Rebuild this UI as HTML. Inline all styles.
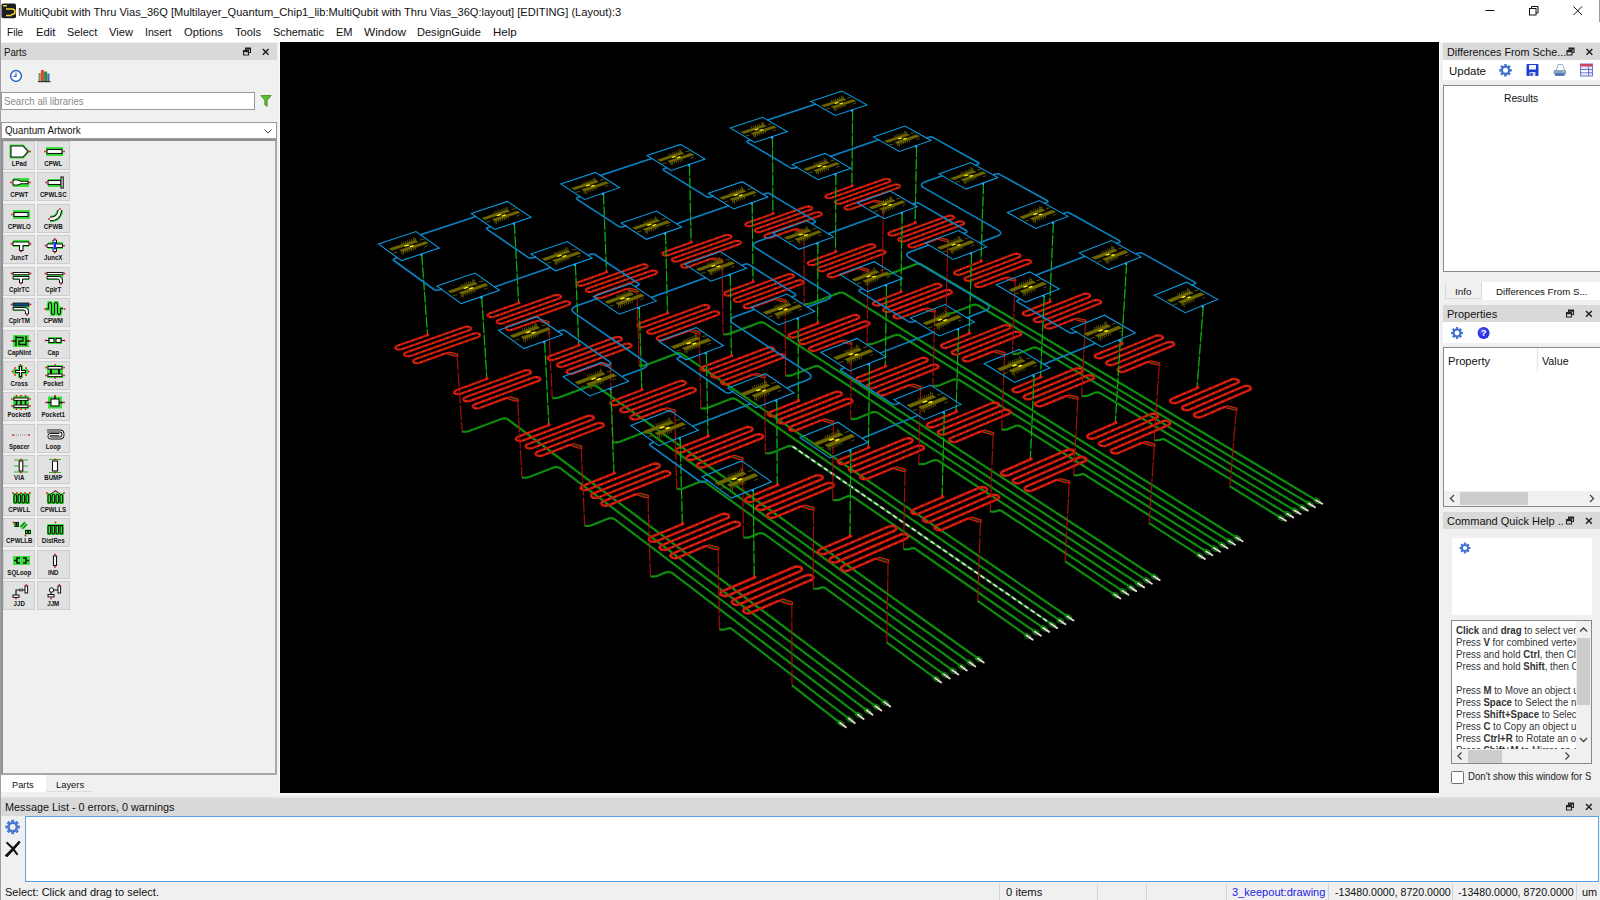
<!DOCTYPE html>
<html lang="en"><head><meta charset="utf-8"><title>MultiQubit with Thru Vias_36Q</title>
<style>
*{box-sizing:border-box;margin:0;padding:0}
html,body{width:1600px;height:900px;overflow:hidden;background:#f0f0f0}
body{font-family:"Liberation Sans",sans-serif;font-size:12px;color:#000;position:relative}
.abs{position:absolute}
.tx{position:absolute;white-space:nowrap;line-height:1;transform-origin:0 0;color:#111}
.hdr{position:absolute;height:17px;background:#d9d9d9}
.box{position:absolute;background:#fff;border:1px solid #828790}
#canvas{left:280px;top:42px;width:1159px;height:751px;background:#000;overflow:hidden}
.pbtn{position:absolute;width:32.5px;height:29px;background:#e1e1e1;border:1px solid #cdcdcd}
.pbtn b{position:absolute;left:-8px;right:-8px;bottom:1px;text-align:center;font-size:7.5px;line-height:8px;font-weight:bold;color:#111;transform:scaleX(.82)}
.pbtn svg{position:absolute;left:4px;top:2px}
.sb{position:absolute;background:#f0f0f0}
.thumb{position:absolute;background:#cdcdcd}
.sep{position:absolute;top:884px;width:1px;height:16px;background:#d4d4d4}
</style></head><body>
<div class="abs" style="left:0;top:0;width:1600px;height:42px;background:#fff"></div>
<!-- title bar -->
<svg class="abs" style="left:1px;top:3px" width="16" height="16" viewBox="0 0 16 16"><rect x="0.500" y="0.500" width="14.500" height="14.800" rx="1.800" fill="#1c1c26"/><path d="M2 2.800h4M5 5.900h6q3 0 3 2.800t-3 2.800h-1M5 12.600h5.500" fill="none" stroke="#f2d21c" stroke-width="1.500"/></svg>
<div class="tx" id="t0" style="left:18.0px;top:6.2px;font-size:11.6px;transform:scaleX(0.9556);">MultiQubit with Thru Vias_36Q [Multilayer_Quantum_Chip1_lib:MultiQubit with Thru Vias_36Q:layout] [EDITING] (Layout):3</div>
<svg class="abs" style="left:1480px;top:0" width="120" height="22" viewBox="0 0 120 22"><g fill="none" stroke="#111" stroke-width="1"><path d="M5.500 10.500h9"/><rect x="49.500" y="8.500" width="6.500" height="6.500"/><path d="M51.500 8.500v-2h6.500v6.500h-2"/><path d="M93.500 6.500l8.500 8.500M102 6.500l-8.500 8.500"/></g></svg>
<!-- menubar -->
<div class="tx" id="t1" style="left:6.5px;top:26.2px;font-size:11.6px;transform:scaleX(0.8684);">File</div><div class="tx" id="t2" style="left:35.5px;top:26.2px;font-size:11.6px;transform:scaleX(0.9750);">Edit</div><div class="tx" id="t3" style="left:67.0px;top:26.2px;font-size:11.6px;transform:scaleX(0.9375);">Select</div><div class="tx" id="t4" style="left:109.0px;top:26.2px;font-size:11.6px;transform:scaleX(0.9600);">View</div><div class="tx" id="t5" style="left:145.0px;top:26.2px;font-size:11.6px;transform:scaleX(0.9138);">Insert</div><div class="tx" id="t6" style="left:184.0px;top:26.2px;font-size:11.6px;transform:scaleX(0.9700);">Options</div><div class="tx" id="t7" style="left:235.0px;top:26.2px;font-size:11.6px;transform:scaleX(0.9630);">Tools</div><div class="tx" id="t8" style="left:273.3px;top:26.2px;font-size:11.6px;transform:scaleX(0.9407);">Schematic</div><div class="tx" id="t9" style="left:336.0px;top:26.2px;font-size:11.6px;transform:scaleX(0.9529);">EM</div><div class="tx" id="t10" style="left:363.6px;top:26.2px;font-size:11.6px;transform:scaleX(1.0195);">Window</div><div class="tx" id="t11" style="left:417.2px;top:26.2px;font-size:11.6px;transform:scaleX(0.9522);">DesignGuide</div><div class="tx" id="t12" style="left:493.2px;top:26.2px;font-size:11.6px;transform:scaleX(0.9917);">Help</div>

<!-- LEFT PANEL -->
<div class="hdr" style="left:1px;top:43px;width:276px"></div>
<div class="tx" id="t13" style="left:4.4px;top:47.2px;font-size:11px;transform:scaleX(0.8769);">Parts</div>
<svg class="abs" style="left:240px;top:45px" width="34" height="14" viewBox="0 0 34 14"><g fill="none" stroke="#222" stroke-width="1.100"><path d="M3.500 5.500h5v4.500h-5zM3.500 6.600h5" /><path d="M5.500 5.500v-2.500h5v4.500h-2M5.500 4.100h5"/><path d="M22.800 4l5.800 5.800M28.600 4l-5.800 5.800" stroke-width="1.500"/></g></svg>
<svg class="abs" style="left:8px;top:68px" width="48" height="16" viewBox="0 0 48 16"><circle cx="8" cy="8" r="5.400" fill="#fff" stroke="#2a62c8" stroke-width="1.500"/><path d="M8 4.500v3.800h-2.600" fill="none" stroke="#2a62c8" stroke-width="1.200"/><rect x="30.500" y="5" width="2.200" height="8" fill="#8c8c60"/><rect x="32.900" y="2" width="3" height="11" fill="#d8492e"/><rect x="36.100" y="3.500" width="3" height="9.500" fill="#2a8c3e"/><rect x="39.300" y="5.500" width="2.200" height="7.500" fill="#3a6fc8"/><rect x="30" y="13" width="12.500" height="1.200" fill="#333"/></svg>
<div class="box" style="left:1px;top:92px;width:254px;height:18px;border-color:#9a9a9a"></div>
<div class="tx" id="t14" style="left:4.0px;top:96.5px;font-size:10.3px;transform:scaleX(0.9412);color:#8a8a8a">Search all libraries</div>
<svg class="abs" style="left:260px;top:94px" width="12" height="14" viewBox="0 0 12 14"><path d="M0.800 1.500h10.400l-4 4.800v6l-2.400-1.500v-4.500z" fill="#5cb82e" stroke="#3f8f1e" stroke-width=".8"/></svg>
<div class="box" style="left:1px;top:122px;width:276px;height:17px;border-color:#9a9a9a"></div>
<div class="tx" id="t15" style="left:5.0px;top:126.1px;font-size:10.3px;transform:scaleX(0.9500);">Quantum Artwork</div>
<svg class="abs" style="left:263px;top:128px" width="10" height="8" viewBox="0 0 10 8"><path d="M1.500 1.500l3.500 3.500L8.500 1.500" fill="none" stroke="#444" stroke-width="1"/></svg>
<div class="abs" style="left:1px;top:139px;width:276px;height:636px;border:2px solid #a0a0a0;border-color:#8e9096 #a6a8ae #a6a8ae #8e9096;background:#f0f0f0"></div>
<div class="pbtn" style="left:2.6px;top:141.0px"><svg width="26" height="16" viewBox="0 0 26 16"><path d="M3 2h12l5 5.500l-5 5.500h-12z" fill="#fff" stroke="#3be03b" stroke-width="3"/><path d="M3 2h12l5 5.500l-5 5.500h-12z" fill="#fff" stroke="#111" stroke-width="1.1"/><rect x="21.2" y="6.7" width="1.6" height="1.6" fill="#e01010"/></svg><b>LPad</b></div>
<div class="pbtn" style="left:37.3px;top:141.0px"><svg width="26" height="16" viewBox="0 0 26 16"><rect x="4" y="3" width="17" height="9" fill="#3be03b"/><rect x="5" y="5.500" width="15" height="4" fill="#fff" stroke="#111" stroke-width="1.1"/><rect x="2.2" y="6.7" width="1.6" height="1.6" fill="#e01010"/><rect x="21.2" y="6.7" width="1.6" height="1.6" fill="#e01010"/></svg><b>CPWL</b></div>
<div class="pbtn" style="left:2.6px;top:172.4px"><svg width="26" height="16" viewBox="0 0 26 16"><rect x="5" y="3" width="16" height="9" fill="#3be03b"/><path d="M5 5h5l3 1.300h7v2.400h-7l-3 1.300h-5z" fill="#fff" stroke="#111" stroke-width="1.1"/><rect x="2.2" y="6.7" width="1.6" height="1.6" fill="#e01010"/><rect x="21.2" y="6.7" width="1.6" height="1.6" fill="#e01010"/></svg><b>CPWT</b></div>
<div class="pbtn" style="left:37.3px;top:172.4px"><svg width="26" height="16" viewBox="0 0 26 16"><rect x="6" y="4" width="14" height="8" fill="#3be03b"/><rect x="6" y="5.500" width="13" height="4" fill="#fff" stroke="#111" stroke-width="1.1"/><rect x="19" y="2" width="2.200" height="11" fill="#fff" stroke="#111" stroke-width="1.100"/><rect x="3.2" y="6.7" width="1.6" height="1.6" fill="#e01010"/></svg><b>CPWLSC</b></div>
<div class="pbtn" style="left:2.6px;top:203.9px"><svg width="26" height="16" viewBox="0 0 26 16"><rect x="5" y="3" width="17" height="9" fill="#3be03b"/><rect x="6" y="5.500" width="14" height="4" fill="#fff" stroke="#111" stroke-width="1.1"/><rect x="3.2" y="6.7" width="1.6" height="1.6" fill="#e01010"/></svg><b>CPWLO</b></div>
<div class="pbtn" style="left:37.3px;top:203.9px"><svg width="26" height="16" viewBox="0 0 26 16"><path d="M8 12q9 0 10-9" fill="none" stroke="#3be03b" stroke-width="6.500"/><path d="M8 12q9 0 10-9" fill="none" stroke="#111" stroke-width="4.400"/><path d="M8 12q9 0 10-9" fill="none" stroke="#fff" stroke-width="2.400"/><rect x="6.2" y="11.2" width="1.6" height="1.6" fill="#e01010"/><rect x="17.2" y="1.2" width="1.6" height="1.6" fill="#e01010"/></svg><b>CPWB</b></div>
<div class="pbtn" style="left:2.6px;top:235.3px"><svg width="26" height="16" viewBox="0 0 26 16"><rect x="5" y="2" width="16" height="7" fill="#3be03b"/><path d="M5 4h16v3.500h-6v5h-3.500v-5h-6.500z" fill="#fff" stroke="#111" stroke-width="1.1"/><rect x="2.7" y="4.9" width="1.6" height="1.6" fill="#e01010"/><rect x="21.7" y="4.9" width="1.6" height="1.6" fill="#e01010"/><rect x="12.4" y="12.7" width="1.6" height="1.6" fill="#e01010"/></svg><b>JuncT</b></div>
<div class="pbtn" style="left:37.3px;top:235.3px"><svg width="26" height="16" viewBox="0 0 26 16"><rect x="6" y="4" width="15" height="7" fill="#3be03b"/><path d="M5 6h6v-4h3.500v4h6v3.500h-6v4h-3.500v-4h-6z" fill="#fff" stroke="#111" stroke-width="1"/><rect x="11.500" y="4" width="2.600" height="7.500" fill="#1030ff"/><rect x="2.7" y="6.9" width="1.6" height="1.6" fill="#e01010"/><rect x="21.2" y="6.9" width="1.6" height="1.6" fill="#e01010"/><rect x="12.0" y="0.2" width="1.6" height="1.6" fill="#e01010"/><rect x="12.0" y="13.7" width="1.6" height="1.6" fill="#e01010"/></svg><b>JuncX</b></div>
<div class="pbtn" style="left:2.6px;top:266.7px"><svg width="26" height="16" viewBox="0 0 26 16"><rect x="5" y="2" width="16" height="8" fill="#3be03b"/><rect x="5" y="2.500" width="16" height="2.200" fill="#fff" stroke="#111" stroke-width="1"/><path d="M5 6.500h16v2.500h-6.500v4h-3v-4h-6.500z" fill="#fff" stroke="#111" stroke-width="1"/><rect x="2.7" y="2.7" width="1.6" height="1.6" fill="#e01010"/><rect x="21.7" y="2.7" width="1.6" height="1.6" fill="#e01010"/><rect x="12.2" y="12.7" width="1.6" height="1.6" fill="#e01010"/></svg><b>CplrTC</b></div>
<div class="pbtn" style="left:37.3px;top:266.7px"><svg width="26" height="16" viewBox="0 0 26 16"><rect x="5" y="2" width="16" height="8" fill="#3be03b"/><rect x="5" y="2.500" width="16" height="2.200" fill="#fff" stroke="#111" stroke-width="1"/><path d="M5 6.500h11q4.500 0 4.500 4.500v2h-3v-2q0-2-2-2h-10.500z" fill="#fff" stroke="#111" stroke-width="1"/><rect x="2.7" y="2.7" width="1.6" height="1.6" fill="#e01010"/><rect x="21.7" y="2.7" width="1.6" height="1.6" fill="#e01010"/><rect x="18.2" y="13.2" width="1.6" height="1.6" fill="#e01010"/></svg><b>CplrT</b></div>
<div class="pbtn" style="left:2.6px;top:298.1px"><svg width="26" height="16" viewBox="0 0 26 16"><rect x="5" y="2" width="16" height="8" fill="#3be03b"/><rect x="5" y="2" width="16" height="3" fill="#0a4a8a" stroke="#111" stroke-width=".8"/><path d="M5 6.500h11q4.500 0 4.500 4.500v2h-3v-2q0-2-2-2h-10.500z" fill="#fff" stroke="#111" stroke-width="1"/><rect x="2.7" y="2.7" width="1.6" height="1.6" fill="#e01010"/><rect x="21.7" y="2.7" width="1.6" height="1.6" fill="#e01010"/><rect x="18.2" y="13.2" width="1.6" height="1.6" fill="#e01010"/></svg><b>CplrTM</b></div>
<div class="pbtn" style="left:37.3px;top:298.1px"><svg width="26" height="16" viewBox="0 0 26 16"><path d="M4 8h2.500v-5q0-1.500 1.500-1.500t1.500 1.500v9q0 1.500 1.500 1.500t1.500-1.500v-9q0-1.500 1.500-1.500t1.500 1.500v9q0 1.500 1.500 1.500t1.500-1.500v-4.500h2.500" fill="none" stroke="#3be03b" stroke-width="3.400"/><path d="M4 8h2.500v-5q0-1.500 1.500-1.500t1.500 1.500v9q0 1.500 1.500 1.500t1.500-1.500v-9q0-1.500 1.500-1.500t1.500 1.500v9q0 1.500 1.500 1.500t1.500-1.500v-4.500h2.500" fill="none" stroke="#111" stroke-width="1"/><rect x="2.2" y="7.2" width="1.6" height="1.6" fill="#e01010"/><rect x="21.7" y="7.2" width="1.6" height="1.6" fill="#e01010"/></svg><b>CPWM</b></div>
<div class="pbtn" style="left:2.6px;top:329.6px"><svg width="26" height="16" viewBox="0 0 26 16"><rect x="5" y="2" width="16" height="12" fill="#3be03b"/><path d="M8 3v10M18 3v10M8 4.500h7v3.500h-4v3.500h7M5 8h3M18 8h3" fill="none" stroke="#111" stroke-width="1.300"/><rect x="3.2" y="7.2" width="1.6" height="1.6" fill="#e01010"/><rect x="21.2" y="7.2" width="1.6" height="1.6" fill="#e01010"/></svg><b>CapNInt</b></div>
<div class="pbtn" style="left:37.3px;top:329.6px"><svg width="26" height="16" viewBox="0 0 26 16"><rect x="6" y="4" width="14" height="7" fill="#3be03b"/><rect x="7" y="5.500" width="5" height="4" fill="#fff" stroke="#111" stroke-width="1.100"/><rect x="14" y="5.500" width="5" height="4" fill="#fff" stroke="#111" stroke-width="1.100"/><path d="M4 7.500h3M19 7.500h3" stroke="#111" stroke-width="1"/><rect x="2.7" y="6.7" width="1.6" height="1.6" fill="#e01010"/><rect x="21.7" y="6.7" width="1.6" height="1.6" fill="#e01010"/></svg><b>Cap</b></div>
<div class="pbtn" style="left:2.6px;top:361.0px"><svg width="26" height="16" viewBox="0 0 26 16"><path d="M10 1h5v4h5v5h-5v4h-5v-4h-5v-5h5z" fill="#3be03b"/><path d="M11.500 2.500h2v4h4v2h-4v4h-2v-4h-4v-2h4z" fill="#fff" stroke="#111" stroke-width="1.100"/><rect x="11.7" y="0.0" width="1.6" height="1.6" fill="#e01010"/><rect x="11.7" y="13.4" width="1.6" height="1.6" fill="#e01010"/><rect x="3.7" y="6.7" width="1.6" height="1.6" fill="#e01010"/><rect x="19.7" y="6.7" width="1.6" height="1.6" fill="#e01010"/><rect x="6.2" y="3.2" width="1.6" height="1.6" fill="#e01010"/><rect x="17.2" y="3.2" width="1.6" height="1.6" fill="#e01010"/><rect x="6.2" y="10.2" width="1.6" height="1.6" fill="#e01010"/><rect x="17.2" y="10.2" width="1.6" height="1.6" fill="#e01010"/></svg><b>Cross</b></div>
<div class="pbtn" style="left:37.3px;top:361.0px"><svg width="26" height="16" viewBox="0 0 26 16"><rect x="5" y="1" width="16" height="13" fill="#3be03b"/><rect x="6" y="2.500" width="14" height="2.600" fill="#fff" stroke="#111" stroke-width="1"/><rect x="6" y="10" width="14" height="2.600" fill="#fff" stroke="#111" stroke-width="1"/><path d="M9 5v5M17 5v5" stroke="#111" stroke-width="2"/><rect x="3.2" y="2.7" width="1.6" height="1.6" fill="#e01010"/><rect x="21.2" y="2.7" width="1.6" height="1.6" fill="#e01010"/><rect x="3.2" y="10.7" width="1.6" height="1.6" fill="#e01010"/><rect x="21.2" y="10.7" width="1.6" height="1.6" fill="#e01010"/><rect x="12.2" y="0.2" width="1.6" height="1.6" fill="#e01010"/><rect x="12.2" y="13.2" width="1.6" height="1.6" fill="#e01010"/></svg><b>Pocket</b></div>
<div class="pbtn" style="left:2.6px;top:392.4px"><svg width="26" height="16" viewBox="0 0 26 16"><rect x="5" y="1" width="16" height="13" fill="#3be03b"/><rect x="6" y="3" width="14" height="2.400" fill="#fff" stroke="#111" stroke-width="1"/><rect x="6" y="10" width="14" height="2.400" fill="#fff" stroke="#111" stroke-width="1"/><path d="M8.500 5v5M13 5v5M17.500 5v5" stroke="#111" stroke-width="1.600"/><rect x="3.2" y="3.2" width="1.6" height="1.6" fill="#e01010"/><rect x="21.2" y="3.2" width="1.6" height="1.6" fill="#e01010"/><rect x="3.2" y="10.2" width="1.6" height="1.6" fill="#e01010"/><rect x="21.2" y="10.2" width="1.6" height="1.6" fill="#e01010"/><rect x="7.7" y="0.0" width="1.6" height="1.6" fill="#e01010"/><rect x="12.2" y="0.0" width="1.6" height="1.6" fill="#e01010"/><rect x="16.7" y="0.0" width="1.6" height="1.6" fill="#e01010"/><rect x="7.7" y="13.4" width="1.6" height="1.6" fill="#e01010"/><rect x="12.2" y="13.4" width="1.6" height="1.6" fill="#e01010"/><rect x="16.7" y="13.4" width="1.6" height="1.6" fill="#e01010"/></svg><b>Pocket6</b></div>
<div class="pbtn" style="left:37.3px;top:392.4px"><svg width="26" height="16" viewBox="0 0 26 16"><rect x="6" y="1.500" width="14" height="12" fill="#3be03b"/><rect x="9" y="4" width="8" height="7" fill="#fff" stroke="#111" stroke-width="1.100"/><path d="M13 1v3M5 7.500h4M17 7.500h4" stroke="#111" stroke-width="1.400"/><rect x="12.2" y="0.0" width="1.6" height="1.6" fill="#e01010"/><rect x="3.2" y="6.7" width="1.6" height="1.6" fill="#e01010"/><rect x="21.2" y="6.7" width="1.6" height="1.6" fill="#e01010"/></svg><b>Pocket1</b></div>
<div class="pbtn" style="left:2.6px;top:423.9px"><svg width="26" height="16" viewBox="0 0 26 16"><path d="M6 8h14" stroke="#888" stroke-width="1" stroke-dasharray="1 1"/><rect x="4.2" y="7.2" width="1.6" height="1.6" fill="#e01010"/><rect x="20.2" y="7.2" width="1.6" height="1.6" fill="#e01010"/></svg><b>Spacer</b></div>
<div class="pbtn" style="left:37.3px;top:423.9px"><svg width="26" height="16" viewBox="0 0 26 16"><path d="M5 4h13q3 0 3 3.500t-3 3.500h-9q-2 0-2-1.700t2-1.700h8" fill="none" stroke="#111" stroke-width="3"/><path d="M5 4h13q3 0 3 3.500t-3 3.500h-9q-2 0-2-1.700t2-1.700h8" fill="none" stroke="#fff" stroke-width="1.200"/></svg><b>Loop</b></div>
<div class="pbtn" style="left:2.6px;top:455.3px"><svg width="26" height="16" viewBox="0 0 26 16"><path d="M6 2h14M6 8h14M6 14h14" stroke="#28b428" stroke-width="1"/><rect x="11.200" y="3" width="3.600" height="10" fill="#fff" stroke="#111" stroke-width="1.100"/><rect x="12.2" y="0.7" width="1.6" height="1.6" fill="#e01010"/><rect x="12.2" y="13.7" width="1.6" height="1.6" fill="#e01010"/></svg><b>VIA</b></div>
<div class="pbtn" style="left:37.3px;top:455.3px"><svg width="26" height="16" viewBox="0 0 26 16"><path d="M7 1.500h12M7 14.500h12" stroke="#28b428" stroke-width="1"/><rect x="10.500" y="3" width="5" height="10" fill="#fff" stroke="#111" stroke-width="1.100"/><rect x="12.2" y="0.7" width="1.6" height="1.6" fill="#e01010"/><rect x="12.2" y="13.7" width="1.6" height="1.6" fill="#e01010"/></svg><b>BUMP</b></div>
<div class="pbtn" style="left:2.6px;top:486.7px"><svg width="26" height="16" viewBox="0 0 26 16"><rect x="5" y="3" width="17" height="11" fill="#3be03b"/><rect x="6" y="4.500" width="2.600" height="8.500" rx="1.2" fill="none" stroke="#111" stroke-width="1.100"/><rect x="10" y="4.500" width="2.600" height="8.500" rx="1.2" fill="none" stroke="#111" stroke-width="1.100"/><rect x="14" y="4.500" width="2.600" height="8.500" rx="1.2" fill="none" stroke="#111" stroke-width="1.100"/><rect x="18" y="4.500" width="2.600" height="8.500" rx="1.2" fill="none" stroke="#111" stroke-width="1.100"/><rect x="4.2" y="2.2" width="1.6" height="1.6" fill="#e01010"/><rect x="21.2" y="2.2" width="1.6" height="1.6" fill="#e01010"/><rect x="8.2" y="2.2" width="1.6" height="1.6" fill="#e01010"/><rect x="12.2" y="2.2" width="1.6" height="1.6" fill="#e01010"/><rect x="16.2" y="2.2" width="1.6" height="1.6" fill="#e01010"/></svg><b>CPWLL</b></div>
<div class="pbtn" style="left:37.3px;top:486.7px"><svg width="26" height="16" viewBox="0 0 26 16"><rect x="5" y="3" width="17" height="11" fill="#3be03b"/><rect x="6" y="4.500" width="2.600" height="8.500" rx="1.2" fill="none" stroke="#111" stroke-width="1.100"/><rect x="10" y="4.500" width="2.600" height="8.500" rx="1.2" fill="none" stroke="#111" stroke-width="1.100"/><rect x="14" y="4.500" width="2.600" height="8.500" rx="1.2" fill="none" stroke="#111" stroke-width="1.100"/><rect x="18" y="4.500" width="2.600" height="8.500" rx="1.2" fill="none" stroke="#111" stroke-width="1.100"/><path d="M9 4q4.500-5 9 0" fill="none" stroke="#111" stroke-width="1"/><rect x="4.2" y="2.2" width="1.6" height="1.6" fill="#e01010"/><rect x="21.2" y="2.2" width="1.6" height="1.6" fill="#e01010"/><rect x="12.7" y="0.2" width="1.6" height="1.6" fill="#e01010"/></svg><b>CPWLLS</b></div>
<div class="pbtn" style="left:2.6px;top:518.2px"><svg width="26" height="16" viewBox="0 0 26 16"><rect x="6" y="1" width="5" height="5" fill="#3be03b"/><rect x="7" y="1.500" width="1.500" height="4" fill="none" stroke="#111" stroke-width=".9"/><rect x="9" y="1.500" width="1.500" height="4" fill="none" stroke="#111" stroke-width=".9"/><path d="M13 7l5-5" stroke="#3be03b" stroke-width="5"/><path d="M13 5.500l4-4M15 7.500l4-4" stroke="#111" stroke-width=".9"/><rect x="17" y="8.500" width="6" height="5" fill="#3be03b"/><rect x="17.500" y="9.500" width="2" height="3" fill="none" stroke="#111" stroke-width=".9"/><rect x="20.500" y="9.500" width="2" height="3" fill="none" stroke="#111" stroke-width=".9"/><rect x="4.7" y="0.7" width="1.6" height="1.6" fill="#e01010"/><rect x="16.7" y="13.7" width="1.6" height="1.6" fill="#e01010"/></svg><b>CPWLLB</b></div>
<div class="pbtn" style="left:37.3px;top:518.2px"><svg width="26" height="16" viewBox="0 0 26 16"><rect x="5" y="3" width="17" height="11" fill="#3be03b"/><rect x="6" y="4.500" width="2.600" height="8.500" rx="1.2" fill="none" stroke="#111" stroke-width="1.100"/><rect x="10" y="4.500" width="2.600" height="8.500" rx="1.2" fill="none" stroke="#111" stroke-width="1.100"/><rect x="14" y="4.500" width="2.600" height="8.500" rx="1.2" fill="none" stroke="#111" stroke-width="1.100"/><rect x="18" y="4.500" width="2.600" height="8.500" rx="1.2" fill="none" stroke="#111" stroke-width="1.100"/><path d="M6 4.500h15" stroke="#111" stroke-width="1"/><rect x="12.7" y="0.7" width="1.6" height="1.6" fill="#e01010"/></svg><b>DistRes</b></div>
<div class="pbtn" style="left:2.6px;top:549.6px"><svg width="26" height="16" viewBox="0 0 26 16"><rect x="5" y="3" width="17" height="9" fill="#3be03b"/><path d="M6 7.500h3M18 7.500h3M12 5h-3v5h3M15 5h3v5h-3" fill="none" stroke="#111" stroke-width="1.500"/></svg><b>SQLoop</b></div>
<div class="pbtn" style="left:37.3px;top:549.6px"><svg width="26" height="16" viewBox="0 0 26 16"><rect x="11.500" y="3" width="3" height="9.500" fill="#fff" stroke="#111" stroke-width="1.100"/><rect x="12.2" y="0.7" width="1.6" height="1.6" fill="#e01010"/><rect x="12.2" y="13.2" width="1.6" height="1.6" fill="#e01010"/></svg><b>IND</b></div>
<div class="pbtn" style="left:2.6px;top:581.0px"><svg width="26" height="16" viewBox="0 0 26 16"><path d="M8 11v-5h4M12 4.500v3M14 4.500v3M14 6h3" fill="none" stroke="#111" stroke-width="1.100"/><rect x="17" y="2" width="2.600" height="7" fill="#fff" stroke="#111" stroke-width="1"/><rect x="5" y="11" width="6" height="2.400" fill="#fff" stroke="#111" stroke-width="1"/><rect x="17.5" y="0.2" width="1.6" height="1.6" fill="#e01010"/><rect x="7.2" y="13.7" width="1.6" height="1.6" fill="#e01010"/></svg><b>JJD</b></div>
<div class="pbtn" style="left:37.3px;top:581.0px"><svg width="26" height="16" viewBox="0 0 26 16"><path d="M9 11v-3M11 8v-2h5" fill="none" stroke="#111" stroke-width="1.100"/><circle cx="9.500" cy="6" r="2.200" fill="#fff" stroke="#111" stroke-width="1"/><rect x="16" y="2" width="2.600" height="7" fill="#fff" stroke="#111" stroke-width="1"/><rect x="6" y="10.500" width="6" height="2.400" fill="#fff" stroke="#111" stroke-width="1"/><rect x="16.5" y="0.2" width="1.6" height="1.6" fill="#e01010"/><rect x="8.2" y="13.7" width="1.6" height="1.6" fill="#e01010"/></svg><b>JJM</b></div>
<div class="abs" style="left:1px;top:775px;width:45px;height:17px;background:#fff"></div>
<div class="tx" id="t16" style="left:12.0px;top:780.0px;font-size:9.4px;transform:scaleX(0.9864);">Parts</div>
<div class="abs" style="left:46px;top:791px;width:47px;height:1px;background:#dcdcdc"></div>
<div class="tx" id="t17" style="left:56.0px;top:779.6px;font-size:9.4px;">Layers</div>

<!-- CANVAS -->
<div class="abs" style="left:279px;top:42px;width:1161px;height:753px;background:#fafafa"></div>
<div id="canvas" class="abs"><svg width="1159" height="751" viewBox="0 0 1159 751" style="display:block">
<rect width="1159" height="751" fill="#000"/>
<path d="M182.1 389.6 L184.6 389.7 L185.6 389.7 L186.6 389.6 L187.5 389.5 L188.4 389.3 L189.2 389 L221.3 377 L222.8 376.5 L224.3 376.4 L225.6 376.4 L226.9 376.8 L228 377.5 L605.9 661.3 M242 435.6 L244.5 435.7 L245.5 435.7 L246.5 435.6 L247.4 435.5 L248.3 435.2 L249.2 435 L273.2 425.7 L274.8 425.2 L276.2 425 L277.6 425.1 L278.9 425.5 L280.1 426.2 L597.1 665.4 M304.7 483.8 L307.3 483.9 L308.3 483.9 L309.3 483.8 L310.2 483.7 L311.1 483.4 L312 483.1 L327.7 476.8 L329.3 476.3 L330.8 476.1 L332.3 476.2 L333.6 476.6 L334.8 477.3 L588.3 669.5 M370.4 534.4 L373.1 534.5 L374.1 534.5 L375.1 534.4 L376.1 534.2 L377 534 L377.9 533.7 L385.1 530.6 L386.7 530.1 L388.3 529.9 L389.8 530 L391.1 530.4 L392.4 531.2 L579.4 673.7 M439.4 587.5 L442.2 587.6 L443.3 587.6 L444.3 587.5 L445.3 587.3 L446.2 587.1 L447.1 586.7 L447.4 586.6 L448.4 586.3 L449.3 586.1 L450.2 586.2 L451 586.5 L451.7 586.9 L570.5 677.8 M512 643.3 L561.5 682 M272.3 356 L274.7 356.1 L275.7 356.1 L276.6 356 L277.5 355.8 L278.4 355.6 L279.2 355.4 L310.1 343.8 L311.6 343.4 L313.1 343.2 L314.4 343.3 L315.6 343.7 L316.7 344.3 L699.4 617.5 M333.1 400.4 L335.6 400.4 L336.5 400.4 L337.5 400.4 L338.4 400.2 L339.3 400 L340.1 399.7 L363.2 390.8 L364.8 390.3 L366.2 390.1 L367.6 390.2 L368.8 390.6 L370 391.3 L691 621.5 M396.7 446.8 L399.2 446.9 L400.3 446.9 L401.2 446.8 L402.1 446.7 L403 446.5 L403.9 446.2 L419 440.1 L420.5 439.6 L422 439.4 L423.4 439.5 L424.7 439.9 L425.9 440.6 L682.5 625.4 M463.4 495.5 L466 495.6 L467 495.6 L468 495.5 L468.9 495.4 L469.8 495.1 L470.7 494.8 L477.6 491.9 L479.2 491.4 L480.7 491.2 L482.1 491.3 L483.5 491.7 L484.8 492.4 L674 629.4 M533.3 546.6 L536 546.7 L537 546.7 L538.1 546.6 L539 546.4 L539.9 546.2 L540.8 545.9 L541.1 545.7 L542 545.4 L542.9 545.3 L543.7 545.4 L544.6 545.6 L545.3 546.1 L665.4 633.4 M606.8 600.3 L656.9 637.4 M359.2 323.6 L361.6 323.6 L362.6 323.6 L363.5 323.6 L364.3 323.4 L365.2 323.2 L366 323 L395.8 311.8 L397.3 311.4 L398.7 311.2 L400 311.3 L401.2 311.7 L402.3 312.3 L789.1 575.5 M420.8 366.4 L423.3 366.5 L424.3 366.5 L425.2 366.4 L426.1 366.3 L426.9 366.1 L427.7 365.8 L450 357.2 L451.5 356.7 L452.9 356.5 L454.2 356.6 L455.5 357 L456.7 357.6 L781 579.3 M485.3 411.2 L487.8 411.3 L488.8 411.3 L489.7 411.2 L490.6 411.1 L491.5 410.8 L492.3 410.6 L506.8 404.7 L508.4 404.2 L509.8 404 L511.2 404.1 L512.5 404.5 L513.7 405.2 L772.9 583.1 M552.8 458.1 L555.3 458.2 L556.4 458.2 L557.3 458.1 L558.2 458 L559.1 457.8 L559.9 457.5 L566.6 454.7 L568.1 454.2 L569.6 454 L571 454.1 L572.3 454.5 L573.6 455.2 L764.7 586.9 M623.5 507.3 L626.1 507.4 L627.2 507.4 L628.1 507.3 L629.1 507.2 L630 506.9 L630.8 506.6 L631.1 506.5 L632 506.2 L632.8 506.1 L633.7 506.1 L634.5 506.4 L635.2 506.8 L756.5 590.8 M697.7 558.9 L748.3 594.6 M443.1 292.3 L445.5 292.3 L446.4 292.3 L447.3 292.3 L448.1 292.1 L448.9 291.9 L449.7 291.7 L478.5 280.9 L479.9 280.5 L481.3 280.4 L482.6 280.4 L483.8 280.8 L484.9 281.4 L875.3 535.2 M505.5 333.6 L507.9 333.7 L508.8 333.7 L509.7 333.6 L510.6 333.5 L511.4 333.3 L512.2 333 L533.7 324.7 L535.1 324.3 L536.5 324.1 L537.8 324.2 L539.1 324.6 L540.2 325.2 L867.5 538.9 M570.6 376.9 L573.1 377 L574.1 377 L575 376.9 L575.9 376.8 L576.7 376.6 L577.5 376.3 L591.5 370.6 L593 370.2 L594.4 370 L595.7 370.1 L597 370.5 L598.3 371.1 L859.7 542.5 M638.8 422.2 L641.4 422.2 L642.3 422.2 L643.3 422.1 L644.2 422 L645 421.8 L645.8 421.5 L652.2 418.8 L653.7 418.3 L655.1 418.1 L656.5 418.2 L657.9 418.6 L659.1 419.3 L851.9 546.2 M710.2 469.5 L712.8 469.6 L713.8 469.6 L714.8 469.5 L715.7 469.4 L716.6 469.2 L717.4 468.8 L717.6 468.7 L718.5 468.4 L719.3 468.3 L720.2 468.4 L720.9 468.6 L721.7 469 L844 549.9 M785.1 519.2 L836.1 553.6 M524.1 262 L526.4 262.1 L527.3 262.1 L528.2 262 L529 261.9 L529.8 261.7 L530.6 261.5 L558.4 251.1 L559.7 250.7 L561.1 250.6 L562.3 250.6 L563.5 251 L564.7 251.5 L958.1 496.5 M587.1 302.1 L589.5 302.1 L590.4 302.1 L591.3 302.1 L592.1 301.9 L592.9 301.7 L593.7 301.5 L614.4 293.4 L615.8 293 L617.2 292.9 L618.5 292.9 L619.7 293.3 L620.9 293.9 L950.6 500 M652.9 343.8 L655.3 343.9 L656.3 343.9 L657.2 343.8 L658 343.7 L658.9 343.5 L659.6 343.2 L673.1 337.8 L674.6 337.3 L675.9 337.2 L677.3 337.3 L678.5 337.6 L679.8 338.2 L943.1 503.5 M721.7 387.5 L724.2 387.6 L725.2 387.6 L726.1 387.5 L726.9 387.4 L727.8 387.1 L728.5 386.9 L734.7 384.3 L736.1 383.8 L737.5 383.6 L738.9 383.7 L740.2 384.1 L741.5 384.8 L935.6 507 M793.7 433.2 L796.2 433.3 L797.2 433.3 L798.2 433.2 L799 433 L799.9 432.8 L800.7 432.5 L800.9 432.4 L801.7 432.1 L802.6 432 L803.4 432.1 L804.2 432.3 L804.9 432.7 L928 510.5 M869.1 481.1 L920.4 514.1 M602.3 232.9 L604.6 232.9 L605.5 232.9 L606.4 232.9 L607.2 232.7 L607.9 232.6 L608.7 232.3 L635.5 222.3 L636.9 221.9 L638.2 221.8 L639.4 221.8 L640.6 222.2 L641.8 222.7 L1037.8 459.2 M665.9 271.5 L668.3 271.6 L669.2 271.6 L670 271.5 L670.9 271.4 L671.6 271.2 L672.4 271 L692.4 263.2 L693.7 262.8 L695.1 262.7 L696.3 262.8 L697.6 263.1 L698.8 263.7 L1030.6 462.6 M732.3 311.9 L734.7 312 L735.6 312 L736.5 311.9 L737.3 311.8 L738.1 311.6 L738.8 311.3 L751.9 306.1 L753.3 305.7 L754.6 305.5 L755.9 305.6 L757.2 305.9 L758.4 306.5 L1023.4 465.9 M801.6 354.1 L804 354.2 L805 354.2 L805.9 354.1 L806.7 354 L807.5 353.7 L808.3 353.5 L814.2 351 L815.6 350.5 L817 350.4 L818.3 350.5 L819.6 350.8 L820.9 351.5 L1016.1 469.3 M874.1 398.2 L876.6 398.3 L877.5 398.2 L878.4 398.2 L879.3 398 L880.1 397.8 L880.9 397.5 L881.1 397.4 L881.9 397.2 L882.7 397.1 L883.5 397.1 L884.3 397.3 L885.1 397.7 L1008.8 472.7 M949.9 444.3 L1001.5 476.2" fill="none" stroke="#0a7d0a" stroke-width="2.3" stroke-linejoin="round"/>
<path d="M182.1 389.6 L184.6 389.7 L185.6 389.7 L186.6 389.6 L187.5 389.5 L188.4 389.3 L189.2 389 L221.3 377 L222.8 376.5 L224.3 376.4 L225.6 376.4 L226.9 376.8 L228 377.5 L605.9 661.3 M242 435.6 L244.5 435.7 L245.5 435.7 L246.5 435.6 L247.4 435.5 L248.3 435.2 L249.2 435 L273.2 425.7 L274.8 425.2 L276.2 425 L277.6 425.1 L278.9 425.5 L280.1 426.2 L597.1 665.4 M304.7 483.8 L307.3 483.9 L308.3 483.9 L309.3 483.8 L310.2 483.7 L311.1 483.4 L312 483.1 L327.7 476.8 L329.3 476.3 L330.8 476.1 L332.3 476.2 L333.6 476.6 L334.8 477.3 L588.3 669.5 M370.4 534.4 L373.1 534.5 L374.1 534.5 L375.1 534.4 L376.1 534.2 L377 534 L377.9 533.7 L385.1 530.6 L386.7 530.1 L388.3 529.9 L389.8 530 L391.1 530.4 L392.4 531.2 L579.4 673.7 M439.4 587.5 L442.2 587.6 L443.3 587.6 L444.3 587.5 L445.3 587.3 L446.2 587.1 L447.1 586.7 L447.4 586.6 L448.4 586.3 L449.3 586.1 L450.2 586.2 L451 586.5 L451.7 586.9 L570.5 677.8 M512 643.3 L561.5 682 M272.3 356 L274.7 356.1 L275.7 356.1 L276.6 356 L277.5 355.8 L278.4 355.6 L279.2 355.4 L310.1 343.8 L311.6 343.4 L313.1 343.2 L314.4 343.3 L315.6 343.7 L316.7 344.3 L699.4 617.5 M333.1 400.4 L335.6 400.4 L336.5 400.4 L337.5 400.4 L338.4 400.2 L339.3 400 L340.1 399.7 L363.2 390.8 L364.8 390.3 L366.2 390.1 L367.6 390.2 L368.8 390.6 L370 391.3 L691 621.5 M396.7 446.8 L399.2 446.9 L400.3 446.9 L401.2 446.8 L402.1 446.7 L403 446.5 L403.9 446.2 L419 440.1 L420.5 439.6 L422 439.4 L423.4 439.5 L424.7 439.9 L425.9 440.6 L682.5 625.4 M463.4 495.5 L466 495.6 L467 495.6 L468 495.5 L468.9 495.4 L469.8 495.1 L470.7 494.8 L477.6 491.9 L479.2 491.4 L480.7 491.2 L482.1 491.3 L483.5 491.7 L484.8 492.4 L674 629.4 M533.3 546.6 L536 546.7 L537 546.7 L538.1 546.6 L539 546.4 L539.9 546.2 L540.8 545.9 L541.1 545.7 L542 545.4 L542.9 545.3 L543.7 545.4 L544.6 545.6 L545.3 546.1 L665.4 633.4 M606.8 600.3 L656.9 637.4 M359.2 323.6 L361.6 323.6 L362.6 323.6 L363.5 323.6 L364.3 323.4 L365.2 323.2 L366 323 L395.8 311.8 L397.3 311.4 L398.7 311.2 L400 311.3 L401.2 311.7 L402.3 312.3 L789.1 575.5 M420.8 366.4 L423.3 366.5 L424.3 366.5 L425.2 366.4 L426.1 366.3 L426.9 366.1 L427.7 365.8 L450 357.2 L451.5 356.7 L452.9 356.5 L454.2 356.6 L455.5 357 L456.7 357.6 L781 579.3 M485.3 411.2 L487.8 411.3 L488.8 411.3 L489.7 411.2 L490.6 411.1 L491.5 410.8 L492.3 410.6 L506.8 404.7 L508.4 404.2 L509.8 404 L511.2 404.1 L512.5 404.5 L513.7 405.2 L772.9 583.1 M552.8 458.1 L555.3 458.2 L556.4 458.2 L557.3 458.1 L558.2 458 L559.1 457.8 L559.9 457.5 L566.6 454.7 L568.1 454.2 L569.6 454 L571 454.1 L572.3 454.5 L573.6 455.2 L764.7 586.9 M623.5 507.3 L626.1 507.4 L627.2 507.4 L628.1 507.3 L629.1 507.2 L630 506.9 L630.8 506.6 L631.1 506.5 L632 506.2 L632.8 506.1 L633.7 506.1 L634.5 506.4 L635.2 506.8 L756.5 590.8 M697.7 558.9 L748.3 594.6 M443.1 292.3 L445.5 292.3 L446.4 292.3 L447.3 292.3 L448.1 292.1 L448.9 291.9 L449.7 291.7 L478.5 280.9 L479.9 280.5 L481.3 280.4 L482.6 280.4 L483.8 280.8 L484.9 281.4 L875.3 535.2 M505.5 333.6 L507.9 333.7 L508.8 333.7 L509.7 333.6 L510.6 333.5 L511.4 333.3 L512.2 333 L533.7 324.7 L535.1 324.3 L536.5 324.1 L537.8 324.2 L539.1 324.6 L540.2 325.2 L867.5 538.9 M570.6 376.9 L573.1 377 L574.1 377 L575 376.9 L575.9 376.8 L576.7 376.6 L577.5 376.3 L591.5 370.6 L593 370.2 L594.4 370 L595.7 370.1 L597 370.5 L598.3 371.1 L859.7 542.5 M638.8 422.2 L641.4 422.2 L642.3 422.2 L643.3 422.1 L644.2 422 L645 421.8 L645.8 421.5 L652.2 418.8 L653.7 418.3 L655.1 418.1 L656.5 418.2 L657.9 418.6 L659.1 419.3 L851.9 546.2 M710.2 469.5 L712.8 469.6 L713.8 469.6 L714.8 469.5 L715.7 469.4 L716.6 469.2 L717.4 468.8 L717.6 468.7 L718.5 468.4 L719.3 468.3 L720.2 468.4 L720.9 468.6 L721.7 469 L844 549.9 M785.1 519.2 L836.1 553.6 M524.1 262 L526.4 262.1 L527.3 262.1 L528.2 262 L529 261.9 L529.8 261.7 L530.6 261.5 L558.4 251.1 L559.7 250.7 L561.1 250.6 L562.3 250.6 L563.5 251 L564.7 251.5 L958.1 496.5 M587.1 302.1 L589.5 302.1 L590.4 302.1 L591.3 302.1 L592.1 301.9 L592.9 301.7 L593.7 301.5 L614.4 293.4 L615.8 293 L617.2 292.9 L618.5 292.9 L619.7 293.3 L620.9 293.9 L950.6 500 M652.9 343.8 L655.3 343.9 L656.3 343.9 L657.2 343.8 L658 343.7 L658.9 343.5 L659.6 343.2 L673.1 337.8 L674.6 337.3 L675.9 337.2 L677.3 337.3 L678.5 337.6 L679.8 338.2 L943.1 503.5 M721.7 387.5 L724.2 387.6 L725.2 387.6 L726.1 387.5 L726.9 387.4 L727.8 387.1 L728.5 386.9 L734.7 384.3 L736.1 383.8 L737.5 383.6 L738.9 383.7 L740.2 384.1 L741.5 384.8 L935.6 507 M793.7 433.2 L796.2 433.3 L797.2 433.3 L798.2 433.2 L799 433 L799.9 432.8 L800.7 432.5 L800.9 432.4 L801.7 432.1 L802.6 432 L803.4 432.1 L804.2 432.3 L804.9 432.7 L928 510.5 M869.1 481.1 L920.4 514.1 M602.3 232.9 L604.6 232.9 L605.5 232.9 L606.4 232.9 L607.2 232.7 L607.9 232.6 L608.7 232.3 L635.5 222.3 L636.9 221.9 L638.2 221.8 L639.4 221.8 L640.6 222.2 L641.8 222.7 L1037.8 459.2 M665.9 271.5 L668.3 271.6 L669.2 271.6 L670 271.5 L670.9 271.4 L671.6 271.2 L672.4 271 L692.4 263.2 L693.7 262.8 L695.1 262.7 L696.3 262.8 L697.6 263.1 L698.8 263.7 L1030.6 462.6 M732.3 311.9 L734.7 312 L735.6 312 L736.5 311.9 L737.3 311.8 L738.1 311.6 L738.8 311.3 L751.9 306.1 L753.3 305.7 L754.6 305.5 L755.9 305.6 L757.2 305.9 L758.4 306.5 L1023.4 465.9 M801.6 354.1 L804 354.2 L805 354.2 L805.9 354.1 L806.7 354 L807.5 353.7 L808.3 353.5 L814.2 351 L815.6 350.5 L817 350.4 L818.3 350.5 L819.6 350.8 L820.9 351.5 L1016.1 469.3 M874.1 398.2 L876.6 398.3 L877.5 398.2 L878.4 398.2 L879.3 398 L880.1 397.8 L880.9 397.5 L881.1 397.4 L881.9 397.2 L882.7 397.1 L883.5 397.1 L884.3 397.3 L885.1 397.7 L1008.8 472.7 M949.9 444.3 L1001.5 476.2" fill="none" stroke="#1ea81e" stroke-width="1.1" stroke-dasharray="1.3 1.5"/>
<path d="M512.7 404.5 L770.5 581.5" fill="none" stroke="#d8d8d8" stroke-width="1.8" stroke-dasharray="4.6 3"/>
<g fill="none" stroke="#0b8a0b" stroke-width="1"><ellipse cx="605.1" cy="660.7" rx="3.6" ry="2.1" transform="rotate(33 605.1 660.7)"/><ellipse cx="596.3" cy="664.8" rx="3.6" ry="2.1" transform="rotate(33 596.3 664.8)"/><ellipse cx="587.5" cy="668.9" rx="3.6" ry="2.1" transform="rotate(33 587.5 668.9)"/><ellipse cx="578.6" cy="673.1" rx="3.6" ry="2.1" transform="rotate(33 578.6 673.1)"/><ellipse cx="569.7" cy="677.2" rx="3.6" ry="2.1" transform="rotate(33 569.7 677.2)"/><ellipse cx="560.8" cy="681.4" rx="3.6" ry="2.1" transform="rotate(33 560.8 681.4)"/><ellipse cx="698.6" cy="617" rx="3.6" ry="2.1" transform="rotate(33 698.6 617)"/><ellipse cx="690.2" cy="620.9" rx="3.6" ry="2.1" transform="rotate(33 690.2 620.9)"/><ellipse cx="681.7" cy="624.9" rx="3.6" ry="2.1" transform="rotate(33 681.7 624.9)"/><ellipse cx="673.2" cy="628.8" rx="3.6" ry="2.1" transform="rotate(33 673.2 628.8)"/><ellipse cx="664.7" cy="632.8" rx="3.6" ry="2.1" transform="rotate(33 664.7 632.8)"/><ellipse cx="656.1" cy="636.8" rx="3.6" ry="2.1" transform="rotate(33 656.1 636.8)"/><ellipse cx="788.3" cy="575" rx="3.6" ry="2.1" transform="rotate(33 788.3 575)"/><ellipse cx="780.2" cy="578.8" rx="3.6" ry="2.1" transform="rotate(33 780.2 578.8)"/><ellipse cx="772.1" cy="582.6" rx="3.6" ry="2.1" transform="rotate(33 772.1 582.6)"/><ellipse cx="763.9" cy="586.4" rx="3.6" ry="2.1" transform="rotate(33 763.9 586.4)"/><ellipse cx="755.7" cy="590.2" rx="3.6" ry="2.1" transform="rotate(33 755.7 590.2)"/><ellipse cx="747.5" cy="594.1" rx="3.6" ry="2.1" transform="rotate(33 747.5 594.1)"/><ellipse cx="874.5" cy="534.7" rx="3.6" ry="2.1" transform="rotate(33 874.5 534.7)"/><ellipse cx="866.7" cy="538.3" rx="3.6" ry="2.1" transform="rotate(33 866.7 538.3)"/><ellipse cx="858.9" cy="542" rx="3.6" ry="2.1" transform="rotate(33 858.9 542)"/><ellipse cx="851.1" cy="545.7" rx="3.6" ry="2.1" transform="rotate(33 851.1 545.7)"/><ellipse cx="843.2" cy="549.3" rx="3.6" ry="2.1" transform="rotate(33 843.2 549.3)"/><ellipse cx="835.3" cy="553" rx="3.6" ry="2.1" transform="rotate(33 835.3 553)"/><ellipse cx="957.3" cy="496" rx="3.6" ry="2.1" transform="rotate(33 957.3 496)"/><ellipse cx="949.8" cy="499.5" rx="3.6" ry="2.1" transform="rotate(33 949.8 499.5)"/><ellipse cx="942.3" cy="503" rx="3.6" ry="2.1" transform="rotate(33 942.3 503)"/><ellipse cx="934.8" cy="506.5" rx="3.6" ry="2.1" transform="rotate(33 934.8 506.5)"/><ellipse cx="927.2" cy="510" rx="3.6" ry="2.1" transform="rotate(33 927.2 510)"/><ellipse cx="919.6" cy="513.6" rx="3.6" ry="2.1" transform="rotate(33 919.6 513.6)"/><ellipse cx="1037" cy="458.7" rx="3.6" ry="2.1" transform="rotate(33 1037 458.7)"/><ellipse cx="1029.8" cy="462.1" rx="3.6" ry="2.1" transform="rotate(33 1029.8 462.1)"/><ellipse cx="1022.6" cy="465.5" rx="3.6" ry="2.1" transform="rotate(33 1022.6 465.5)"/><ellipse cx="1015.3" cy="468.8" rx="3.6" ry="2.1" transform="rotate(33 1015.3 468.8)"/><ellipse cx="1008" cy="472.3" rx="3.6" ry="2.1" transform="rotate(33 1008 472.3)"/><ellipse cx="1000.7" cy="475.7" rx="3.6" ry="2.1" transform="rotate(33 1000.7 475.7)"/></g>
<path d="M604.3 660.1L610.2 664.5 M595.5 664.2L601.3 668.6 M586.7 668.3L592.5 672.7 M577.8 672.5L583.6 676.9 M568.9 676.6L574.7 681.1 M560 680.8L565.8 685.3 M697.8 616.4L703.7 620.6 M689.4 620.3L695.3 624.5 M680.9 624.3L686.8 628.5 M672.4 628.3L678.3 632.5 M663.9 632.3L669.7 636.5 M655.3 636.3L661.2 640.5 M787.6 574.5L793.5 578.5 M779.4 578.2L785.4 582.3 M771.3 582L777.2 586.1 M763.2 585.9L769.1 589.9 M755 589.7L760.9 593.8 M746.7 593.5L752.6 597.6 M873.7 534.2L879.7 538.1 M865.9 537.8L871.9 541.7 M858.1 541.5L864.1 545.4 M850.3 545.1L856.2 549.1 M842.4 548.8L848.4 552.7 M834.5 552.5L840.4 556.5 M956.5 495.5L962.5 499.2 M949 499L955 502.7 M941.5 502.5L947.5 506.2 M934 506L940 509.8 M926.4 509.5L932.4 513.3 M918.8 513.1L924.8 516.9 M1036.2 458.2L1042.2 461.8 M1029 461.6L1035 465.2 M1021.8 465L1027.8 468.6 M1014.5 468.4L1020.5 472 M1007.2 471.8L1013.2 475.4 M999.9 475.2L1005.9 478.8" stroke="#e6d2d2" stroke-width="1.9" fill="none" stroke-linecap="round"/>
<g fill="none" stroke="#e8120e" stroke-linejoin="round" stroke-linecap="round"><path d="M148.3 292.9 L117.2 303.8 L117.2 303.8 L115.7 304.7 L115.2 305.8 L115.8 306.8 L117.4 307.5 L119.5 307.6 L121.6 307.2 L184.6 285 L184.6 285 L186.6 284.6 L188.8 284.8 L190.4 285.4 L191 286.4 L190.6 287.5 L189.1 288.3 L126.1 310.6 L126.1 310.6 L124.6 311.4 L124.1 312.5 L124.7 313.5 L126.3 314.2 L128.4 314.3 L130.6 313.9 L193.6 291.6 L193.6 291.6 L195.7 291.2 L197.8 291.3 L199.4 292 L200.1 293 L199.6 294.1 L198.2 294.9 L135 317.3 L135 317.3 L133.5 318.2 L133 319.3 L133.7 320.3 L135.3 321 L137.4 321.1 L139.5 320.7 L165.2 311.6" stroke-width="2.15"/><path d="M207.5 336.8 L176.1 348.3 L176.1 348.3 L174.6 349.2 L174.1 350.3 L174.8 351.4 L176.4 352.1 L178.6 352.2 L180.7 351.8 L244.4 328.6 L244.4 328.6 L246.5 328.1 L248.7 328.3 L250.3 329 L251 330 L250.6 331.1 L249.1 332 L185.4 355.3 L185.4 355.3 L183.9 356.2 L183.4 357.4 L184.1 358.4 L185.7 359.2 L187.9 359.3 L190.1 358.9 L253.9 335.4 L253.9 335.4 L256 335 L258.1 335.2 L259.8 335.9 L260.5 336.9 L260.1 338 L258.6 338.9 L194.8 362.4 L194.8 362.4 L193.3 363.3 L192.8 364.5 L193.5 365.6 L195.1 366.3 L197.4 366.4 L199.5 366 L225.4 356.4" stroke-width="2.22"/><path d="M269.6 382.9 L237.8 394.9 L237.8 394.9 L236.3 395.9 L235.8 397 L236.6 398.2 L238.3 398.9 L240.5 399 L242.7 398.6 L307.1 374.2 L307.1 374.2 L309.2 373.7 L311.4 373.9 L313.2 374.6 L313.9 375.7 L313.5 376.8 L312 377.8 L247.6 402.3 L247.6 402.3 L246.1 403.2 L245.6 404.4 L246.4 405.6 L248.1 406.3 L250.3 406.5 L252.5 406 L317 381.4 L317 381.4 L319.1 380.9 L321.4 381.1 L323.1 381.8 L323.9 382.9 L323.5 384.1 L322 385 L257.5 409.7 L257.5 409.7 L255.9 410.7 L255.5 411.9 L256.2 413 L257.9 413.8 L260.2 413.9 L262.4 413.5 L288.6 403.4" stroke-width="2.30"/><path d="M334.8 431.2 L302.6 443.8 L302.6 443.8 L301.1 444.8 L300.7 446.1 L301.4 447.2 L303.2 448 L305.5 448.2 L307.8 447.7 L372.8 422 L372.8 422 L375 421.5 L377.3 421.7 L379.1 422.4 L379.9 423.6 L379.5 424.8 L378 425.8 L312.9 451.6 L312.9 451.6 L311.4 452.6 L310.9 453.8 L311.7 455 L313.5 455.8 L315.8 455.9 L318.1 455.5 L383.2 429.6 L383.2 429.6 L385.4 429.1 L387.7 429.3 L389.5 430 L390.3 431.2 L389.9 432.4 L388.5 433.4 L323.2 459.4 L323.2 459.4 L321.7 460.4 L321.3 461.6 L322.1 462.8 L323.9 463.6 L326.2 463.8 L328.4 463.3 L354.9 452.7" stroke-width="2.38"/><path d="M403.2 481.9 L370.7 495.2 L370.7 495.2 L369.2 496.3 L368.8 497.6 L369.6 498.8 L371.5 499.6 L373.8 499.8 L376.1 499.3 L441.8 472.2 L441.8 472.2 L444 471.7 L446.4 471.9 L448.3 472.7 L449.1 473.9 L448.8 475.2 L447.3 476.2 L381.5 503.3 L381.5 503.3 L380 504.4 L379.6 505.7 L380.4 507 L382.3 507.8 L384.7 508 L386.9 507.4 L452.8 480.2 L452.8 480.2 L455 479.7 L457.3 479.9 L459.2 480.7 L460.1 481.9 L459.8 483.2 L458.3 484.2 L392.4 511.6 L392.4 511.6 L390.8 512.6 L390.5 514 L391.3 515.2 L393.2 516 L395.6 516.2 L397.9 515.7 L424.6 504.5" stroke-width="2.47"/><path d="M475.2 535.2 L442.3 549.3 L442.3 549.3 L440.8 550.4 L440.4 551.7 L441.3 553 L443.3 553.9 L445.7 554.1 L448 553.5 L514.4 525 L514.4 525 L516.7 524.5 L519.1 524.7 L521 525.5 L521.9 526.8 L521.6 528.1 L520.2 529.2 L453.7 557.8 L453.7 557.8 L452.2 559 L451.8 560.3 L452.7 561.6 L454.7 562.5 L457.1 562.7 L459.4 562.2 L525.9 533.4 L525.9 533.4 L528.2 532.9 L530.6 533.1 L532.5 533.9 L533.5 535.2 L533.2 536.5 L531.7 537.6 L465.1 566.5 L465.1 566.5 L463.6 567.6 L463.3 569 L464.2 570.3 L466.1 571.2 L468.6 571.4 L470.9 570.8 L498 559.1" stroke-width="2.57"/><path d="M239.4 260.9 L209.4 271.5 L209.4 271.5 L208 272.3 L207.5 273.3 L208.2 274.3 L209.8 274.9 L211.9 275.1 L213.9 274.7 L274.6 253.3 L274.6 253.3 L276.6 252.9 L278.7 253.1 L280.3 253.7 L281 254.7 L280.6 255.7 L279.2 256.5 L218.5 277.9 L218.5 277.9 L217 278.8 L216.6 279.8 L217.2 280.8 L218.8 281.4 L221 281.6 L223 281.2 L283.8 259.7 L283.8 259.7 L285.8 259.3 L287.9 259.4 L289.5 260.1 L290.2 261 L289.8 262 L288.4 262.9 L227.6 284.5 L227.6 284.5 L226.1 285.3 L225.7 286.4 L226.4 287.3 L228 288 L230.1 288.1 L232.2 287.7 L256.9 278.9" stroke-width="2.13"/><path d="M299.6 303.3 L269.3 314.3 L269.3 314.3 L267.9 315.2 L267.5 316.3 L268.2 317.3 L269.8 318 L272 318.1 L274.1 317.7 L335.4 295.3 L335.4 295.3 L337.4 294.9 L339.5 295.1 L341.2 295.7 L341.9 296.7 L341.6 297.8 L340.2 298.6 L278.8 321.1 L278.8 321.1 L277.4 322 L276.9 323.1 L277.7 324.1 L279.3 324.8 L281.5 324.9 L283.6 324.5 L345 302 L345 302 L347 301.6 L349.2 301.7 L350.8 302.4 L351.6 303.4 L351.2 304.4 L349.8 305.3 L288.4 327.9 L288.4 327.9 L286.9 328.8 L286.5 329.9 L287.2 331 L288.9 331.6 L291.1 331.8 L293.2 331.4 L318.1 322.2" stroke-width="2.20"/><path d="M362.7 347.7 L332.1 359.2 L332.1 359.2 L330.7 360.1 L330.3 361.3 L331 362.4 L332.7 363.1 L334.9 363.2 L337.1 362.8 L399 339.3 L399 339.3 L401.1 338.9 L403.2 339 L405 339.7 L405.8 340.7 L405.4 341.9 L404 342.8 L342 366.3 L342 366.3 L340.6 367.3 L340.2 368.4 L341 369.5 L342.7 370.2 L344.9 370.4 L347 369.9 L409 346.2 L409 346.2 L411.1 345.8 L413.3 346 L415 346.7 L415.8 347.7 L415.5 348.8 L414.1 349.7 L352 373.5 L352 373.5 L350.6 374.4 L350.2 375.6 L351 376.7 L352.7 377.4 L354.9 377.5 L357.1 377.1 L382.3 367.4" stroke-width="2.27"/><path d="M428.8 394.2 L397.9 406.3 L397.9 406.3 L396.5 407.3 L396.1 408.5 L396.9 409.6 L398.7 410.3 L401 410.5 L403.1 410 L465.6 385.4 L465.6 385.4 L467.7 384.9 L470 385.1 L471.8 385.8 L472.6 386.9 L472.3 388.1 L470.9 389 L408.3 413.8 L408.3 413.8 L406.9 414.7 L406.5 415.9 L407.3 417.1 L409.1 417.8 L411.4 418 L413.6 417.5 L476.2 392.6 L476.2 392.6 L478.3 392.2 L480.6 392.4 L482.3 393.1 L483.2 394.2 L482.9 395.4 L481.5 396.3 L418.8 421.3 L418.8 421.3 L417.4 422.3 L417 423.5 L417.8 424.6 L419.6 425.4 L421.9 425.5 L424.1 425.1 L449.6 414.9" stroke-width="2.35"/><path d="M498.2 442.9 L467 455.7 L467 455.7 L465.5 456.7 L465.2 458 L466.1 459.2 L467.9 460 L470.3 460.1 L472.4 459.6 L535.6 433.7 L535.6 433.7 L537.7 433.2 L540 433.4 L541.9 434.1 L542.8 435.3 L542.5 436.5 L541.1 437.5 L477.9 463.6 L477.9 463.6 L476.5 464.6 L476.1 465.9 L477 467 L478.9 467.8 L481.2 468 L483.4 467.5 L546.6 441.3 L546.6 441.3 L548.8 440.9 L551.1 441 L553 441.8 L553.9 442.9 L553.6 444.2 L552.2 445.2 L488.9 471.5 L488.9 471.5 L487.5 472.5 L487.2 473.8 L488.1 475 L489.9 475.7 L492.3 475.9 L494.5 475.4 L520.2 464.7" stroke-width="2.44"/><path d="M571.1 494.2 L539.6 507.7 L539.6 507.7 L538.1 508.7 L537.8 510.1 L538.8 511.3 L540.7 512.1 L543.1 512.3 L545.3 511.8 L609 484.4 L609 484.4 L611.2 483.9 L613.6 484.1 L615.5 484.9 L616.5 486.1 L616.2 487.4 L614.8 488.5 L551.1 515.9 L551.1 515.9 L549.6 517 L549.3 518.3 L550.3 519.6 L552.2 520.4 L554.6 520.6 L556.9 520 L620.7 492.5 L620.7 492.5 L622.8 492 L625.2 492.2 L627.2 493 L628.1 494.2 L627.9 495.5 L626.5 496.5 L562.7 524.2 L562.7 524.2 L561.2 525.3 L560.9 526.6 L561.9 527.9 L563.9 528.7 L566.3 528.9 L568.5 528.4 L594.4 517.1" stroke-width="2.53"/><path d="M327.2 230.1 L298.3 240.2 L298.3 240.2 L296.9 241 L296.5 242 L297.2 243 L298.8 243.6 L300.9 243.7 L302.9 243.4 L361.4 222.8 L361.4 222.8 L363.4 222.4 L365.4 222.5 L367 223.1 L367.7 224 L367.4 225 L366.1 225.8 L307.5 246.5 L307.5 246.5 L306.1 247.3 L305.7 248.3 L306.4 249.3 L308 249.9 L310.1 250 L312.1 249.6 L370.7 228.9 L370.7 228.9 L372.7 228.5 L374.7 228.6 L376.3 229.3 L377.1 230.2 L376.7 231.2 L375.4 232 L316.8 252.8 L316.8 252.8 L315.4 253.6 L315 254.6 L315.7 255.6 L317.3 256.2 L319.4 256.3 L321.4 256 L345.2 247.5" stroke-width="2.11"/><path d="M388.3 271 L359.1 281.6 L359.1 281.6 L357.8 282.5 L357.4 283.5 L358.1 284.5 L359.8 285.1 L361.9 285.3 L363.9 284.9 L423 263.3 L423 263.3 L425 262.9 L427.1 263.1 L428.8 263.7 L429.5 264.6 L429.2 265.7 L427.9 266.5 L368.8 288.2 L368.8 288.2 L367.4 289 L367 290.1 L367.8 291 L369.4 291.7 L371.6 291.8 L373.6 291.4 L432.8 269.7 L432.8 269.7 L434.7 269.3 L436.8 269.5 L438.5 270.1 L439.3 271.1 L439 272.1 L437.6 272.9 L378.4 294.7 L378.4 294.7 L377.1 295.6 L376.7 296.7 L377.5 297.7 L379.1 298.3 L381.3 298.5 L383.3 298.1 L407.3 289.2" stroke-width="2.18"/><path d="M452.3 313.8 L422.8 324.9 L422.8 324.9 L421.4 325.8 L421.1 326.9 L421.9 327.9 L423.6 328.6 L425.8 328.8 L427.8 328.3 L487.5 305.7 L487.5 305.7 L489.5 305.3 L491.6 305.4 L493.3 306.1 L494.2 307.1 L493.9 308.2 L492.5 309.1 L432.9 331.8 L432.9 331.8 L431.5 332.6 L431.2 333.8 L432 334.8 L433.7 335.5 L435.9 335.6 L437.9 335.2 L497.6 312.4 L497.6 312.4 L499.7 312 L501.8 312.1 L503.5 312.8 L504.4 313.8 L504.1 314.9 L502.8 315.8 L443 338.7 L443 338.7 L441.6 339.5 L441.3 340.7 L442.1 341.7 L443.9 342.4 L446.1 342.6 L448.1 342.1 L472.4 332.8" stroke-width="2.25"/><path d="M519.2 358.6 L489.5 370.3 L489.5 370.3 L488.1 371.2 L487.8 372.3 L488.7 373.4 L490.4 374.1 L492.7 374.3 L494.8 373.9 L554.9 350.1 L554.9 350.1 L557 349.7 L559.2 349.8 L560.9 350.5 L561.8 351.6 L561.6 352.7 L560.2 353.6 L500 377.4 L500 377.4 L498.7 378.4 L498.4 379.5 L499.2 380.6 L501 381.3 L503.3 381.5 L505.4 381.1 L565.6 357.1 L565.6 357.1 L567.6 356.7 L569.9 356.8 L571.6 357.6 L572.5 358.6 L572.3 359.8 L571 360.7 L510.7 384.7 L510.7 384.7 L509.3 385.6 L509 386.8 L509.9 387.9 L511.7 388.6 L513.9 388.8 L516 388.3 L540.5 378.5" stroke-width="2.32"/><path d="M589.4 405.5 L559.4 417.8 L559.4 417.8 L558.1 418.8 L557.8 420 L558.7 421.1 L560.5 421.9 L562.8 422.1 L565 421.6 L625.6 396.6 L625.6 396.6 L627.7 396.2 L630 396.3 L631.8 397.1 L632.8 398.2 L632.5 399.4 L631.2 400.3 L570.5 425.4 L570.5 425.4 L569.1 426.3 L568.9 427.6 L569.8 428.7 L571.6 429.5 L574 429.6 L576.1 429.2 L636.8 404 L636.8 404 L638.9 403.6 L641.2 403.7 L643 404.4 L644 405.6 L643.8 406.8 L642.4 407.7 L581.7 433 L581.7 433 L580.3 433.9 L580 435.2 L581 436.3 L582.8 437.1 L585.1 437.2 L587.3 436.8 L612 426.5" stroke-width="2.41"/><path d="M663.1 454.8 L632.9 467.8 L632.9 467.8 L631.5 468.8 L631.3 470.1 L632.2 471.3 L634.2 472 L636.5 472.2 L638.7 471.7 L699.8 445.5 L699.8 445.5 L701.9 445 L704.3 445.2 L706.2 445.9 L707.2 447.1 L707 448.3 L705.7 449.3 L644.5 475.7 L644.5 475.7 L643.1 476.7 L642.9 478 L643.9 479.2 L645.8 480 L648.2 480.2 L650.3 479.7 L711.6 453.2 L711.6 453.2 L713.7 452.7 L716 452.9 L718 453.7 L719 454.8 L718.8 456.1 L717.5 457.1 L656.2 483.7 L656.2 483.7 L654.8 484.7 L654.6 486 L655.6 487.2 L657.6 488 L659.9 488.2 L662.1 487.7 L687 476.8" stroke-width="2.50"/><path d="M411.9 200.3 L384.1 210.1 L384.1 210.1 L382.7 210.9 L382.4 211.9 L383.1 212.8 L384.7 213.4 L386.8 213.5 L388.7 213.1 L445.2 193.3 L445.2 193.3 L447.1 192.9 L449.1 193 L450.7 193.6 L451.4 194.5 L451.1 195.5 L449.9 196.2 L393.4 216.2 L393.4 216.2 L392.1 216.9 L391.7 217.9 L392.5 218.8 L394.1 219.4 L396.1 219.6 L398.1 219.2 L454.6 199.2 L454.6 199.2 L456.5 198.8 L458.5 199 L460.1 199.5 L460.9 200.4 L460.6 201.4 L459.3 202.2 L402.8 222.3 L402.8 222.3 L401.4 223 L401.1 224 L401.9 224.9 L403.5 225.5 L405.5 225.7 L407.5 225.3 L430.4 217.1" stroke-width="2.09"/><path d="M473.8 239.8 L445.7 250.1 L445.7 250.1 L444.4 250.9 L444.1 251.9 L444.9 252.9 L446.5 253.5 L448.6 253.6 L450.6 253.2 L507.5 232.4 L507.5 232.4 L509.5 232.1 L511.5 232.2 L513.2 232.8 L514 233.7 L513.7 234.7 L512.4 235.5 L455.4 256.4 L455.4 256.4 L454.1 257.2 L453.8 258.2 L454.6 259.2 L456.3 259.8 L458.4 260 L460.3 259.6 L517.4 238.6 L517.4 238.6 L519.3 238.2 L521.4 238.4 L523 239 L523.9 239.9 L523.6 240.9 L522.3 241.7 L465.2 262.8 L465.2 262.8 L463.9 263.6 L463.6 264.6 L464.4 265.6 L466.1 266.2 L468.2 266.3 L470.2 266 L493.3 257.4" stroke-width="2.15"/><path d="M538.5 281.1 L510.2 291.9 L510.2 291.9 L508.8 292.7 L508.6 293.8 L509.4 294.8 L511.1 295.4 L513.2 295.6 L515.2 295.2 L572.7 273.4 L572.7 273.4 L574.6 273 L576.8 273.1 L578.5 273.8 L579.3 274.7 L579.1 275.8 L577.8 276.6 L520.3 298.5 L520.3 298.5 L519 299.3 L518.8 300.4 L519.6 301.4 L521.3 302.1 L523.5 302.2 L525.5 301.8 L583 279.8 L583 279.8 L584.9 279.4 L587.1 279.6 L588.8 280.2 L589.7 281.2 L589.4 282.2 L588.2 283.1 L530.6 305.1 L530.6 305.1 L529.3 306 L529 307.1 L529.9 308.1 L531.6 308.7 L533.8 308.9 L535.8 308.5 L559.1 299.5" stroke-width="2.22"/><path d="M606.2 324.3 L577.6 335.6 L577.6 335.6 L576.3 336.5 L576.1 337.6 L576.9 338.6 L578.7 339.3 L580.9 339.5 L582.9 339 L640.8 316.2 L640.8 316.2 L642.8 315.8 L645 315.9 L646.8 316.6 L647.7 317.6 L647.5 318.7 L646.2 319.6 L588.3 342.5 L588.3 342.5 L587 343.4 L586.7 344.5 L587.6 345.6 L589.4 346.3 L591.6 346.4 L593.7 346 L651.6 323 L651.6 323 L653.6 322.5 L655.8 322.7 L657.6 323.4 L658.5 324.4 L658.3 325.5 L657 326.4 L599 349.5 L599 349.5 L597.7 350.4 L597.5 351.5 L598.4 352.6 L600.2 353.3 L602.4 353.4 L604.4 353 L628 343.6" stroke-width="2.30"/><path d="M677.1 369.6 L648.3 381.4 L648.3 381.4 L647 382.3 L646.8 383.5 L647.7 384.6 L649.6 385.3 L651.8 385.5 L653.9 385 L712.2 361 L712.2 361 L714.2 360.6 L716.5 360.7 L718.3 361.4 L719.3 362.5 L719.1 363.7 L717.9 364.6 L659.5 388.7 L659.5 388.7 L658.2 389.6 L658 390.8 L658.9 391.9 L660.8 392.6 L663 392.7 L665.1 392.3 L723.5 368.1 L723.5 368.1 L725.5 367.7 L727.8 367.8 L729.6 368.5 L730.6 369.6 L730.5 370.8 L729.2 371.7 L670.8 396 L670.8 396 L669.4 396.9 L669.3 398.1 L670.2 399.2 L672.1 399.9 L674.4 400.1 L676.4 399.6 L700.2 389.7" stroke-width="2.38"/><path d="M751.5 417 L722.4 429.5 L722.4 429.5 L721.1 430.4 L721 431.7 L722 432.8 L723.9 433.6 L726.2 433.7 L728.3 433.3 L787.1 408 L787.1 408 L789.1 407.6 L791.4 407.7 L793.3 408.5 L794.3 409.6 L794.2 410.8 L793 411.7 L734.2 437.1 L734.2 437.1 L732.9 438 L732.7 439.3 L733.7 440.4 L735.7 441.2 L738 441.4 L740.1 440.9 L798.9 415.5 L798.9 415.5 L801 415 L803.2 415.2 L805.2 415.9 L806.2 417 L806.1 418.3 L804.9 419.2 L746 444.7 L746 444.7 L744.7 445.7 L744.6 447 L745.6 448.1 L747.5 448.9 L749.9 449.1 L752 448.6 L775.9 438.2" stroke-width="2.47"/><path d="M493.7 171.6 L466.8 181.1 L466.8 181.1 L465.6 181.8 L465.3 182.7 L466 183.6 L467.6 184.2 L469.6 184.3 L471.5 184 L526.1 164.8 L526.1 164.8 L527.9 164.4 L529.9 164.6 L531.5 165.1 L532.3 166 L532 166.9 L530.8 167.6 L476.2 186.9 L476.2 186.9 L475 187.7 L474.7 188.6 L475.5 189.5 L477.1 190.1 L479.1 190.2 L481 189.8 L535.6 170.5 L535.6 170.5 L537.4 170.2 L539.4 170.3 L541 170.9 L541.8 171.7 L541.6 172.6 L540.4 173.4 L485.7 192.8 L485.7 192.8 L484.5 193.5 L484.2 194.5 L485 195.4 L486.6 196 L488.6 196.1 L490.5 195.7 L512.7 187.8" stroke-width="2.07"/><path d="M556.3 209.8 L529.2 219.7 L529.2 219.7 L527.9 220.5 L527.7 221.4 L528.5 222.4 L530.1 223 L532.2 223.1 L534.1 222.7 L589.1 202.6 L589.1 202.6 L590.9 202.3 L593 202.4 L594.6 203 L595.4 203.9 L595.2 204.9 L594 205.6 L539 225.8 L539 225.8 L537.8 226.6 L537.5 227.5 L538.3 228.5 L540 229.1 L542.1 229.2 L544 228.8 L599 208.6 L599 208.6 L600.9 208.3 L602.9 208.4 L604.6 209 L605.4 209.9 L605.2 210.9 L604 211.6 L548.9 231.9 L548.9 231.9 L547.7 232.7 L547.4 233.7 L548.3 234.6 L549.9 235.2 L552 235.4 L553.9 235 L576.3 226.7" stroke-width="2.13"/><path d="M621.7 249.7 L594.3 260 L594.3 260 L593.1 260.8 L592.9 261.9 L593.7 262.8 L595.4 263.4 L597.5 263.6 L599.5 263.2 L654.8 242.2 L654.8 242.2 L656.7 241.8 L658.8 241.9 L660.5 242.6 L661.4 243.5 L661.2 244.5 L660 245.3 L604.6 266.4 L604.6 266.4 L603.4 267.2 L603.2 268.2 L604 269.2 L605.7 269.8 L607.9 270 L609.8 269.6 L665.2 248.4 L665.2 248.4 L667.1 248 L669.2 248.2 L671 248.8 L671.8 249.7 L671.7 250.8 L670.5 251.6 L615 272.8 L615 272.8 L613.7 273.6 L613.5 274.7 L614.4 275.6 L616.1 276.3 L618.3 276.4 L620.2 276 L642.7 267.4" stroke-width="2.20"/><path d="M690 291.4 L662.5 302.2 L662.5 302.2 L661.2 303.1 L661 304.1 L661.9 305.1 L663.7 305.8 L665.9 305.9 L667.8 305.5 L723.6 283.5 L723.6 283.5 L725.5 283.1 L727.7 283.3 L729.5 283.9 L730.4 284.9 L730.2 285.9 L729 286.8 L673.2 308.9 L673.2 308.9 L672 309.7 L671.8 310.8 L672.7 311.8 L674.5 312.5 L676.7 312.6 L678.6 312.2 L734.5 290 L734.5 290 L736.4 289.6 L738.6 289.8 L740.3 290.4 L741.3 291.4 L741.1 292.5 L739.9 293.3 L684.1 315.6 L684.1 315.6 L682.8 316.4 L682.7 317.5 L683.6 318.6 L685.4 319.2 L687.6 319.4 L689.5 319 L712.2 309.9" stroke-width="2.27"/><path d="M761.5 335 L733.8 346.4 L733.8 346.4 L732.5 347.3 L732.4 348.4 L733.4 349.4 L735.2 350.1 L737.4 350.3 L739.4 349.8 L795.6 326.7 L795.6 326.7 L797.5 326.3 L799.7 326.5 L801.6 327.2 L802.6 328.2 L802.4 329.3 L801.2 330.2 L745.1 353.3 L745.1 353.3 L743.8 354.2 L743.7 355.4 L744.7 356.4 L746.5 357.1 L748.7 357.3 L750.7 356.9 L806.9 333.6 L806.9 333.6 L808.9 333.2 L811.1 333.3 L813 334 L814 335 L813.9 336.1 L812.7 337 L756.4 360.4 L756.4 360.4 L755.2 361.3 L755 362.4 L756 363.5 L757.9 364.2 L760.1 364.4 L762.1 363.9 L785 354.4" stroke-width="2.35"/><path d="M836.4 380.7 L808.5 392.6 L808.5 392.6 L807.3 393.6 L807.2 394.8 L808.2 395.9 L810.1 396.6 L812.4 396.7 L814.4 396.3 L870.9 372 L870.9 372 L872.9 371.6 L875.2 371.8 L877.1 372.5 L878.1 373.5 L878.1 374.7 L876.9 375.6 L820.4 400 L820.4 400 L819.1 400.9 L819 402.1 L820.1 403.2 L822 403.9 L824.3 404.1 L826.3 403.6 L882.9 379.2 L882.9 379.2 L884.8 378.8 L887.1 378.9 L889 379.6 L890.1 380.7 L890 381.9 L888.9 382.8 L832.3 407.3 L832.3 407.3 L831 408.3 L830.9 409.5 L832 410.6 L833.9 411.3 L836.2 411.5 L838.3 411 L861.2 401.1" stroke-width="2.44"/><path d="M572.8 143.9 L546.7 153 L546.7 153 L545.6 153.7 L545.3 154.6 L546.1 155.5 L547.7 156 L549.7 156.2 L551.5 155.8 L604.2 137.3 L604.2 137.3 L606 136.9 L607.9 137.1 L609.5 137.6 L610.4 138.4 L610.1 139.3 L609 140 L556.3 158.6 L556.3 158.6 L555.1 159.4 L554.8 160.3 L555.6 161.1 L557.2 161.7 L559.2 161.8 L561.1 161.5 L613.8 142.8 L613.8 142.8 L615.6 142.5 L617.6 142.6 L619.2 143.1 L620 144 L619.8 144.9 L618.6 145.6 L565.9 164.3 L565.9 164.3 L564.7 165.1 L564.4 166 L565.2 166.8 L566.8 167.4 L568.8 167.5 L570.7 167.2 L592.1 159.6" stroke-width="2.05"/><path d="M635.9 180.8 L609.7 190.3 L609.7 190.3 L608.5 191.1 L608.3 192 L609.2 192.9 L610.8 193.5 L612.8 193.6 L614.7 193.3 L667.8 173.9 L667.8 173.9 L669.6 173.5 L671.6 173.7 L673.2 174.2 L674.1 175.1 L673.9 176 L672.8 176.8 L619.7 196.2 L619.7 196.2 L618.5 197 L618.3 197.9 L619.1 198.8 L620.8 199.4 L622.8 199.5 L624.7 199.2 L677.8 179.7 L677.8 179.7 L679.6 179.3 L681.6 179.4 L683.3 180 L684.2 180.9 L684 181.8 L682.8 182.6 L629.7 202.2 L629.7 202.2 L628.5 202.9 L628.3 203.9 L629.1 204.8 L630.8 205.4 L632.9 205.5 L634.7 205.1 L656.3 197.2" stroke-width="2.11"/><path d="M701.9 219.3 L675.5 229.3 L675.5 229.3 L674.3 230.1 L674.1 231.1 L675 232 L676.7 232.6 L678.8 232.8 L680.7 232.4 L734.1 212.1 L734.1 212.1 L736 211.7 L738 211.9 L739.7 212.5 L740.6 213.4 L740.5 214.3 L739.3 215.1 L685.9 235.5 L685.9 235.5 L684.7 236.3 L684.5 237.2 L685.4 238.2 L687.1 238.8 L689.2 238.9 L691.1 238.6 L744.6 218.1 L744.6 218.1 L746.4 217.8 L748.5 217.9 L750.2 218.5 L751.1 219.4 L751 220.4 L749.8 221.2 L696.3 241.7 L696.3 241.7 L695.1 242.5 L695 243.5 L695.9 244.4 L697.6 245 L699.7 245.2 L701.6 244.8 L723.3 236.4" stroke-width="2.17"/><path d="M770.8 259.6 L744.2 270 L744.2 270 L743 270.9 L742.9 271.9 L743.8 272.9 L745.6 273.5 L747.7 273.6 L749.6 273.2 L803.4 252 L803.4 252 L805.3 251.6 L807.4 251.8 L809.1 252.4 L810.1 253.3 L810 254.4 L808.9 255.2 L755.1 276.5 L755.1 276.5 L753.9 277.3 L753.7 278.3 L754.7 279.3 L756.5 280 L758.6 280.1 L760.5 279.7 L814.3 258.3 L814.3 258.3 L816.2 257.9 L818.3 258.1 L820.1 258.7 L821.1 259.7 L821 260.7 L819.8 261.5 L766 282.9 L766 282.9 L764.8 283.8 L764.7 284.8 L765.6 285.8 L767.4 286.5 L769.6 286.6 L771.5 286.2 L793.3 277.5" stroke-width="2.25"/><path d="M842.8 301.7 L816.1 312.6 L816.1 312.6 L814.9 313.5 L814.8 314.6 L815.8 315.6 L817.6 316.2 L819.8 316.4 L821.7 316 L875.8 293.7 L875.8 293.7 L877.7 293.3 L879.9 293.5 L881.7 294.1 L882.7 295.1 L882.7 296.2 L881.5 297 L827.4 319.4 L827.4 319.4 L826.3 320.2 L826.2 321.3 L827.2 322.3 L829 323 L831.2 323.2 L833.1 322.7 L887.3 300.3 L887.3 300.3 L889.2 299.9 L891.3 300.1 L893.2 300.7 L894.2 301.7 L894.2 302.8 L893 303.6 L838.9 326.1 L838.9 326.1 L837.7 327 L837.6 328.1 L838.6 329.1 L840.5 329.8 L842.7 330 L844.6 329.5 L866.6 320.4" stroke-width="2.32"/><path d="M918.2 345.7 L891.3 357.2 L891.3 357.2 L890.2 358.1 L890.1 359.3 L891.2 360.3 L893.1 361 L895.3 361.2 L897.3 360.7 L951.6 337.4 L951.6 337.4 L953.6 337 L955.8 337.1 L957.7 337.8 L958.8 338.9 L958.7 340 L957.6 340.9 L903.2 364.3 L903.2 364.3 L902.1 365.2 L902 366.3 L903.1 367.4 L905 368.1 L907.2 368.3 L909.2 367.8 L963.6 344.3 L963.6 344.3 L965.6 343.9 L967.8 344 L969.7 344.7 L970.8 345.8 L970.8 346.9 L969.7 347.8 L915.2 371.4 L915.2 371.4 L914 372.3 L914 373.5 L915.1 374.5 L917 375.2 L919.3 375.4 L921.2 375 L943.3 365.3" stroke-width="2.41"/></g>
<g fill="none" stroke="#7a3208" stroke-opacity=".6"><path d="M148.3 292.9 L117.2 303.8 L117.2 303.8 L115.7 304.7 L115.2 305.8 L115.8 306.8 L117.4 307.5 L119.5 307.6 L121.6 307.2 L184.6 285 L184.6 285 L186.6 284.6 L188.8 284.8 L190.4 285.4 L191 286.4 L190.6 287.5 L189.1 288.3 L126.1 310.6 L126.1 310.6 L124.6 311.4 L124.1 312.5 L124.7 313.5 L126.3 314.2 L128.4 314.3 L130.6 313.9 L193.6 291.6 L193.6 291.6 L195.7 291.2 L197.8 291.3 L199.4 292 L200.1 293 L199.6 294.1 L198.2 294.9 L135 317.3 L135 317.3 L133.5 318.2 L133 319.3 L133.7 320.3 L135.3 321 L137.4 321.1 L139.5 320.7 L165.2 311.6" stroke-width="0.65"/><path d="M207.5 336.8 L176.1 348.3 L176.1 348.3 L174.6 349.2 L174.1 350.3 L174.8 351.4 L176.4 352.1 L178.6 352.2 L180.7 351.8 L244.4 328.6 L244.4 328.6 L246.5 328.1 L248.7 328.3 L250.3 329 L251 330 L250.6 331.1 L249.1 332 L185.4 355.3 L185.4 355.3 L183.9 356.2 L183.4 357.4 L184.1 358.4 L185.7 359.2 L187.9 359.3 L190.1 358.9 L253.9 335.4 L253.9 335.4 L256 335 L258.1 335.2 L259.8 335.9 L260.5 336.9 L260.1 338 L258.6 338.9 L194.8 362.4 L194.8 362.4 L193.3 363.3 L192.8 364.5 L193.5 365.6 L195.1 366.3 L197.4 366.4 L199.5 366 L225.4 356.4" stroke-width="0.67"/><path d="M269.6 382.9 L237.8 394.9 L237.8 394.9 L236.3 395.9 L235.8 397 L236.6 398.2 L238.3 398.9 L240.5 399 L242.7 398.6 L307.1 374.2 L307.1 374.2 L309.2 373.7 L311.4 373.9 L313.2 374.6 L313.9 375.7 L313.5 376.8 L312 377.8 L247.6 402.3 L247.6 402.3 L246.1 403.2 L245.6 404.4 L246.4 405.6 L248.1 406.3 L250.3 406.5 L252.5 406 L317 381.4 L317 381.4 L319.1 380.9 L321.4 381.1 L323.1 381.8 L323.9 382.9 L323.5 384.1 L322 385 L257.5 409.7 L257.5 409.7 L255.9 410.7 L255.5 411.9 L256.2 413 L257.9 413.8 L260.2 413.9 L262.4 413.5 L288.6 403.4" stroke-width="0.69"/><path d="M334.8 431.2 L302.6 443.8 L302.6 443.8 L301.1 444.8 L300.7 446.1 L301.4 447.2 L303.2 448 L305.5 448.2 L307.8 447.7 L372.8 422 L372.8 422 L375 421.5 L377.3 421.7 L379.1 422.4 L379.9 423.6 L379.5 424.8 L378 425.8 L312.9 451.6 L312.9 451.6 L311.4 452.6 L310.9 453.8 L311.7 455 L313.5 455.8 L315.8 455.9 L318.1 455.5 L383.2 429.6 L383.2 429.6 L385.4 429.1 L387.7 429.3 L389.5 430 L390.3 431.2 L389.9 432.4 L388.5 433.4 L323.2 459.4 L323.2 459.4 L321.7 460.4 L321.3 461.6 L322.1 462.8 L323.9 463.6 L326.2 463.8 L328.4 463.3 L354.9 452.7" stroke-width="0.71"/><path d="M403.2 481.9 L370.7 495.2 L370.7 495.2 L369.2 496.3 L368.8 497.6 L369.6 498.8 L371.5 499.6 L373.8 499.8 L376.1 499.3 L441.8 472.2 L441.8 472.2 L444 471.7 L446.4 471.9 L448.3 472.7 L449.1 473.9 L448.8 475.2 L447.3 476.2 L381.5 503.3 L381.5 503.3 L380 504.4 L379.6 505.7 L380.4 507 L382.3 507.8 L384.7 508 L386.9 507.4 L452.8 480.2 L452.8 480.2 L455 479.7 L457.3 479.9 L459.2 480.7 L460.1 481.9 L459.8 483.2 L458.3 484.2 L392.4 511.6 L392.4 511.6 L390.8 512.6 L390.5 514 L391.3 515.2 L393.2 516 L395.6 516.2 L397.9 515.7 L424.6 504.5" stroke-width="0.74"/><path d="M475.2 535.2 L442.3 549.3 L442.3 549.3 L440.8 550.4 L440.4 551.7 L441.3 553 L443.3 553.9 L445.7 554.1 L448 553.5 L514.4 525 L514.4 525 L516.7 524.5 L519.1 524.7 L521 525.5 L521.9 526.8 L521.6 528.1 L520.2 529.2 L453.7 557.8 L453.7 557.8 L452.2 559 L451.8 560.3 L452.7 561.6 L454.7 562.5 L457.1 562.7 L459.4 562.2 L525.9 533.4 L525.9 533.4 L528.2 532.9 L530.6 533.1 L532.5 533.9 L533.5 535.2 L533.2 536.5 L531.7 537.6 L465.1 566.5 L465.1 566.5 L463.6 567.6 L463.3 569 L464.2 570.3 L466.1 571.2 L468.6 571.4 L470.9 570.8 L498 559.1" stroke-width="0.77"/><path d="M239.4 260.9 L209.4 271.5 L209.4 271.5 L208 272.3 L207.5 273.3 L208.2 274.3 L209.8 274.9 L211.9 275.1 L213.9 274.7 L274.6 253.3 L274.6 253.3 L276.6 252.9 L278.7 253.1 L280.3 253.7 L281 254.7 L280.6 255.7 L279.2 256.5 L218.5 277.9 L218.5 277.9 L217 278.8 L216.6 279.8 L217.2 280.8 L218.8 281.4 L221 281.6 L223 281.2 L283.8 259.7 L283.8 259.7 L285.8 259.3 L287.9 259.4 L289.5 260.1 L290.2 261 L289.8 262 L288.4 262.9 L227.6 284.5 L227.6 284.5 L226.1 285.3 L225.7 286.4 L226.4 287.3 L228 288 L230.1 288.1 L232.2 287.7 L256.9 278.9" stroke-width="0.64"/><path d="M299.6 303.3 L269.3 314.3 L269.3 314.3 L267.9 315.2 L267.5 316.3 L268.2 317.3 L269.8 318 L272 318.1 L274.1 317.7 L335.4 295.3 L335.4 295.3 L337.4 294.9 L339.5 295.1 L341.2 295.7 L341.9 296.7 L341.6 297.8 L340.2 298.6 L278.8 321.1 L278.8 321.1 L277.4 322 L276.9 323.1 L277.7 324.1 L279.3 324.8 L281.5 324.9 L283.6 324.5 L345 302 L345 302 L347 301.6 L349.2 301.7 L350.8 302.4 L351.6 303.4 L351.2 304.4 L349.8 305.3 L288.4 327.9 L288.4 327.9 L286.9 328.8 L286.5 329.9 L287.2 331 L288.9 331.6 L291.1 331.8 L293.2 331.4 L318.1 322.2" stroke-width="0.66"/><path d="M362.7 347.7 L332.1 359.2 L332.1 359.2 L330.7 360.1 L330.3 361.3 L331 362.4 L332.7 363.1 L334.9 363.2 L337.1 362.8 L399 339.3 L399 339.3 L401.1 338.9 L403.2 339 L405 339.7 L405.8 340.7 L405.4 341.9 L404 342.8 L342 366.3 L342 366.3 L340.6 367.3 L340.2 368.4 L341 369.5 L342.7 370.2 L344.9 370.4 L347 369.9 L409 346.2 L409 346.2 L411.1 345.8 L413.3 346 L415 346.7 L415.8 347.7 L415.5 348.8 L414.1 349.7 L352 373.5 L352 373.5 L350.6 374.4 L350.2 375.6 L351 376.7 L352.7 377.4 L354.9 377.5 L357.1 377.1 L382.3 367.4" stroke-width="0.68"/><path d="M428.8 394.2 L397.9 406.3 L397.9 406.3 L396.5 407.3 L396.1 408.5 L396.9 409.6 L398.7 410.3 L401 410.5 L403.1 410 L465.6 385.4 L465.6 385.4 L467.7 384.9 L470 385.1 L471.8 385.8 L472.6 386.9 L472.3 388.1 L470.9 389 L408.3 413.8 L408.3 413.8 L406.9 414.7 L406.5 415.9 L407.3 417.1 L409.1 417.8 L411.4 418 L413.6 417.5 L476.2 392.6 L476.2 392.6 L478.3 392.2 L480.6 392.4 L482.3 393.1 L483.2 394.2 L482.9 395.4 L481.5 396.3 L418.8 421.3 L418.8 421.3 L417.4 422.3 L417 423.5 L417.8 424.6 L419.6 425.4 L421.9 425.5 L424.1 425.1 L449.6 414.9" stroke-width="0.71"/><path d="M498.2 442.9 L467 455.7 L467 455.7 L465.5 456.7 L465.2 458 L466.1 459.2 L467.9 460 L470.3 460.1 L472.4 459.6 L535.6 433.7 L535.6 433.7 L537.7 433.2 L540 433.4 L541.9 434.1 L542.8 435.3 L542.5 436.5 L541.1 437.5 L477.9 463.6 L477.9 463.6 L476.5 464.6 L476.1 465.9 L477 467 L478.9 467.8 L481.2 468 L483.4 467.5 L546.6 441.3 L546.6 441.3 L548.8 440.9 L551.1 441 L553 441.8 L553.9 442.9 L553.6 444.2 L552.2 445.2 L488.9 471.5 L488.9 471.5 L487.5 472.5 L487.2 473.8 L488.1 475 L489.9 475.7 L492.3 475.9 L494.5 475.4 L520.2 464.7" stroke-width="0.73"/><path d="M571.1 494.2 L539.6 507.7 L539.6 507.7 L538.1 508.7 L537.8 510.1 L538.8 511.3 L540.7 512.1 L543.1 512.3 L545.3 511.8 L609 484.4 L609 484.4 L611.2 483.9 L613.6 484.1 L615.5 484.9 L616.5 486.1 L616.2 487.4 L614.8 488.5 L551.1 515.9 L551.1 515.9 L549.6 517 L549.3 518.3 L550.3 519.6 L552.2 520.4 L554.6 520.6 L556.9 520 L620.7 492.5 L620.7 492.5 L622.8 492 L625.2 492.2 L627.2 493 L628.1 494.2 L627.9 495.5 L626.5 496.5 L562.7 524.2 L562.7 524.2 L561.2 525.3 L560.9 526.6 L561.9 527.9 L563.9 528.7 L566.3 528.9 L568.5 528.4 L594.4 517.1" stroke-width="0.76"/><path d="M327.2 230.1 L298.3 240.2 L298.3 240.2 L296.9 241 L296.5 242 L297.2 243 L298.8 243.6 L300.9 243.7 L302.9 243.4 L361.4 222.8 L361.4 222.8 L363.4 222.4 L365.4 222.5 L367 223.1 L367.7 224 L367.4 225 L366.1 225.8 L307.5 246.5 L307.5 246.5 L306.1 247.3 L305.7 248.3 L306.4 249.3 L308 249.9 L310.1 250 L312.1 249.6 L370.7 228.9 L370.7 228.9 L372.7 228.5 L374.7 228.6 L376.3 229.3 L377.1 230.2 L376.7 231.2 L375.4 232 L316.8 252.8 L316.8 252.8 L315.4 253.6 L315 254.6 L315.7 255.6 L317.3 256.2 L319.4 256.3 L321.4 256 L345.2 247.5" stroke-width="0.63"/><path d="M388.3 271 L359.1 281.6 L359.1 281.6 L357.8 282.5 L357.4 283.5 L358.1 284.5 L359.8 285.1 L361.9 285.3 L363.9 284.9 L423 263.3 L423 263.3 L425 262.9 L427.1 263.1 L428.8 263.7 L429.5 264.6 L429.2 265.7 L427.9 266.5 L368.8 288.2 L368.8 288.2 L367.4 289 L367 290.1 L367.8 291 L369.4 291.7 L371.6 291.8 L373.6 291.4 L432.8 269.7 L432.8 269.7 L434.7 269.3 L436.8 269.5 L438.5 270.1 L439.3 271.1 L439 272.1 L437.6 272.9 L378.4 294.7 L378.4 294.7 L377.1 295.6 L376.7 296.7 L377.5 297.7 L379.1 298.3 L381.3 298.5 L383.3 298.1 L407.3 289.2" stroke-width="0.65"/><path d="M452.3 313.8 L422.8 324.9 L422.8 324.9 L421.4 325.8 L421.1 326.9 L421.9 327.9 L423.6 328.6 L425.8 328.8 L427.8 328.3 L487.5 305.7 L487.5 305.7 L489.5 305.3 L491.6 305.4 L493.3 306.1 L494.2 307.1 L493.9 308.2 L492.5 309.1 L432.9 331.8 L432.9 331.8 L431.5 332.6 L431.2 333.8 L432 334.8 L433.7 335.5 L435.9 335.6 L437.9 335.2 L497.6 312.4 L497.6 312.4 L499.7 312 L501.8 312.1 L503.5 312.8 L504.4 313.8 L504.1 314.9 L502.8 315.8 L443 338.7 L443 338.7 L441.6 339.5 L441.3 340.7 L442.1 341.7 L443.9 342.4 L446.1 342.6 L448.1 342.1 L472.4 332.8" stroke-width="0.67"/><path d="M519.2 358.6 L489.5 370.3 L489.5 370.3 L488.1 371.2 L487.8 372.3 L488.7 373.4 L490.4 374.1 L492.7 374.3 L494.8 373.9 L554.9 350.1 L554.9 350.1 L557 349.7 L559.2 349.8 L560.9 350.5 L561.8 351.6 L561.6 352.7 L560.2 353.6 L500 377.4 L500 377.4 L498.7 378.4 L498.4 379.5 L499.2 380.6 L501 381.3 L503.3 381.5 L505.4 381.1 L565.6 357.1 L565.6 357.1 L567.6 356.7 L569.9 356.8 L571.6 357.6 L572.5 358.6 L572.3 359.8 L571 360.7 L510.7 384.7 L510.7 384.7 L509.3 385.6 L509 386.8 L509.9 387.9 L511.7 388.6 L513.9 388.8 L516 388.3 L540.5 378.5" stroke-width="0.70"/><path d="M589.4 405.5 L559.4 417.8 L559.4 417.8 L558.1 418.8 L557.8 420 L558.7 421.1 L560.5 421.9 L562.8 422.1 L565 421.6 L625.6 396.6 L625.6 396.6 L627.7 396.2 L630 396.3 L631.8 397.1 L632.8 398.2 L632.5 399.4 L631.2 400.3 L570.5 425.4 L570.5 425.4 L569.1 426.3 L568.9 427.6 L569.8 428.7 L571.6 429.5 L574 429.6 L576.1 429.2 L636.8 404 L636.8 404 L638.9 403.6 L641.2 403.7 L643 404.4 L644 405.6 L643.8 406.8 L642.4 407.7 L581.7 433 L581.7 433 L580.3 433.9 L580 435.2 L581 436.3 L582.8 437.1 L585.1 437.2 L587.3 436.8 L612 426.5" stroke-width="0.72"/><path d="M663.1 454.8 L632.9 467.8 L632.9 467.8 L631.5 468.8 L631.3 470.1 L632.2 471.3 L634.2 472 L636.5 472.2 L638.7 471.7 L699.8 445.5 L699.8 445.5 L701.9 445 L704.3 445.2 L706.2 445.9 L707.2 447.1 L707 448.3 L705.7 449.3 L644.5 475.7 L644.5 475.7 L643.1 476.7 L642.9 478 L643.9 479.2 L645.8 480 L648.2 480.2 L650.3 479.7 L711.6 453.2 L711.6 453.2 L713.7 452.7 L716 452.9 L718 453.7 L719 454.8 L718.8 456.1 L717.5 457.1 L656.2 483.7 L656.2 483.7 L654.8 484.7 L654.6 486 L655.6 487.2 L657.6 488 L659.9 488.2 L662.1 487.7 L687 476.8" stroke-width="0.75"/><path d="M411.9 200.3 L384.1 210.1 L384.1 210.1 L382.7 210.9 L382.4 211.9 L383.1 212.8 L384.7 213.4 L386.8 213.5 L388.7 213.1 L445.2 193.3 L445.2 193.3 L447.1 192.9 L449.1 193 L450.7 193.6 L451.4 194.5 L451.1 195.5 L449.9 196.2 L393.4 216.2 L393.4 216.2 L392.1 216.9 L391.7 217.9 L392.5 218.8 L394.1 219.4 L396.1 219.6 L398.1 219.2 L454.6 199.2 L454.6 199.2 L456.5 198.8 L458.5 199 L460.1 199.5 L460.9 200.4 L460.6 201.4 L459.3 202.2 L402.8 222.3 L402.8 222.3 L401.4 223 L401.1 224 L401.9 224.9 L403.5 225.5 L405.5 225.7 L407.5 225.3 L430.4 217.1" stroke-width="0.63"/><path d="M473.8 239.8 L445.7 250.1 L445.7 250.1 L444.4 250.9 L444.1 251.9 L444.9 252.9 L446.5 253.5 L448.6 253.6 L450.6 253.2 L507.5 232.4 L507.5 232.4 L509.5 232.1 L511.5 232.2 L513.2 232.8 L514 233.7 L513.7 234.7 L512.4 235.5 L455.4 256.4 L455.4 256.4 L454.1 257.2 L453.8 258.2 L454.6 259.2 L456.3 259.8 L458.4 260 L460.3 259.6 L517.4 238.6 L517.4 238.6 L519.3 238.2 L521.4 238.4 L523 239 L523.9 239.9 L523.6 240.9 L522.3 241.7 L465.2 262.8 L465.2 262.8 L463.9 263.6 L463.6 264.6 L464.4 265.6 L466.1 266.2 L468.2 266.3 L470.2 266 L493.3 257.4" stroke-width="0.65"/><path d="M538.5 281.1 L510.2 291.9 L510.2 291.9 L508.8 292.7 L508.6 293.8 L509.4 294.8 L511.1 295.4 L513.2 295.6 L515.2 295.2 L572.7 273.4 L572.7 273.4 L574.6 273 L576.8 273.1 L578.5 273.8 L579.3 274.7 L579.1 275.8 L577.8 276.6 L520.3 298.5 L520.3 298.5 L519 299.3 L518.8 300.4 L519.6 301.4 L521.3 302.1 L523.5 302.2 L525.5 301.8 L583 279.8 L583 279.8 L584.9 279.4 L587.1 279.6 L588.8 280.2 L589.7 281.2 L589.4 282.2 L588.2 283.1 L530.6 305.1 L530.6 305.1 L529.3 306 L529 307.1 L529.9 308.1 L531.6 308.7 L533.8 308.9 L535.8 308.5 L559.1 299.5" stroke-width="0.67"/><path d="M606.2 324.3 L577.6 335.6 L577.6 335.6 L576.3 336.5 L576.1 337.6 L576.9 338.6 L578.7 339.3 L580.9 339.5 L582.9 339 L640.8 316.2 L640.8 316.2 L642.8 315.8 L645 315.9 L646.8 316.6 L647.7 317.6 L647.5 318.7 L646.2 319.6 L588.3 342.5 L588.3 342.5 L587 343.4 L586.7 344.5 L587.6 345.6 L589.4 346.3 L591.6 346.4 L593.7 346 L651.6 323 L651.6 323 L653.6 322.5 L655.8 322.7 L657.6 323.4 L658.5 324.4 L658.3 325.5 L657 326.4 L599 349.5 L599 349.5 L597.7 350.4 L597.5 351.5 L598.4 352.6 L600.2 353.3 L602.4 353.4 L604.4 353 L628 343.6" stroke-width="0.69"/><path d="M677.1 369.6 L648.3 381.4 L648.3 381.4 L647 382.3 L646.8 383.5 L647.7 384.6 L649.6 385.3 L651.8 385.5 L653.9 385 L712.2 361 L712.2 361 L714.2 360.6 L716.5 360.7 L718.3 361.4 L719.3 362.5 L719.1 363.7 L717.9 364.6 L659.5 388.7 L659.5 388.7 L658.2 389.6 L658 390.8 L658.9 391.9 L660.8 392.6 L663 392.7 L665.1 392.3 L723.5 368.1 L723.5 368.1 L725.5 367.7 L727.8 367.8 L729.6 368.5 L730.6 369.6 L730.5 370.8 L729.2 371.7 L670.8 396 L670.8 396 L669.4 396.9 L669.3 398.1 L670.2 399.2 L672.1 399.9 L674.4 400.1 L676.4 399.6 L700.2 389.7" stroke-width="0.71"/><path d="M751.5 417 L722.4 429.5 L722.4 429.5 L721.1 430.4 L721 431.7 L722 432.8 L723.9 433.6 L726.2 433.7 L728.3 433.3 L787.1 408 L787.1 408 L789.1 407.6 L791.4 407.7 L793.3 408.5 L794.3 409.6 L794.2 410.8 L793 411.7 L734.2 437.1 L734.2 437.1 L732.9 438 L732.7 439.3 L733.7 440.4 L735.7 441.2 L738 441.4 L740.1 440.9 L798.9 415.5 L798.9 415.5 L801 415 L803.2 415.2 L805.2 415.9 L806.2 417 L806.1 418.3 L804.9 419.2 L746 444.7 L746 444.7 L744.7 445.7 L744.6 447 L745.6 448.1 L747.5 448.9 L749.9 449.1 L752 448.6 L775.9 438.2" stroke-width="0.74"/><path d="M493.7 171.6 L466.8 181.1 L466.8 181.1 L465.6 181.8 L465.3 182.7 L466 183.6 L467.6 184.2 L469.6 184.3 L471.5 184 L526.1 164.8 L526.1 164.8 L527.9 164.4 L529.9 164.6 L531.5 165.1 L532.3 166 L532 166.9 L530.8 167.6 L476.2 186.9 L476.2 186.9 L475 187.7 L474.7 188.6 L475.5 189.5 L477.1 190.1 L479.1 190.2 L481 189.8 L535.6 170.5 L535.6 170.5 L537.4 170.2 L539.4 170.3 L541 170.9 L541.8 171.7 L541.6 172.6 L540.4 173.4 L485.7 192.8 L485.7 192.8 L484.5 193.5 L484.2 194.5 L485 195.4 L486.6 196 L488.6 196.1 L490.5 195.7 L512.7 187.8" stroke-width="0.62"/><path d="M556.3 209.8 L529.2 219.7 L529.2 219.7 L527.9 220.5 L527.7 221.4 L528.5 222.4 L530.1 223 L532.2 223.1 L534.1 222.7 L589.1 202.6 L589.1 202.6 L590.9 202.3 L593 202.4 L594.6 203 L595.4 203.9 L595.2 204.9 L594 205.6 L539 225.8 L539 225.8 L537.8 226.6 L537.5 227.5 L538.3 228.5 L540 229.1 L542.1 229.2 L544 228.8 L599 208.6 L599 208.6 L600.9 208.3 L602.9 208.4 L604.6 209 L605.4 209.9 L605.2 210.9 L604 211.6 L548.9 231.9 L548.9 231.9 L547.7 232.7 L547.4 233.7 L548.3 234.6 L549.9 235.2 L552 235.4 L553.9 235 L576.3 226.7" stroke-width="0.64"/><path d="M621.7 249.7 L594.3 260 L594.3 260 L593.1 260.8 L592.9 261.9 L593.7 262.8 L595.4 263.4 L597.5 263.6 L599.5 263.2 L654.8 242.2 L654.8 242.2 L656.7 241.8 L658.8 241.9 L660.5 242.6 L661.4 243.5 L661.2 244.5 L660 245.3 L604.6 266.4 L604.6 266.4 L603.4 267.2 L603.2 268.2 L604 269.2 L605.7 269.8 L607.9 270 L609.8 269.6 L665.2 248.4 L665.2 248.4 L667.1 248 L669.2 248.2 L671 248.8 L671.8 249.7 L671.7 250.8 L670.5 251.6 L615 272.8 L615 272.8 L613.7 273.6 L613.5 274.7 L614.4 275.6 L616.1 276.3 L618.3 276.4 L620.2 276 L642.7 267.4" stroke-width="0.66"/><path d="M690 291.4 L662.5 302.2 L662.5 302.2 L661.2 303.1 L661 304.1 L661.9 305.1 L663.7 305.8 L665.9 305.9 L667.8 305.5 L723.6 283.5 L723.6 283.5 L725.5 283.1 L727.7 283.3 L729.5 283.9 L730.4 284.9 L730.2 285.9 L729 286.8 L673.2 308.9 L673.2 308.9 L672 309.7 L671.8 310.8 L672.7 311.8 L674.5 312.5 L676.7 312.6 L678.6 312.2 L734.5 290 L734.5 290 L736.4 289.6 L738.6 289.8 L740.3 290.4 L741.3 291.4 L741.1 292.5 L739.9 293.3 L684.1 315.6 L684.1 315.6 L682.8 316.4 L682.7 317.5 L683.6 318.6 L685.4 319.2 L687.6 319.4 L689.5 319 L712.2 309.9" stroke-width="0.68"/><path d="M761.5 335 L733.8 346.4 L733.8 346.4 L732.5 347.3 L732.4 348.4 L733.4 349.4 L735.2 350.1 L737.4 350.3 L739.4 349.8 L795.6 326.7 L795.6 326.7 L797.5 326.3 L799.7 326.5 L801.6 327.2 L802.6 328.2 L802.4 329.3 L801.2 330.2 L745.1 353.3 L745.1 353.3 L743.8 354.2 L743.7 355.4 L744.7 356.4 L746.5 357.1 L748.7 357.3 L750.7 356.9 L806.9 333.6 L806.9 333.6 L808.9 333.2 L811.1 333.3 L813 334 L814 335 L813.9 336.1 L812.7 337 L756.4 360.4 L756.4 360.4 L755.2 361.3 L755 362.4 L756 363.5 L757.9 364.2 L760.1 364.4 L762.1 363.9 L785 354.4" stroke-width="0.71"/><path d="M836.4 380.7 L808.5 392.6 L808.5 392.6 L807.3 393.6 L807.2 394.8 L808.2 395.9 L810.1 396.6 L812.4 396.7 L814.4 396.3 L870.9 372 L870.9 372 L872.9 371.6 L875.2 371.8 L877.1 372.5 L878.1 373.5 L878.1 374.7 L876.9 375.6 L820.4 400 L820.4 400 L819.1 400.9 L819 402.1 L820.1 403.2 L822 403.9 L824.3 404.1 L826.3 403.6 L882.9 379.2 L882.9 379.2 L884.8 378.8 L887.1 378.9 L889 379.6 L890.1 380.7 L890 381.9 L888.9 382.8 L832.3 407.3 L832.3 407.3 L831 408.3 L830.9 409.5 L832 410.6 L833.9 411.3 L836.2 411.5 L838.3 411 L861.2 401.1" stroke-width="0.73"/><path d="M572.8 143.9 L546.7 153 L546.7 153 L545.6 153.7 L545.3 154.6 L546.1 155.5 L547.7 156 L549.7 156.2 L551.5 155.8 L604.2 137.3 L604.2 137.3 L606 136.9 L607.9 137.1 L609.5 137.6 L610.4 138.4 L610.1 139.3 L609 140 L556.3 158.6 L556.3 158.6 L555.1 159.4 L554.8 160.3 L555.6 161.1 L557.2 161.7 L559.2 161.8 L561.1 161.5 L613.8 142.8 L613.8 142.8 L615.6 142.5 L617.6 142.6 L619.2 143.1 L620 144 L619.8 144.9 L618.6 145.6 L565.9 164.3 L565.9 164.3 L564.7 165.1 L564.4 166 L565.2 166.8 L566.8 167.4 L568.8 167.5 L570.7 167.2 L592.1 159.6" stroke-width="0.61"/><path d="M635.9 180.8 L609.7 190.3 L609.7 190.3 L608.5 191.1 L608.3 192 L609.2 192.9 L610.8 193.5 L612.8 193.6 L614.7 193.3 L667.8 173.9 L667.8 173.9 L669.6 173.5 L671.6 173.7 L673.2 174.2 L674.1 175.1 L673.9 176 L672.8 176.8 L619.7 196.2 L619.7 196.2 L618.5 197 L618.3 197.9 L619.1 198.8 L620.8 199.4 L622.8 199.5 L624.7 199.2 L677.8 179.7 L677.8 179.7 L679.6 179.3 L681.6 179.4 L683.3 180 L684.2 180.9 L684 181.8 L682.8 182.6 L629.7 202.2 L629.7 202.2 L628.5 202.9 L628.3 203.9 L629.1 204.8 L630.8 205.4 L632.9 205.5 L634.7 205.1 L656.3 197.2" stroke-width="0.63"/><path d="M701.9 219.3 L675.5 229.3 L675.5 229.3 L674.3 230.1 L674.1 231.1 L675 232 L676.7 232.6 L678.8 232.8 L680.7 232.4 L734.1 212.1 L734.1 212.1 L736 211.7 L738 211.9 L739.7 212.5 L740.6 213.4 L740.5 214.3 L739.3 215.1 L685.9 235.5 L685.9 235.5 L684.7 236.3 L684.5 237.2 L685.4 238.2 L687.1 238.8 L689.2 238.9 L691.1 238.6 L744.6 218.1 L744.6 218.1 L746.4 217.8 L748.5 217.9 L750.2 218.5 L751.1 219.4 L751 220.4 L749.8 221.2 L696.3 241.7 L696.3 241.7 L695.1 242.5 L695 243.5 L695.9 244.4 L697.6 245 L699.7 245.2 L701.6 244.8 L723.3 236.4" stroke-width="0.65"/><path d="M770.8 259.6 L744.2 270 L744.2 270 L743 270.9 L742.9 271.9 L743.8 272.9 L745.6 273.5 L747.7 273.6 L749.6 273.2 L803.4 252 L803.4 252 L805.3 251.6 L807.4 251.8 L809.1 252.4 L810.1 253.3 L810 254.4 L808.9 255.2 L755.1 276.5 L755.1 276.5 L753.9 277.3 L753.7 278.3 L754.7 279.3 L756.5 280 L758.6 280.1 L760.5 279.7 L814.3 258.3 L814.3 258.3 L816.2 257.9 L818.3 258.1 L820.1 258.7 L821.1 259.7 L821 260.7 L819.8 261.5 L766 282.9 L766 282.9 L764.8 283.8 L764.7 284.8 L765.6 285.8 L767.4 286.5 L769.6 286.6 L771.5 286.2 L793.3 277.5" stroke-width="0.67"/><path d="M842.8 301.7 L816.1 312.6 L816.1 312.6 L814.9 313.5 L814.8 314.6 L815.8 315.6 L817.6 316.2 L819.8 316.4 L821.7 316 L875.8 293.7 L875.8 293.7 L877.7 293.3 L879.9 293.5 L881.7 294.1 L882.7 295.1 L882.7 296.2 L881.5 297 L827.4 319.4 L827.4 319.4 L826.3 320.2 L826.2 321.3 L827.2 322.3 L829 323 L831.2 323.2 L833.1 322.7 L887.3 300.3 L887.3 300.3 L889.2 299.9 L891.3 300.1 L893.2 300.7 L894.2 301.7 L894.2 302.8 L893 303.6 L838.9 326.1 L838.9 326.1 L837.7 327 L837.6 328.1 L838.6 329.1 L840.5 329.8 L842.7 330 L844.6 329.5 L866.6 320.4" stroke-width="0.70"/><path d="M918.2 345.7 L891.3 357.2 L891.3 357.2 L890.2 358.1 L890.1 359.3 L891.2 360.3 L893.1 361 L895.3 361.2 L897.3 360.7 L951.6 337.4 L951.6 337.4 L953.6 337 L955.8 337.1 L957.7 337.8 L958.8 338.9 L958.7 340 L957.6 340.9 L903.2 364.3 L903.2 364.3 L902.1 365.2 L902 366.3 L903.1 367.4 L905 368.1 L907.2 368.3 L909.2 367.8 L963.6 344.3 L963.6 344.3 L965.6 343.9 L967.8 344 L969.7 344.7 L970.8 345.8 L970.8 346.9 L969.7 347.8 L915.2 371.4 L915.2 371.4 L914 372.3 L914 373.5 L915.1 374.5 L917 375.2 L919.3 375.4 L921.2 375 L943.3 365.3" stroke-width="0.72"/></g>
<path d="M148.3 292.9 L117.2 303.8 L117.2 303.8 L115.7 304.7 L115.2 305.8 L115.8 306.8 L117.4 307.5 L119.5 307.6 L121.6 307.2 L184.6 285 L184.6 285 L186.6 284.6 L188.8 284.8 L190.4 285.4 L191 286.4 L190.6 287.5 L189.1 288.3 L126.1 310.6 L126.1 310.6 L124.6 311.4 L124.1 312.5 L124.7 313.5 L126.3 314.2 L128.4 314.3 L130.6 313.9 L193.6 291.6 L193.6 291.6 L195.7 291.2 L197.8 291.3 L199.4 292 L200.1 293 L199.6 294.1 L198.2 294.9 L135 317.3 L135 317.3 L133.5 318.2 L133 319.3 L133.7 320.3 L135.3 321 L137.4 321.1 L139.5 320.7 L165.2 311.6 M207.5 336.8 L176.1 348.3 L176.1 348.3 L174.6 349.2 L174.1 350.3 L174.8 351.4 L176.4 352.1 L178.6 352.2 L180.7 351.8 L244.4 328.6 L244.4 328.6 L246.5 328.1 L248.7 328.3 L250.3 329 L251 330 L250.6 331.1 L249.1 332 L185.4 355.3 L185.4 355.3 L183.9 356.2 L183.4 357.4 L184.1 358.4 L185.7 359.2 L187.9 359.3 L190.1 358.9 L253.9 335.4 L253.9 335.4 L256 335 L258.1 335.2 L259.8 335.9 L260.5 336.9 L260.1 338 L258.6 338.9 L194.8 362.4 L194.8 362.4 L193.3 363.3 L192.8 364.5 L193.5 365.6 L195.1 366.3 L197.4 366.4 L199.5 366 L225.4 356.4 M269.6 382.9 L237.8 394.9 L237.8 394.9 L236.3 395.9 L235.8 397 L236.6 398.2 L238.3 398.9 L240.5 399 L242.7 398.6 L307.1 374.2 L307.1 374.2 L309.2 373.7 L311.4 373.9 L313.2 374.6 L313.9 375.7 L313.5 376.8 L312 377.8 L247.6 402.3 L247.6 402.3 L246.1 403.2 L245.6 404.4 L246.4 405.6 L248.1 406.3 L250.3 406.5 L252.5 406 L317 381.4 L317 381.4 L319.1 380.9 L321.4 381.1 L323.1 381.8 L323.9 382.9 L323.5 384.1 L322 385 L257.5 409.7 L257.5 409.7 L255.9 410.7 L255.5 411.9 L256.2 413 L257.9 413.8 L260.2 413.9 L262.4 413.5 L288.6 403.4 M334.8 431.2 L302.6 443.8 L302.6 443.8 L301.1 444.8 L300.7 446.1 L301.4 447.2 L303.2 448 L305.5 448.2 L307.8 447.7 L372.8 422 L372.8 422 L375 421.5 L377.3 421.7 L379.1 422.4 L379.9 423.6 L379.5 424.8 L378 425.8 L312.9 451.6 L312.9 451.6 L311.4 452.6 L310.9 453.8 L311.7 455 L313.5 455.8 L315.8 455.9 L318.1 455.5 L383.2 429.6 L383.2 429.6 L385.4 429.1 L387.7 429.3 L389.5 430 L390.3 431.2 L389.9 432.4 L388.5 433.4 L323.2 459.4 L323.2 459.4 L321.7 460.4 L321.3 461.6 L322.1 462.8 L323.9 463.6 L326.2 463.8 L328.4 463.3 L354.9 452.7 M403.2 481.9 L370.7 495.2 L370.7 495.2 L369.2 496.3 L368.8 497.6 L369.6 498.8 L371.5 499.6 L373.8 499.8 L376.1 499.3 L441.8 472.2 L441.8 472.2 L444 471.7 L446.4 471.9 L448.3 472.7 L449.1 473.9 L448.8 475.2 L447.3 476.2 L381.5 503.3 L381.5 503.3 L380 504.4 L379.6 505.7 L380.4 507 L382.3 507.8 L384.7 508 L386.9 507.4 L452.8 480.2 L452.8 480.2 L455 479.7 L457.3 479.9 L459.2 480.7 L460.1 481.9 L459.8 483.2 L458.3 484.2 L392.4 511.6 L392.4 511.6 L390.8 512.6 L390.5 514 L391.3 515.2 L393.2 516 L395.6 516.2 L397.9 515.7 L424.6 504.5 M475.2 535.2 L442.3 549.3 L442.3 549.3 L440.8 550.4 L440.4 551.7 L441.3 553 L443.3 553.9 L445.7 554.1 L448 553.5 L514.4 525 L514.4 525 L516.7 524.5 L519.1 524.7 L521 525.5 L521.9 526.8 L521.6 528.1 L520.2 529.2 L453.7 557.8 L453.7 557.8 L452.2 559 L451.8 560.3 L452.7 561.6 L454.7 562.5 L457.1 562.7 L459.4 562.2 L525.9 533.4 L525.9 533.4 L528.2 532.9 L530.6 533.1 L532.5 533.9 L533.5 535.2 L533.2 536.5 L531.7 537.6 L465.1 566.5 L465.1 566.5 L463.6 567.6 L463.3 569 L464.2 570.3 L466.1 571.2 L468.6 571.4 L470.9 570.8 L498 559.1 M239.4 260.9 L209.4 271.5 L209.4 271.5 L208 272.3 L207.5 273.3 L208.2 274.3 L209.8 274.9 L211.9 275.1 L213.9 274.7 L274.6 253.3 L274.6 253.3 L276.6 252.9 L278.7 253.1 L280.3 253.7 L281 254.7 L280.6 255.7 L279.2 256.5 L218.5 277.9 L218.5 277.9 L217 278.8 L216.6 279.8 L217.2 280.8 L218.8 281.4 L221 281.6 L223 281.2 L283.8 259.7 L283.8 259.7 L285.8 259.3 L287.9 259.4 L289.5 260.1 L290.2 261 L289.8 262 L288.4 262.9 L227.6 284.5 L227.6 284.5 L226.1 285.3 L225.7 286.4 L226.4 287.3 L228 288 L230.1 288.1 L232.2 287.7 L256.9 278.9 M299.6 303.3 L269.3 314.3 L269.3 314.3 L267.9 315.2 L267.5 316.3 L268.2 317.3 L269.8 318 L272 318.1 L274.1 317.7 L335.4 295.3 L335.4 295.3 L337.4 294.9 L339.5 295.1 L341.2 295.7 L341.9 296.7 L341.6 297.8 L340.2 298.6 L278.8 321.1 L278.8 321.1 L277.4 322 L276.9 323.1 L277.7 324.1 L279.3 324.8 L281.5 324.9 L283.6 324.5 L345 302 L345 302 L347 301.6 L349.2 301.7 L350.8 302.4 L351.6 303.4 L351.2 304.4 L349.8 305.3 L288.4 327.9 L288.4 327.9 L286.9 328.8 L286.5 329.9 L287.2 331 L288.9 331.6 L291.1 331.8 L293.2 331.4 L318.1 322.2 M362.7 347.7 L332.1 359.2 L332.1 359.2 L330.7 360.1 L330.3 361.3 L331 362.4 L332.7 363.1 L334.9 363.2 L337.1 362.8 L399 339.3 L399 339.3 L401.1 338.9 L403.2 339 L405 339.7 L405.8 340.7 L405.4 341.9 L404 342.8 L342 366.3 L342 366.3 L340.6 367.3 L340.2 368.4 L341 369.5 L342.7 370.2 L344.9 370.4 L347 369.9 L409 346.2 L409 346.2 L411.1 345.8 L413.3 346 L415 346.7 L415.8 347.7 L415.5 348.8 L414.1 349.7 L352 373.5 L352 373.5 L350.6 374.4 L350.2 375.6 L351 376.7 L352.7 377.4 L354.9 377.5 L357.1 377.1 L382.3 367.4 M428.8 394.2 L397.9 406.3 L397.9 406.3 L396.5 407.3 L396.1 408.5 L396.9 409.6 L398.7 410.3 L401 410.5 L403.1 410 L465.6 385.4 L465.6 385.4 L467.7 384.9 L470 385.1 L471.8 385.8 L472.6 386.9 L472.3 388.1 L470.9 389 L408.3 413.8 L408.3 413.8 L406.9 414.7 L406.5 415.9 L407.3 417.1 L409.1 417.8 L411.4 418 L413.6 417.5 L476.2 392.6 L476.2 392.6 L478.3 392.2 L480.6 392.4 L482.3 393.1 L483.2 394.2 L482.9 395.4 L481.5 396.3 L418.8 421.3 L418.8 421.3 L417.4 422.3 L417 423.5 L417.8 424.6 L419.6 425.4 L421.9 425.5 L424.1 425.1 L449.6 414.9 M498.2 442.9 L467 455.7 L467 455.7 L465.5 456.7 L465.2 458 L466.1 459.2 L467.9 460 L470.3 460.1 L472.4 459.6 L535.6 433.7 L535.6 433.7 L537.7 433.2 L540 433.4 L541.9 434.1 L542.8 435.3 L542.5 436.5 L541.1 437.5 L477.9 463.6 L477.9 463.6 L476.5 464.6 L476.1 465.9 L477 467 L478.9 467.8 L481.2 468 L483.4 467.5 L546.6 441.3 L546.6 441.3 L548.8 440.9 L551.1 441 L553 441.8 L553.9 442.9 L553.6 444.2 L552.2 445.2 L488.9 471.5 L488.9 471.5 L487.5 472.5 L487.2 473.8 L488.1 475 L489.9 475.7 L492.3 475.9 L494.5 475.4 L520.2 464.7 M571.1 494.2 L539.6 507.7 L539.6 507.7 L538.1 508.7 L537.8 510.1 L538.8 511.3 L540.7 512.1 L543.1 512.3 L545.3 511.8 L609 484.4 L609 484.4 L611.2 483.9 L613.6 484.1 L615.5 484.9 L616.5 486.1 L616.2 487.4 L614.8 488.5 L551.1 515.9 L551.1 515.9 L549.6 517 L549.3 518.3 L550.3 519.6 L552.2 520.4 L554.6 520.6 L556.9 520 L620.7 492.5 L620.7 492.5 L622.8 492 L625.2 492.2 L627.2 493 L628.1 494.2 L627.9 495.5 L626.5 496.5 L562.7 524.2 L562.7 524.2 L561.2 525.3 L560.9 526.6 L561.9 527.9 L563.9 528.7 L566.3 528.9 L568.5 528.4 L594.4 517.1 M327.2 230.1 L298.3 240.2 L298.3 240.2 L296.9 241 L296.5 242 L297.2 243 L298.8 243.6 L300.9 243.7 L302.9 243.4 L361.4 222.8 L361.4 222.8 L363.4 222.4 L365.4 222.5 L367 223.1 L367.7 224 L367.4 225 L366.1 225.8 L307.5 246.5 L307.5 246.5 L306.1 247.3 L305.7 248.3 L306.4 249.3 L308 249.9 L310.1 250 L312.1 249.6 L370.7 228.9 L370.7 228.9 L372.7 228.5 L374.7 228.6 L376.3 229.3 L377.1 230.2 L376.7 231.2 L375.4 232 L316.8 252.8 L316.8 252.8 L315.4 253.6 L315 254.6 L315.7 255.6 L317.3 256.2 L319.4 256.3 L321.4 256 L345.2 247.5 M388.3 271 L359.1 281.6 L359.1 281.6 L357.8 282.5 L357.4 283.5 L358.1 284.5 L359.8 285.1 L361.9 285.3 L363.9 284.9 L423 263.3 L423 263.3 L425 262.9 L427.1 263.1 L428.8 263.7 L429.5 264.6 L429.2 265.7 L427.9 266.5 L368.8 288.2 L368.8 288.2 L367.4 289 L367 290.1 L367.8 291 L369.4 291.7 L371.6 291.8 L373.6 291.4 L432.8 269.7 L432.8 269.7 L434.7 269.3 L436.8 269.5 L438.5 270.1 L439.3 271.1 L439 272.1 L437.6 272.9 L378.4 294.7 L378.4 294.7 L377.1 295.6 L376.7 296.7 L377.5 297.7 L379.1 298.3 L381.3 298.5 L383.3 298.1 L407.3 289.2 M452.3 313.8 L422.8 324.9 L422.8 324.9 L421.4 325.8 L421.1 326.9 L421.9 327.9 L423.6 328.6 L425.8 328.8 L427.8 328.3 L487.5 305.7 L487.5 305.7 L489.5 305.3 L491.6 305.4 L493.3 306.1 L494.2 307.1 L493.9 308.2 L492.5 309.1 L432.9 331.8 L432.9 331.8 L431.5 332.6 L431.2 333.8 L432 334.8 L433.7 335.5 L435.9 335.6 L437.9 335.2 L497.6 312.4 L497.6 312.4 L499.7 312 L501.8 312.1 L503.5 312.8 L504.4 313.8 L504.1 314.9 L502.8 315.8 L443 338.7 L443 338.7 L441.6 339.5 L441.3 340.7 L442.1 341.7 L443.9 342.4 L446.1 342.6 L448.1 342.1 L472.4 332.8 M519.2 358.6 L489.5 370.3 L489.5 370.3 L488.1 371.2 L487.8 372.3 L488.7 373.4 L490.4 374.1 L492.7 374.3 L494.8 373.9 L554.9 350.1 L554.9 350.1 L557 349.7 L559.2 349.8 L560.9 350.5 L561.8 351.6 L561.6 352.7 L560.2 353.6 L500 377.4 L500 377.4 L498.7 378.4 L498.4 379.5 L499.2 380.6 L501 381.3 L503.3 381.5 L505.4 381.1 L565.6 357.1 L565.6 357.1 L567.6 356.7 L569.9 356.8 L571.6 357.6 L572.5 358.6 L572.3 359.8 L571 360.7 L510.7 384.7 L510.7 384.7 L509.3 385.6 L509 386.8 L509.9 387.9 L511.7 388.6 L513.9 388.8 L516 388.3 L540.5 378.5 M589.4 405.5 L559.4 417.8 L559.4 417.8 L558.1 418.8 L557.8 420 L558.7 421.1 L560.5 421.9 L562.8 422.1 L565 421.6 L625.6 396.6 L625.6 396.6 L627.7 396.2 L630 396.3 L631.8 397.1 L632.8 398.2 L632.5 399.4 L631.2 400.3 L570.5 425.4 L570.5 425.4 L569.1 426.3 L568.9 427.6 L569.8 428.7 L571.6 429.5 L574 429.6 L576.1 429.2 L636.8 404 L636.8 404 L638.9 403.6 L641.2 403.7 L643 404.4 L644 405.6 L643.8 406.8 L642.4 407.7 L581.7 433 L581.7 433 L580.3 433.9 L580 435.2 L581 436.3 L582.8 437.1 L585.1 437.2 L587.3 436.8 L612 426.5 M663.1 454.8 L632.9 467.8 L632.9 467.8 L631.5 468.8 L631.3 470.1 L632.2 471.3 L634.2 472 L636.5 472.2 L638.7 471.7 L699.8 445.5 L699.8 445.5 L701.9 445 L704.3 445.2 L706.2 445.9 L707.2 447.1 L707 448.3 L705.7 449.3 L644.5 475.7 L644.5 475.7 L643.1 476.7 L642.9 478 L643.9 479.2 L645.8 480 L648.2 480.2 L650.3 479.7 L711.6 453.2 L711.6 453.2 L713.7 452.7 L716 452.9 L718 453.7 L719 454.8 L718.8 456.1 L717.5 457.1 L656.2 483.7 L656.2 483.7 L654.8 484.7 L654.6 486 L655.6 487.2 L657.6 488 L659.9 488.2 L662.1 487.7 L687 476.8 M411.9 200.3 L384.1 210.1 L384.1 210.1 L382.7 210.9 L382.4 211.9 L383.1 212.8 L384.7 213.4 L386.8 213.5 L388.7 213.1 L445.2 193.3 L445.2 193.3 L447.1 192.9 L449.1 193 L450.7 193.6 L451.4 194.5 L451.1 195.5 L449.9 196.2 L393.4 216.2 L393.4 216.2 L392.1 216.9 L391.7 217.9 L392.5 218.8 L394.1 219.4 L396.1 219.6 L398.1 219.2 L454.6 199.2 L454.6 199.2 L456.5 198.8 L458.5 199 L460.1 199.5 L460.9 200.4 L460.6 201.4 L459.3 202.2 L402.8 222.3 L402.8 222.3 L401.4 223 L401.1 224 L401.9 224.9 L403.5 225.5 L405.5 225.7 L407.5 225.3 L430.4 217.1 M473.8 239.8 L445.7 250.1 L445.7 250.1 L444.4 250.9 L444.1 251.9 L444.9 252.9 L446.5 253.5 L448.6 253.6 L450.6 253.2 L507.5 232.4 L507.5 232.4 L509.5 232.1 L511.5 232.2 L513.2 232.8 L514 233.7 L513.7 234.7 L512.4 235.5 L455.4 256.4 L455.4 256.4 L454.1 257.2 L453.8 258.2 L454.6 259.2 L456.3 259.8 L458.4 260 L460.3 259.6 L517.4 238.6 L517.4 238.6 L519.3 238.2 L521.4 238.4 L523 239 L523.9 239.9 L523.6 240.9 L522.3 241.7 L465.2 262.8 L465.2 262.8 L463.9 263.6 L463.6 264.6 L464.4 265.6 L466.1 266.2 L468.2 266.3 L470.2 266 L493.3 257.4 M538.5 281.1 L510.2 291.9 L510.2 291.9 L508.8 292.7 L508.6 293.8 L509.4 294.8 L511.1 295.4 L513.2 295.6 L515.2 295.2 L572.7 273.4 L572.7 273.4 L574.6 273 L576.8 273.1 L578.5 273.8 L579.3 274.7 L579.1 275.8 L577.8 276.6 L520.3 298.5 L520.3 298.5 L519 299.3 L518.8 300.4 L519.6 301.4 L521.3 302.1 L523.5 302.2 L525.5 301.8 L583 279.8 L583 279.8 L584.9 279.4 L587.1 279.6 L588.8 280.2 L589.7 281.2 L589.4 282.2 L588.2 283.1 L530.6 305.1 L530.6 305.1 L529.3 306 L529 307.1 L529.9 308.1 L531.6 308.7 L533.8 308.9 L535.8 308.5 L559.1 299.5 M606.2 324.3 L577.6 335.6 L577.6 335.6 L576.3 336.5 L576.1 337.6 L576.9 338.6 L578.7 339.3 L580.9 339.5 L582.9 339 L640.8 316.2 L640.8 316.2 L642.8 315.8 L645 315.9 L646.8 316.6 L647.7 317.6 L647.5 318.7 L646.2 319.6 L588.3 342.5 L588.3 342.5 L587 343.4 L586.7 344.5 L587.6 345.6 L589.4 346.3 L591.6 346.4 L593.7 346 L651.6 323 L651.6 323 L653.6 322.5 L655.8 322.7 L657.6 323.4 L658.5 324.4 L658.3 325.5 L657 326.4 L599 349.5 L599 349.5 L597.7 350.4 L597.5 351.5 L598.4 352.6 L600.2 353.3 L602.4 353.4 L604.4 353 L628 343.6 M677.1 369.6 L648.3 381.4 L648.3 381.4 L647 382.3 L646.8 383.5 L647.7 384.6 L649.6 385.3 L651.8 385.5 L653.9 385 L712.2 361 L712.2 361 L714.2 360.6 L716.5 360.7 L718.3 361.4 L719.3 362.5 L719.1 363.7 L717.9 364.6 L659.5 388.7 L659.5 388.7 L658.2 389.6 L658 390.8 L658.9 391.9 L660.8 392.6 L663 392.7 L665.1 392.3 L723.5 368.1 L723.5 368.1 L725.5 367.7 L727.8 367.8 L729.6 368.5 L730.6 369.6 L730.5 370.8 L729.2 371.7 L670.8 396 L670.8 396 L669.4 396.9 L669.3 398.1 L670.2 399.2 L672.1 399.9 L674.4 400.1 L676.4 399.6 L700.2 389.7 M751.5 417 L722.4 429.5 L722.4 429.5 L721.1 430.4 L721 431.7 L722 432.8 L723.9 433.6 L726.2 433.7 L728.3 433.3 L787.1 408 L787.1 408 L789.1 407.6 L791.4 407.7 L793.3 408.5 L794.3 409.6 L794.2 410.8 L793 411.7 L734.2 437.1 L734.2 437.1 L732.9 438 L732.7 439.3 L733.7 440.4 L735.7 441.2 L738 441.4 L740.1 440.9 L798.9 415.5 L798.9 415.5 L801 415 L803.2 415.2 L805.2 415.9 L806.2 417 L806.1 418.3 L804.9 419.2 L746 444.7 L746 444.7 L744.7 445.7 L744.6 447 L745.6 448.1 L747.5 448.9 L749.9 449.1 L752 448.6 L775.9 438.2 M493.7 171.6 L466.8 181.1 L466.8 181.1 L465.6 181.8 L465.3 182.7 L466 183.6 L467.6 184.2 L469.6 184.3 L471.5 184 L526.1 164.8 L526.1 164.8 L527.9 164.4 L529.9 164.6 L531.5 165.1 L532.3 166 L532 166.9 L530.8 167.6 L476.2 186.9 L476.2 186.9 L475 187.7 L474.7 188.6 L475.5 189.5 L477.1 190.1 L479.1 190.2 L481 189.8 L535.6 170.5 L535.6 170.5 L537.4 170.2 L539.4 170.3 L541 170.9 L541.8 171.7 L541.6 172.6 L540.4 173.4 L485.7 192.8 L485.7 192.8 L484.5 193.5 L484.2 194.5 L485 195.4 L486.6 196 L488.6 196.1 L490.5 195.7 L512.7 187.8 M556.3 209.8 L529.2 219.7 L529.2 219.7 L527.9 220.5 L527.7 221.4 L528.5 222.4 L530.1 223 L532.2 223.1 L534.1 222.7 L589.1 202.6 L589.1 202.6 L590.9 202.3 L593 202.4 L594.6 203 L595.4 203.9 L595.2 204.9 L594 205.6 L539 225.8 L539 225.8 L537.8 226.6 L537.5 227.5 L538.3 228.5 L540 229.1 L542.1 229.2 L544 228.8 L599 208.6 L599 208.6 L600.9 208.3 L602.9 208.4 L604.6 209 L605.4 209.9 L605.2 210.9 L604 211.6 L548.9 231.9 L548.9 231.9 L547.7 232.7 L547.4 233.7 L548.3 234.6 L549.9 235.2 L552 235.4 L553.9 235 L576.3 226.7 M621.7 249.7 L594.3 260 L594.3 260 L593.1 260.8 L592.9 261.9 L593.7 262.8 L595.4 263.4 L597.5 263.6 L599.5 263.2 L654.8 242.2 L654.8 242.2 L656.7 241.8 L658.8 241.9 L660.5 242.6 L661.4 243.5 L661.2 244.5 L660 245.3 L604.6 266.4 L604.6 266.4 L603.4 267.2 L603.2 268.2 L604 269.2 L605.7 269.8 L607.9 270 L609.8 269.6 L665.2 248.4 L665.2 248.4 L667.1 248 L669.2 248.2 L671 248.8 L671.8 249.7 L671.7 250.8 L670.5 251.6 L615 272.8 L615 272.8 L613.7 273.6 L613.5 274.7 L614.4 275.6 L616.1 276.3 L618.3 276.4 L620.2 276 L642.7 267.4 M690 291.4 L662.5 302.2 L662.5 302.2 L661.2 303.1 L661 304.1 L661.9 305.1 L663.7 305.8 L665.9 305.9 L667.8 305.5 L723.6 283.5 L723.6 283.5 L725.5 283.1 L727.7 283.3 L729.5 283.9 L730.4 284.9 L730.2 285.9 L729 286.8 L673.2 308.9 L673.2 308.9 L672 309.7 L671.8 310.8 L672.7 311.8 L674.5 312.5 L676.7 312.6 L678.6 312.2 L734.5 290 L734.5 290 L736.4 289.6 L738.6 289.8 L740.3 290.4 L741.3 291.4 L741.1 292.5 L739.9 293.3 L684.1 315.6 L684.1 315.6 L682.8 316.4 L682.7 317.5 L683.6 318.6 L685.4 319.2 L687.6 319.4 L689.5 319 L712.2 309.9 M761.5 335 L733.8 346.4 L733.8 346.4 L732.5 347.3 L732.4 348.4 L733.4 349.4 L735.2 350.1 L737.4 350.3 L739.4 349.8 L795.6 326.7 L795.6 326.7 L797.5 326.3 L799.7 326.5 L801.6 327.2 L802.6 328.2 L802.4 329.3 L801.2 330.2 L745.1 353.3 L745.1 353.3 L743.8 354.2 L743.7 355.4 L744.7 356.4 L746.5 357.1 L748.7 357.3 L750.7 356.9 L806.9 333.6 L806.9 333.6 L808.9 333.2 L811.1 333.3 L813 334 L814 335 L813.9 336.1 L812.7 337 L756.4 360.4 L756.4 360.4 L755.2 361.3 L755 362.4 L756 363.5 L757.9 364.2 L760.1 364.4 L762.1 363.9 L785 354.4 M836.4 380.7 L808.5 392.6 L808.5 392.6 L807.3 393.6 L807.2 394.8 L808.2 395.9 L810.1 396.6 L812.4 396.7 L814.4 396.3 L870.9 372 L870.9 372 L872.9 371.6 L875.2 371.8 L877.1 372.5 L878.1 373.5 L878.1 374.7 L876.9 375.6 L820.4 400 L820.4 400 L819.1 400.9 L819 402.1 L820.1 403.2 L822 403.9 L824.3 404.1 L826.3 403.6 L882.9 379.2 L882.9 379.2 L884.8 378.8 L887.1 378.9 L889 379.6 L890.1 380.7 L890 381.9 L888.9 382.8 L832.3 407.3 L832.3 407.3 L831 408.3 L830.9 409.5 L832 410.6 L833.9 411.3 L836.2 411.5 L838.3 411 L861.2 401.1 M572.8 143.9 L546.7 153 L546.7 153 L545.6 153.7 L545.3 154.6 L546.1 155.5 L547.7 156 L549.7 156.2 L551.5 155.8 L604.2 137.3 L604.2 137.3 L606 136.9 L607.9 137.1 L609.5 137.6 L610.4 138.4 L610.1 139.3 L609 140 L556.3 158.6 L556.3 158.6 L555.1 159.4 L554.8 160.3 L555.6 161.1 L557.2 161.7 L559.2 161.8 L561.1 161.5 L613.8 142.8 L613.8 142.8 L615.6 142.5 L617.6 142.6 L619.2 143.1 L620 144 L619.8 144.9 L618.6 145.6 L565.9 164.3 L565.9 164.3 L564.7 165.1 L564.4 166 L565.2 166.8 L566.8 167.4 L568.8 167.5 L570.7 167.2 L592.1 159.6 M635.9 180.8 L609.7 190.3 L609.7 190.3 L608.5 191.1 L608.3 192 L609.2 192.9 L610.8 193.5 L612.8 193.6 L614.7 193.3 L667.8 173.9 L667.8 173.9 L669.6 173.5 L671.6 173.7 L673.2 174.2 L674.1 175.1 L673.9 176 L672.8 176.8 L619.7 196.2 L619.7 196.2 L618.5 197 L618.3 197.9 L619.1 198.8 L620.8 199.4 L622.8 199.5 L624.7 199.2 L677.8 179.7 L677.8 179.7 L679.6 179.3 L681.6 179.4 L683.3 180 L684.2 180.9 L684 181.8 L682.8 182.6 L629.7 202.2 L629.7 202.2 L628.5 202.9 L628.3 203.9 L629.1 204.8 L630.8 205.4 L632.9 205.5 L634.7 205.1 L656.3 197.2 M701.9 219.3 L675.5 229.3 L675.5 229.3 L674.3 230.1 L674.1 231.1 L675 232 L676.7 232.6 L678.8 232.8 L680.7 232.4 L734.1 212.1 L734.1 212.1 L736 211.7 L738 211.9 L739.7 212.5 L740.6 213.4 L740.5 214.3 L739.3 215.1 L685.9 235.5 L685.9 235.5 L684.7 236.3 L684.5 237.2 L685.4 238.2 L687.1 238.8 L689.2 238.9 L691.1 238.6 L744.6 218.1 L744.6 218.1 L746.4 217.8 L748.5 217.9 L750.2 218.5 L751.1 219.4 L751 220.4 L749.8 221.2 L696.3 241.7 L696.3 241.7 L695.1 242.5 L695 243.5 L695.9 244.4 L697.6 245 L699.7 245.2 L701.6 244.8 L723.3 236.4 M770.8 259.6 L744.2 270 L744.2 270 L743 270.9 L742.9 271.9 L743.8 272.9 L745.6 273.5 L747.7 273.6 L749.6 273.2 L803.4 252 L803.4 252 L805.3 251.6 L807.4 251.8 L809.1 252.4 L810.1 253.3 L810 254.4 L808.9 255.2 L755.1 276.5 L755.1 276.5 L753.9 277.3 L753.7 278.3 L754.7 279.3 L756.5 280 L758.6 280.1 L760.5 279.7 L814.3 258.3 L814.3 258.3 L816.2 257.9 L818.3 258.1 L820.1 258.7 L821.1 259.7 L821 260.7 L819.8 261.5 L766 282.9 L766 282.9 L764.8 283.8 L764.7 284.8 L765.6 285.8 L767.4 286.5 L769.6 286.6 L771.5 286.2 L793.3 277.5 M842.8 301.7 L816.1 312.6 L816.1 312.6 L814.9 313.5 L814.8 314.6 L815.8 315.6 L817.6 316.2 L819.8 316.4 L821.7 316 L875.8 293.7 L875.8 293.7 L877.7 293.3 L879.9 293.5 L881.7 294.1 L882.7 295.1 L882.7 296.2 L881.5 297 L827.4 319.4 L827.4 319.4 L826.3 320.2 L826.2 321.3 L827.2 322.3 L829 323 L831.2 323.2 L833.1 322.7 L887.3 300.3 L887.3 300.3 L889.2 299.9 L891.3 300.1 L893.2 300.7 L894.2 301.7 L894.2 302.8 L893 303.6 L838.9 326.1 L838.9 326.1 L837.7 327 L837.6 328.1 L838.6 329.1 L840.5 329.8 L842.7 330 L844.6 329.5 L866.6 320.4 M918.2 345.7 L891.3 357.2 L891.3 357.2 L890.2 358.1 L890.1 359.3 L891.2 360.3 L893.1 361 L895.3 361.2 L897.3 360.7 L951.6 337.4 L951.6 337.4 L953.6 337 L955.8 337.1 L957.7 337.8 L958.8 338.9 L958.7 340 L957.6 340.9 L903.2 364.3 L903.2 364.3 L902.1 365.2 L902 366.3 L903.1 367.4 L905 368.1 L907.2 368.3 L909.2 367.8 L963.6 344.3 L963.6 344.3 L965.6 343.9 L967.8 344 L969.7 344.7 L970.8 345.8 L970.8 346.9 L969.7 347.8 L915.2 371.4 L915.2 371.4 L914 372.3 L914 373.5 L915.1 374.5 L917 375.2 L919.3 375.4 L921.2 375 L943.3 365.3" fill="none" stroke="#a89a18" stroke-width="1" stroke-dasharray="1 6.5" stroke-opacity=".85"/>
<path d="M164.8 311.3 L170.1 310.1 L177.8 312.2 L177.7 314.2 L173.9 313.9 L167.7 311.9Z M225.1 356.1 L230.4 354.8 L238.3 357.1 L238.3 359.1 L234.4 358.9 L228 356.8Z M288.2 403.1 L293.6 401.7 L301.9 404.1 L301.9 406.3 L297.9 406 L291.3 403.8Z M354.5 452.4 L360 451 L368.5 453.4 L368.6 455.7 L364.5 455.4 L357.7 453.1Z M424.2 504.2 L429.8 502.7 L438.6 505.3 L438.8 507.7 L434.5 507.4 L427.5 504.9Z M497.5 558.7 L503.2 557.1 L512.3 559.8 L512.6 562.4 L508.2 562.1 L500.9 559.5Z M256.5 278.7 L261.6 277.5 L269.2 279.6 L269.2 281.5 L265.5 281.2 L259.3 279.3Z M317.7 321.9 L322.9 320.7 L330.8 322.8 L330.9 324.8 L327 324.5 L320.7 322.5Z M381.9 367.1 L387.1 365.8 L395.3 368.1 L395.4 370.2 L391.5 369.9 L384.9 367.8Z M449.1 414.6 L454.5 413.2 L462.9 415.6 L463.1 417.8 L459.1 417.5 L452.3 415.3Z M519.8 464.4 L525.2 463 L533.9 465.4 L534.2 467.8 L530 467.4 L523 465.1Z M594 516.8 L599.5 515.3 L608.5 517.8 L608.9 520.3 L604.6 520 L597.3 517.5Z M344.8 247.2 L349.8 246.1 L357.4 248.1 L357.5 249.9 L353.8 249.7 L347.7 247.8Z M407 288.9 L412 287.7 L419.8 289.8 L420 291.7 L416.2 291.5 L409.9 289.5Z M472 332.5 L477.1 331.3 L485.1 333.5 L485.4 335.5 L481.5 335.2 L475 333.1Z M540.1 378.2 L545.2 376.9 L553.6 379.2 L553.9 381.3 L549.9 381 L543.2 378.9Z M611.5 426.2 L616.7 424.8 L625.4 427.2 L625.8 429.4 L621.7 429.1 L614.7 426.9Z M686.5 476.5 L691.8 475.1 L700.8 477.6 L701.3 479.9 L697.1 479.6 L689.8 477.2Z M430.1 216.9 L434.9 215.8 L442.4 217.7 L442.6 219.5 L439 219.2 L432.9 217.4Z M493 257.1 L497.8 256 L505.6 258 L505.9 259.8 L502.1 259.6 L495.8 257.7Z M558.7 299.2 L563.6 298 L571.7 300.1 L572 302.1 L568.2 301.8 L561.7 299.8Z M627.6 343.3 L632.6 342 L640.9 344.2 L641.3 346.2 L637.4 346 L630.6 343.9Z M699.7 389.5 L704.8 388.1 L713.3 390.4 L713.8 392.6 L709.8 392.3 L702.9 390.1Z M775.4 437.9 L780.5 436.5 L789.4 438.9 L790 441.1 L785.9 440.8 L778.6 438.6Z M512.3 187.6 L517 186.6 L524.5 188.4 L524.7 190.1 L521.1 189.9 L515.1 188.1Z M575.9 226.5 L580.6 225.4 L588.3 227.3 L588.7 229.1 L585 228.9 L578.7 227Z M642.3 267.1 L647.1 266 L655.1 268 L655.5 269.9 L651.7 269.6 L645.2 267.7Z M711.8 309.6 L716.6 308.4 L724.9 310.5 L725.3 312.5 L721.5 312.2 L714.8 310.2Z M784.5 354.1 L789.4 352.9 L797.9 355.1 L798.5 357.1 L794.6 356.8 L787.6 354.7Z M860.8 400.8 L865.7 399.4 L874.5 401.7 L875.2 403.9 L871.2 403.6 L864 401.4Z M591.7 159.3 L596.2 158.3 L603.7 160.1 L604 161.8 L600.5 161.5 L594.5 159.8Z M655.9 196.9 L660.5 195.9 L668.1 197.7 L668.6 199.5 L664.9 199.2 L658.7 197.5Z M722.9 236.2 L727.5 235.1 L735.4 237 L735.9 238.8 L732.2 238.6 L725.8 236.7Z M792.9 277.2 L797.6 276 L805.8 278.1 L806.3 280 L802.6 279.7 L795.9 277.8Z M866.2 320.1 L870.9 318.9 L879.3 321 L880 323 L876.1 322.7 L869.2 320.7Z M942.9 365.1 L947.7 363.8 L956.4 366 L957.2 368.1 L953.2 367.8 L946 365.7Z" fill="#0a3a0a" stroke="#e6160f" stroke-width="1.1"/>
<path d="M177.1 313.8L182.1 389.6 M237.7 358.7L242 435.6 M301.2 405.8L304.7 483.8 M368 455.2L370.4 534.4 M438.1 507.2L439.4 587.5 M511.8 561.8L512 643.3 M268.6 281L272.3 356 M330.2 324.3L333.1 400.4 M394.8 369.7L396.7 446.8 M462.4 417.3L463.4 495.5 M533.5 467.2L533.3 546.6 M608.1 519.7L606.8 600.3 M356.9 249.5L359.2 323.6 M419.3 291.3L420.8 366.4 M484.7 335L485.3 411.2 M553.2 380.8L552.8 458.1 M625.1 428.9L623.5 507.3 M700.5 479.4L697.7 558.9 M442 219.1L443.1 292.3 M505.2 259.4L505.5 333.6 M571.3 301.6L570.6 376.9 M640.6 345.8L638.8 422.2 M713.1 392.1L710.2 469.5 M789.2 440.6L785.1 519.2 M524.1 189.7L524.1 262 M588 228.7L587.1 302.1 M654.8 269.5L652.9 343.8 M724.6 312.1L721.7 387.5 M797.8 356.7L793.7 433.2 M874.4 403.4L869.1 481.1 M603.4 161.4L602.3 232.9 M667.9 199.1L665.9 271.5 M735.2 238.4L732.3 311.9 M805.6 279.5L801.6 354.1 M879.3 322.6L874.1 398.2 M956.4 367.6L949.9 444.3" fill="none" stroke="#a80e0c" stroke-width="1.15" stroke-dasharray="15 1.5"/>
<path d="M141.8 213L147.5 292.2 M201.8 255.7L206.8 336.1 M264.7 300.5L268.8 382 M330.8 347.5L333.9 430.3 M400.2 396.9L402.3 481 M473.3 448.9L474.2 534.3 M234.4 182.1L238.6 260.2 M295.4 223.2L298.8 302.5 M359.3 266.3L361.8 346.9 M426.4 311.6L427.9 393.3 M496.8 359.1L497.2 442.1 M570.8 409L570 493.3 M323.5 152.2L326.4 229.4 M385.5 191.9L387.5 270.3 M450.3 233.5L451.4 313 M518.2 277L518.3 357.8 M589.5 322.7L588.4 404.7 M664.3 370.7L662.1 454 M409.5 123.4L411.1 199.7 M472.2 161.8L473 239.1 M537.9 201.9L537.6 280.4 M606.5 243.8L605.3 323.6 M678.5 287.9L676.1 368.8 M754.1 334L750.4 416.2 M492.5 95.7L492.9 171 M555.9 132.7L555.5 209.1 M622.2 171.4L620.8 249 M691.6 211.9L689.1 290.6 M764.2 254.3L760.5 334.2 M840.3 298.8L835.4 379.9 M572.6 68.8L571.9 143.2 M636.6 104.6L635.1 180.1 M703.5 142L701 218.6 M773.4 181.1L769.8 258.9 M846.6 222L841.8 300.9 M923.2 264.9L917.1 344.9" fill="none" stroke="#055205" stroke-width="1"/>
<path d="M141.8 213L147.5 292.2 M201.8 255.7L206.8 336.1 M264.7 300.5L268.8 382 M330.8 347.5L333.9 430.3 M400.2 396.9L402.3 481 M473.3 448.9L474.2 534.3 M234.4 182.1L238.6 260.2 M295.4 223.2L298.8 302.5 M359.3 266.3L361.8 346.9 M426.4 311.6L427.9 393.3 M496.8 359.1L497.2 442.1 M570.8 409L570 493.3 M323.5 152.2L326.4 229.4 M385.5 191.9L387.5 270.3 M450.3 233.5L451.4 313 M518.2 277L518.3 357.8 M589.5 322.7L588.4 404.7 M664.3 370.7L662.1 454 M409.5 123.4L411.1 199.7 M472.2 161.8L473 239.1 M537.9 201.9L537.6 280.4 M606.5 243.8L605.3 323.6 M678.5 287.9L676.1 368.8 M754.1 334L750.4 416.2 M492.5 95.7L492.9 171 M555.9 132.7L555.5 209.1 M622.2 171.4L620.8 249 M691.6 211.9L689.1 290.6 M764.2 254.3L760.5 334.2 M840.3 298.8L835.4 379.9 M572.6 68.8L571.9 143.2 M636.6 104.6L635.1 180.1 M703.5 142L701 218.6 M773.4 181.1L769.8 258.9 M846.6 222L841.8 300.9 M923.2 264.9L917.1 344.9" fill="none" stroke="#0cb80c" stroke-width="1.12" stroke-dasharray="10 2.5"/>
<g fill="#e6160f"><circle cx="147.5" cy="292.2" r="1.3"/><circle cx="206.8" cy="336.1" r="1.3"/><circle cx="268.8" cy="382" r="1.3"/><circle cx="333.9" cy="430.3" r="1.3"/><circle cx="402.3" cy="481" r="1.3"/><circle cx="474.2" cy="534.3" r="1.3"/><circle cx="238.6" cy="260.2" r="1.3"/><circle cx="298.8" cy="302.5" r="1.3"/><circle cx="361.8" cy="346.9" r="1.3"/><circle cx="427.9" cy="393.3" r="1.3"/><circle cx="497.2" cy="442.1" r="1.3"/><circle cx="570" cy="493.3" r="1.3"/><circle cx="326.4" cy="229.4" r="1.3"/><circle cx="387.5" cy="270.3" r="1.3"/><circle cx="451.4" cy="313" r="1.3"/><circle cx="518.3" cy="357.8" r="1.3"/><circle cx="588.4" cy="404.7" r="1.3"/><circle cx="662.1" cy="454" r="1.3"/><circle cx="411.1" cy="199.7" r="1.3"/><circle cx="473" cy="239.1" r="1.3"/><circle cx="537.6" cy="280.4" r="1.3"/><circle cx="605.3" cy="323.6" r="1.3"/><circle cx="676.1" cy="368.8" r="1.3"/><circle cx="750.4" cy="416.2" r="1.3"/><circle cx="492.9" cy="171" r="1.3"/><circle cx="555.5" cy="209.1" r="1.3"/><circle cx="620.8" cy="249" r="1.3"/><circle cx="689.1" cy="290.6" r="1.3"/><circle cx="760.5" cy="334.2" r="1.3"/><circle cx="835.4" cy="379.9" r="1.3"/><circle cx="571.9" cy="143.2" r="1.3"/><circle cx="635.1" cy="180.1" r="1.3"/><circle cx="701" cy="218.6" r="1.3"/><circle cx="769.8" cy="258.9" r="1.3"/><circle cx="841.8" cy="300.9" r="1.3"/><circle cx="917.1" cy="344.9" r="1.3"/></g>
<path d="M140.6 192.8 L195.9 174.6 M320.3 133.4 L371.7 116.4 M487.6 78.1 L535.5 62.3 M550.2 114.4 L598.5 97.8 M755.6 233.3 L805 214.2 M214.5 244.9 L270.6 225.4 M396.6 181.8 L448.6 163.8 M371.1 255.4 L425.6 235.7 M548.1 191.7 L598.7 173.5 M412.6 384.3 L470.4 361.7 M600.1 311.1 L653.5 290.3 M582.1 396.2 L638.1 373.4 M763.7 322.3 L815.4 301.2 M117.5 215.7 L114.9 216.5 L114 216.9 L113.4 217.3 L113.2 217.7 L113.4 218.1 L113.8 218.5 L154 247.5 L154.9 248 L155.8 248.3 L156.8 248.3 L157.9 248.2 L159.1 247.9 L162.2 246.8 M210.6 184.6 L208.1 185.4 L207.3 185.8 L206.7 186.1 L206.6 186.5 L206.7 186.9 L207.2 187.4 L248.1 215.3 L248.9 215.8 L249.9 216 L250.9 216.1 L251.9 216 L253.1 215.7 L256.1 214.6 M300.4 154.6 L297.9 155.4 L297.1 155.8 L296.7 156.1 L296.5 156.5 L296.7 156.9 L297.2 157.3 L338.7 184.3 L339.5 184.7 L340.5 185 L341.4 185 L342.5 184.9 L343.6 184.6 L346.5 183.6 M386.9 125.8 L384.6 126.5 L383.8 126.9 L383.3 127.2 L383.2 127.6 L383.4 128 L383.9 128.4 L426 154.4 L426.8 154.8 L427.8 155.1 L428.7 155.1 L429.7 155 L430.8 154.7 L433.6 153.8 M470.4 97.9 L468.1 98.7 L467.4 99 L467 99.3 L466.9 99.7 L467.1 100 L467.6 100.4 L510.2 125.6 L511 126 L511.9 126.2 L512.9 126.3 L513.9 126.2 L514.9 125.9 L517.6 125 M401.2 314.5 L398.6 315.5 L397.8 315.9 L397.3 316.3 L397.1 316.8 L397.3 317.2 L397.9 317.7 L445.1 350 L446 350.5 L447.1 350.8 L448.1 350.9 L449.3 350.7 L450.5 350.4 L453.6 349.2 M582.7 246.6 L580.3 247.5 L579.5 247.8 L579 248.2 L578.9 248.6 L579.2 249.1 L579.8 249.6 L628.1 279.4 L629.1 279.9 L630.1 280.2 L631.1 280.3 L632.2 280.1 L633.3 279.8 L636.2 278.7 M373.9 400.1 L371.1 401.2 L370.2 401.6 L369.7 402.1 L369.5 402.6 L369.8 403.1 L370.4 403.7 L419.3 439 L420.3 439.5 L421.3 439.9 L422.5 440 L423.7 439.8 L424.9 439.4 L428.2 438.1 M564.5 325.7 L562 326.7 L561.2 327.1 L560.7 327.5 L560.6 328 L560.9 328.5 L561.5 329 L611.7 361.6 L612.7 362.1 L613.7 362.4 L614.8 362.5 L615.9 362.3 L617.1 362 L620.1 360.8 M740.5 257 L738.2 258 L737.4 258.3 L737 258.7 L736.9 259.2 L737.2 259.6 L737.9 260.1 L789 290.3 L790 290.8 L791 291 L792.1 291.1 L793.1 291 L794.2 290.6 L797 289.5 M307.9 213.2 L310.5 212.3 L311.5 212 L312.5 211.9 L313.4 211.9 L314.2 212.1 L314.9 212.5 L358.3 241.4 L358.8 241.9 L359 242.3 L358.9 242.8 L358.4 243.2 L357.5 243.6 L354.8 244.5 M483.3 152.4 L485.7 151.6 L486.7 151.3 L487.6 151.2 L488.5 151.3 L489.3 151.5 L490 151.9 L534.5 178.7 L535.1 179.1 L535.3 179.6 L535.2 180 L534.7 180.4 L533.9 180.7 L531.5 181.6 M646.4 95.9 L648.7 95.2 L649.6 94.9 L650.4 94.8 L651.3 94.9 L652.1 95.1 L652.9 95.4 L698.1 120.5 L698.7 120.9 L699 121.3 L699 121.7 L698.5 122 L697.8 122.3 L695.5 123.2 M278 289.5 L280.7 288.5 L281.8 288.2 L282.8 288.1 L283.7 288.2 L284.6 288.4 L285.4 288.8 L330.1 320.2 L330.7 320.8 L330.9 321.3 L330.7 321.8 L330.2 322.2 L329.3 322.6 L326.5 323.7 M461.9 223.3 L464.5 222.4 L465.5 222.1 L466.4 222 L467.3 222.1 L468.2 222.3 L469 222.7 L514.9 251.8 L515.6 252.3 L515.8 252.8 L515.7 253.2 L515.2 253.7 L514.4 254 L511.8 255 M632.4 162 L634.8 161.1 L635.8 160.9 L636.7 160.7 L637.5 160.8 L638.4 161 L639.2 161.4 L686.1 188.5 L686.7 188.9 L687 189.4 L686.9 189.8 L686.5 190.2 L685.7 190.5 L683.3 191.4 M713.1 132.9 L715.4 132.1 L716.3 131.9 L717.2 131.8 L718.1 131.8 L718.9 132 L719.7 132.4 L767 158.5 L767.7 159 L767.9 159.4 L767.9 159.8 L767.5 160.2 L766.7 160.5 L764.4 161.4 M782.9 171.6 L785.2 170.7 L786.1 170.5 L787 170.4 L787.9 170.4 L788.7 170.6 L789.6 171 L839 198.4 L839.7 198.8 L840 199.3 L840 199.7 L839.6 200.1 L838.9 200.4 L836.5 201.3 M855.8 212 L858.1 211.1 L859.1 210.9 L860 210.7 L860.9 210.8 L861.8 211 L862.6 211.4 L914.4 240.1 L915.1 240.5 L915.5 241 L915.5 241.4 L915.1 241.9 L914.3 242.2 L912 243.2 M316.6 256.8 L296.9 263.8 L294.1 265 L292.5 266.4 L291.9 267.8 L292.5 269.2 L294.2 270.8 L364.6 319.5 L366.5 321.2 L367.1 322.8 L366.6 324.2 L365 325.6 L362.1 327 L341.9 334.5 M495.9 193 L477.7 199.5 L475.1 200.6 L473.6 201.8 L473.2 203.1 L473.9 204.5 L475.7 206 L548 251.2 L549.9 252.7 L550.7 254.2 L550.4 255.6 L548.9 256.9 L546.3 258.1 L527.6 265.1 M662.3 133.8 L645.4 139.8 L643 140.8 L641.7 142 L641.4 143.2 L642.2 144.5 L644.1 145.8 L717.8 187.9 L719.8 189.3 L720.7 190.7 L720.5 192 L719.2 193.2 L716.8 194.3 L699.5 200.8 M474.5 267.4 L455.4 274.5 L452.7 275.7 L451.1 277.1 L450.7 278.5 L451.5 280 L453.3 281.6 L528.2 330.8 L530.2 332.5 L531.1 334.1 L530.7 335.6 L529.1 337 L526.4 338.3 L506.8 346 M648.7 202.9 L631 209.5 L628.5 210.7 L627.1 211.9 L626.8 213.2 L627.7 214.6 L629.6 216 L706.1 261.7 L708.2 263.3 L709.1 264.7 L708.9 266.1 L707.5 267.5 L705 268.7 L686.9 275.8" fill="none" stroke="#0d96dc" stroke-width="1.55" stroke-linejoin="round"/>
<path d="M140.6 192.8 L195.9 174.6 M320.3 133.4 L371.7 116.4 M487.6 78.1 L535.5 62.3 M550.2 114.4 L598.5 97.8 M755.6 233.3 L805 214.2 M214.5 244.9 L270.6 225.4 M396.6 181.8 L448.6 163.8 M371.1 255.4 L425.6 235.7 M548.1 191.7 L598.7 173.5 M412.6 384.3 L470.4 361.7 M600.1 311.1 L653.5 290.3 M582.1 396.2 L638.1 373.4 M763.7 322.3 L815.4 301.2 M117.5 215.7 L114.9 216.5 L114 216.9 L113.4 217.3 L113.2 217.7 L113.4 218.1 L113.8 218.5 L154 247.5 L154.9 248 L155.8 248.3 L156.8 248.3 L157.9 248.2 L159.1 247.9 L162.2 246.8 M210.6 184.6 L208.1 185.4 L207.3 185.8 L206.7 186.1 L206.6 186.5 L206.7 186.9 L207.2 187.4 L248.1 215.3 L248.9 215.8 L249.9 216 L250.9 216.1 L251.9 216 L253.1 215.7 L256.1 214.6 M300.4 154.6 L297.9 155.4 L297.1 155.8 L296.7 156.1 L296.5 156.5 L296.7 156.9 L297.2 157.3 L338.7 184.3 L339.5 184.7 L340.5 185 L341.4 185 L342.5 184.9 L343.6 184.6 L346.5 183.6 M386.9 125.8 L384.6 126.5 L383.8 126.9 L383.3 127.2 L383.2 127.6 L383.4 128 L383.9 128.4 L426 154.4 L426.8 154.8 L427.8 155.1 L428.7 155.1 L429.7 155 L430.8 154.7 L433.6 153.8 M470.4 97.9 L468.1 98.7 L467.4 99 L467 99.3 L466.9 99.7 L467.1 100 L467.6 100.4 L510.2 125.6 L511 126 L511.9 126.2 L512.9 126.3 L513.9 126.2 L514.9 125.9 L517.6 125 M401.2 314.5 L398.6 315.5 L397.8 315.9 L397.3 316.3 L397.1 316.8 L397.3 317.2 L397.9 317.7 L445.1 350 L446 350.5 L447.1 350.8 L448.1 350.9 L449.3 350.7 L450.5 350.4 L453.6 349.2 M582.7 246.6 L580.3 247.5 L579.5 247.8 L579 248.2 L578.9 248.6 L579.2 249.1 L579.8 249.6 L628.1 279.4 L629.1 279.9 L630.1 280.2 L631.1 280.3 L632.2 280.1 L633.3 279.8 L636.2 278.7 M373.9 400.1 L371.1 401.2 L370.2 401.6 L369.7 402.1 L369.5 402.6 L369.8 403.1 L370.4 403.7 L419.3 439 L420.3 439.5 L421.3 439.9 L422.5 440 L423.7 439.8 L424.9 439.4 L428.2 438.1 M564.5 325.7 L562 326.7 L561.2 327.1 L560.7 327.5 L560.6 328 L560.9 328.5 L561.5 329 L611.7 361.6 L612.7 362.1 L613.7 362.4 L614.8 362.5 L615.9 362.3 L617.1 362 L620.1 360.8 M740.5 257 L738.2 258 L737.4 258.3 L737 258.7 L736.9 259.2 L737.2 259.6 L737.9 260.1 L789 290.3 L790 290.8 L791 291 L792.1 291.1 L793.1 291 L794.2 290.6 L797 289.5 M307.9 213.2 L310.5 212.3 L311.5 212 L312.5 211.9 L313.4 211.9 L314.2 212.1 L314.9 212.5 L358.3 241.4 L358.8 241.9 L359 242.3 L358.9 242.8 L358.4 243.2 L357.5 243.6 L354.8 244.5 M483.3 152.4 L485.7 151.6 L486.7 151.3 L487.6 151.2 L488.5 151.3 L489.3 151.5 L490 151.9 L534.5 178.7 L535.1 179.1 L535.3 179.6 L535.2 180 L534.7 180.4 L533.9 180.7 L531.5 181.6 M646.4 95.9 L648.7 95.2 L649.6 94.9 L650.4 94.8 L651.3 94.9 L652.1 95.1 L652.9 95.4 L698.1 120.5 L698.7 120.9 L699 121.3 L699 121.7 L698.5 122 L697.8 122.3 L695.5 123.2 M278 289.5 L280.7 288.5 L281.8 288.2 L282.8 288.1 L283.7 288.2 L284.6 288.4 L285.4 288.8 L330.1 320.2 L330.7 320.8 L330.9 321.3 L330.7 321.8 L330.2 322.2 L329.3 322.6 L326.5 323.7 M461.9 223.3 L464.5 222.4 L465.5 222.1 L466.4 222 L467.3 222.1 L468.2 222.3 L469 222.7 L514.9 251.8 L515.6 252.3 L515.8 252.8 L515.7 253.2 L515.2 253.7 L514.4 254 L511.8 255 M632.4 162 L634.8 161.1 L635.8 160.9 L636.7 160.7 L637.5 160.8 L638.4 161 L639.2 161.4 L686.1 188.5 L686.7 188.9 L687 189.4 L686.9 189.8 L686.5 190.2 L685.7 190.5 L683.3 191.4 M713.1 132.9 L715.4 132.1 L716.3 131.9 L717.2 131.8 L718.1 131.8 L718.9 132 L719.7 132.4 L767 158.5 L767.7 159 L767.9 159.4 L767.9 159.8 L767.5 160.2 L766.7 160.5 L764.4 161.4 M782.9 171.6 L785.2 170.7 L786.1 170.5 L787 170.4 L787.9 170.4 L788.7 170.6 L789.6 171 L839 198.4 L839.7 198.8 L840 199.3 L840 199.7 L839.6 200.1 L838.9 200.4 L836.5 201.3 M855.8 212 L858.1 211.1 L859.1 210.9 L860 210.7 L860.9 210.8 L861.8 211 L862.6 211.4 L914.4 240.1 L915.1 240.5 L915.5 241 L915.5 241.4 L915.1 241.9 L914.3 242.2 L912 243.2 M316.6 256.8 L296.9 263.8 L294.1 265 L292.5 266.4 L291.9 267.8 L292.5 269.2 L294.2 270.8 L364.6 319.5 L366.5 321.2 L367.1 322.8 L366.6 324.2 L365 325.6 L362.1 327 L341.9 334.5 M495.9 193 L477.7 199.5 L475.1 200.6 L473.6 201.8 L473.2 203.1 L473.9 204.5 L475.7 206 L548 251.2 L549.9 252.7 L550.7 254.2 L550.4 255.6 L548.9 256.9 L546.3 258.1 L527.6 265.1 M662.3 133.8 L645.4 139.8 L643 140.8 L641.7 142 L641.4 143.2 L642.2 144.5 L644.1 145.8 L717.8 187.9 L719.8 189.3 L720.7 190.7 L720.5 192 L719.2 193.2 L716.8 194.3 L699.5 200.8 M474.5 267.4 L455.4 274.5 L452.7 275.7 L451.1 277.1 L450.7 278.5 L451.5 280 L453.3 281.6 L528.2 330.8 L530.2 332.5 L531.1 334.1 L530.7 335.6 L529.1 337 L526.4 338.3 L506.8 346 M648.7 202.9 L631 209.5 L628.5 210.7 L627.1 211.9 L626.8 213.2 L627.7 214.6 L629.6 216 L706.1 261.7 L708.2 263.3 L709.1 264.7 L708.9 266.1 L707.5 267.5 L705 268.7 L686.9 275.8" fill="none" stroke="#003a5c" stroke-width="0.6" stroke-opacity=".55"/>
<path d="M109.1 206.6 L135.4 197.9 L138.2 199.9 L111.8 208.6Z M119.4 208.1 L145.7 199.3 L148.5 201.3 L122.2 210.1Z M168.1 249 L194.7 239.9 L197.7 241.9 L171 251.1Z M178.7 250.5 L205.3 241.3 L208.2 243.4 L181.6 252.6Z M230 293.5 L256.9 283.8 L260 286 L233 295.7Z M240.9 295 L267.8 285.4 L270.9 287.6 L243.9 297.2Z M294.9 340.1 L322.2 330 L325.4 332.3 L298.1 342.4Z M306.1 341.8 L333.4 331.6 L336.6 333.9 L309.4 344.1Z M363.2 389.2 L390.8 378.5 L394.1 380.9 L366.6 391.6Z M374.8 390.9 L402.3 380.2 L405.7 382.6 L378.1 393.3Z M435 440.8 L462.9 429.5 L466.4 432 L438.6 443.3Z M447 442.6 L474.7 431.3 L478.3 433.8 L450.5 445.1Z M201.9 175.9 L227.3 167.5 L230.1 169.4 L204.7 177.8Z M212.1 177.3 L237.4 168.8 L240.3 170.7 L214.9 179.2Z M262 216.8 L287.6 207.9 L290.6 209.9 L264.9 218.8Z M272.4 218.2 L298 209.4 L301 211.4 L275.4 220.2Z M324.9 259.6 L350.8 250.3 L353.9 252.4 L328 261.7Z M335.6 261.1 L361.5 251.8 L364.6 253.9 L338.8 263.2Z M390.9 304.5 L417.1 294.8 L420.3 296.9 L394.1 306.7Z M401.9 306.1 L428.1 296.3 L431.4 298.5 L405.2 308.3Z M460.2 351.6 L486.6 341.4 L490 343.7 L463.6 354Z M471.5 353.3 L497.9 343 L501.4 345.3 L475 355.6Z M533 401.2 L559.7 390.4 L563.3 392.8 L536.6 403.6Z M544.7 402.9 L571.4 392.1 L575 394.6 L548.3 405.4Z M291.4 146.2 L315.9 138.1 L318.7 140 L294.3 148.1Z M301.4 147.6 L325.9 139.5 L328.8 141.3 L304.3 149.4Z M352.4 185.7 L377.1 177.2 L380.1 179.1 L355.4 187.6Z M362.7 187.1 L387.4 178.6 L390.4 180.5 L365.7 189Z M416.2 227 L441.2 218.1 L444.3 220.1 L419.3 229Z M426.8 228.4 L451.7 219.5 L454.9 221.5 L430 230.5Z M483.1 270.2 L508.3 260.9 L511.6 263 L486.4 272.4Z M494 271.8 L519.1 262.4 L522.5 264.5 L497.3 273.9Z M553.2 315.6 L578.7 305.8 L582.1 308 L556.7 317.8Z M564.5 317.2 L589.8 307.3 L593.3 309.6 L568 319.4Z M626.9 363.2 L652.5 352.9 L656.2 355.2 L630.6 365.6Z M638.5 364.9 L664.1 354.6 L667.7 356.9 L642.1 367.3Z M377.7 117.7 L401.3 109.8 L404.2 111.6 L380.6 119.4Z M387.6 119 L411.2 111.1 L414.1 112.9 L390.5 120.7Z M439.5 155.7 L463.3 147.6 L466.4 149.4 L442.5 157.6Z M449.7 157.1 L473.5 148.9 L476.5 150.7 L452.7 159Z M504.1 195.6 L528.2 187 L531.3 188.9 L507.3 197.5Z M514.6 197 L538.6 188.4 L541.8 190.3 L517.8 198.9Z M571.8 237.3 L596 228.3 L599.4 230.3 L575.1 239.3Z M582.6 238.7 L606.8 229.7 L610.1 231.8 L585.9 240.8Z M642.7 281 L667.1 271.5 L670.6 273.6 L646.2 283.1Z M653.8 282.5 L678.2 273 L681.7 275.2 L657.3 284.7Z M717.1 326.8 L741.7 316.9 L745.4 319.1 L720.8 329.1Z M728.5 328.4 L753.1 318.5 L756.8 320.7 L732.2 330.7Z M460.9 90.1 L483.7 82.5 L486.7 84.2 L463.9 91.8Z M470.8 91.3 L493.5 83.8 L496.5 85.5 L473.7 93.1Z M523.5 126.9 L546.5 119 L549.5 120.8 L526.5 128.7Z M533.5 128.2 L556.5 120.3 L559.6 122.1 L536.6 130Z M588.8 165.3 L612 157.1 L615.2 158.9 L592 167.2Z M599.2 166.7 L622.3 158.4 L625.5 160.3 L602.4 168.6Z M657.2 205.5 L680.5 196.9 L683.9 198.8 L660.5 207.5Z M667.8 207 L691.1 198.3 L694.5 200.2 L671.2 209Z M728.7 247.7 L752.2 238.6 L755.8 240.6 L732.3 249.7Z M739.7 249.1 L763.1 240 L766.7 242.1 L743.2 251.2Z M803.8 291.8 L827.4 282.2 L831.1 284.4 L807.5 294Z M815 293.4 L838.6 283.8 L842.3 285.9 L818.7 295.5Z M541.3 63.4 L563.4 56.1 L566.3 57.8 L544.3 65.1Z M551 64.7 L573 57.3 L576 59 L554 66.3Z M604.5 99 L626.7 91.4 L629.8 93.1 L607.6 100.8Z M614.5 100.3 L636.6 92.6 L639.7 94.4 L617.6 102Z M670.5 136.2 L692.8 128.2 L696.1 130 L673.7 138Z M680.7 137.5 L703 129.5 L706.3 131.3 L683.9 139.3Z M739.4 175 L761.9 166.6 L765.3 168.5 L742.8 176.9Z M749.9 176.4 L772.4 168 L775.8 169.9 L753.3 178.3Z M811.5 215.6 L834.2 206.8 L837.7 208.8 L815.1 217.6Z M822.3 217 L844.9 208.3 L848.5 210.2 L825.9 219Z M887.1 258.1 L909.8 248.9 L913.6 251 L890.8 260.2Z M898.2 259.6 L920.9 250.4 L924.6 252.5 L901.9 261.7Z" fill="#6e6600" stroke="#5a5400" stroke-width="0.4"/>
<path d="M113.1 211 L117.9 210 M139.6 198 L144.4 197 M144 205 L147.8 203.7 M123.5 210 L123.5 213 M134.1 198 L134.1 195 M172.4 253.6 L177.3 252.6 M199 239.9 L203.9 238.9 M203.8 247.3 L207.6 246 M182.9 252.5 L183.1 255.7 M193.4 239.9 L193.2 236.8 M234.5 298.3 L239.5 297.2 M261.3 283.9 L266.3 282.8 M266.5 291.6 L270.3 290.2 M245.3 297.2 L245.6 300.5 M255.6 283.9 L255.3 280.6 M299.7 345.2 L304.8 344 M326.7 330.1 L331.7 328.9 M332.2 338.2 L336.1 336.7 M310.7 344 L311.2 347.5 M320.8 330.1 L320.4 326.6 M368.3 394.5 L373.5 393.3 M395.4 378.6 L400.5 377.3 M401.4 387.1 L405.3 385.5 M379.5 393.2 L380.1 396.9 M389.4 378.6 L388.8 375 M440.5 446.4 L445.7 445.1 M467.6 429.6 L472.8 428.3 M474.1 438.5 L478 436.9 M452 445 L452.7 448.9 M461.5 429.6 L460.7 425.8 M206.1 180.1 L210.8 179.1 M231.4 167.5 L236.1 166.6 M236.1 174.3 L239.7 173.1 M216.2 179.1 L216.4 182 M226 167.5 L225.8 164.7 M266.4 221.2 L271.1 220.2 M291.8 208 L296.6 207 M296.9 215.1 L300.5 213.8 M276.7 220.2 L277 223.2 M286.3 208 L286 205 M329.6 264.2 L334.4 263.1 M355.1 250.4 L359.9 249.3 M360.5 257.8 L364.2 256.5 M340.1 263.1 L340.5 266.3 M349.5 250.4 L349 247.2 M395.8 309.3 L400.7 308.2 M421.5 294.8 L426.3 293.7 M427.3 302.6 L431 301.2 M406.5 308.2 L407.1 311.6 M415.7 294.8 L415.1 291.5 M465.4 356.7 L470.4 355.6 M491.1 341.5 L496.1 340.3 M497.4 349.6 L501.2 348.2 M476.4 355.5 L477.1 359.1 M485.2 341.5 L484.5 338 M538.6 406.6 L543.6 405.3 M564.3 390.5 L569.3 389.2 M571.1 399.1 L574.9 397.5 M549.7 405.3 L550.6 409 M558.3 390.5 L557.4 386.8 M295.7 150.3 L300.2 149.4 M319.9 138.2 L324.4 137.3 M324.8 144.7 L328.3 143.5 M305.6 149.4 L305.9 152.2 M314.6 138.2 L314.3 135.4 M356.9 189.9 L361.5 189 M381.2 177.2 L385.8 176.3 M386.5 184.1 L390 182.9 M367 189 L367.5 191.9 M375.8 177.3 L375.3 174.4 M421 231.4 L425.7 230.4 M445.4 218.1 L450 217.1 M451.1 225.3 L454.6 224 M431.3 230.4 L431.9 233.5 M439.9 218.1 L439.3 215.1 M488.2 274.9 L492.9 273.8 M512.6 260.9 L517.3 259.9 M518.7 268.4 L522.3 267.1 M498.6 273.8 L499.4 277.1 M507 260.9 L506.2 257.8 M558.6 320.5 L563.5 319.4 M583.1 305.8 L587.9 304.7 M589.6 313.7 L593.2 312.3 M569.3 319.4 L570.2 322.8 M577.3 305.8 L576.4 302.5 M632.7 368.4 L637.6 367.2 M657.1 353 L661.9 351.8 M664.1 361.2 L667.7 359.7 M643.5 367.2 L644.6 370.8 M651.2 353 L650.1 349.5 M382.1 121.6 L386.5 120.7 M405.3 109.9 L409.6 109 M410.4 116.2 L413.8 115.1 M391.7 120.7 L392.2 123.4 M400.1 109.9 L399.6 107.2 M444.2 159.9 L448.6 158.9 M467.4 147.6 L471.8 146.7 M472.9 154.2 L476.3 153 M454 158.9 L454.6 161.8 M462.1 147.6 L461.5 144.8 M509.1 199.9 L513.6 198.9 M532.3 187 L536.8 186.1 M538.2 193.9 L541.6 192.7 M519 198.9 L519.8 201.9 M526.9 187.1 L526.2 184.1 M577 241.8 L581.6 240.7 M600.3 228.3 L604.8 227.3 M606.6 235.5 L610 234.3 M587.2 240.7 L588.1 243.8 M594.7 228.3 L593.9 225.3 M648.2 285.7 L652.9 284.6 M671.5 271.6 L676.1 270.5 M678.3 279.1 L681.7 277.8 M658.6 284.6 L659.6 287.9 M665.8 271.6 L664.8 268.4 M723 331.8 L727.7 330.6 M746.2 316.9 L750.9 315.8 M753.4 324.9 L756.9 323.5 M733.5 330.6 L734.7 334.1 M740.4 316.9 L739.2 313.6 M465.5 93.9 L469.8 93 M487.6 82.6 L491.9 81.7 M493 88.7 L496.3 87.6 M474.9 93 L475.5 95.6 M482.6 82.6 L481.9 80 M528.3 130.8 L532.6 129.9 M550.4 119 L554.8 118.1 M556.2 125.4 L559.5 124.3 M537.8 129.9 L538.6 132.7 M545.3 119 L544.5 116.3 M593.9 169.5 L598.3 168.5 M616.1 157.1 L620.4 156.2 M622.2 163.8 L625.5 162.6 M603.6 168.5 L604.5 171.4 M610.8 157.1 L609.9 154.3 M662.5 209.9 L667 208.9 M684.7 196.9 L689.1 195.9 M691.2 203.9 L694.5 202.6 M672.4 208.9 L673.4 211.9 M679.3 196.9 L678.3 194 M734.4 252.2 L738.9 251.2 M756.5 238.6 L761 237.6 M763.5 245.9 L766.8 244.6 M744.5 251.2 L745.7 254.3 M751 238.6 L749.8 235.5 M809.7 296.6 L814.3 295.5 M831.8 282.3 L836.3 281.2 M839.3 290 L842.6 288.6 M820 295.5 L821.4 298.8 M826.1 282.3 L824.8 279.1 M546 67.1 L550.2 66.3 M567.2 56.2 L571.3 55.4 M572.8 62.1 L575.9 61 M555.2 66.3 L555.9 68.8 M562.2 56.2 L561.5 53.7 M609.4 102.9 L613.6 102 M630.6 91.4 L634.8 90.6 M636.6 97.6 L639.7 96.5 M618.8 102 L619.6 104.6 M625.5 91.4 L624.7 88.8 M675.6 140.2 L679.9 139.3 M696.8 128.2 L701.1 127.3 M703.2 134.7 L706.3 133.5 M685.2 139.3 L686.1 142 M691.6 128.2 L690.6 125.5 M744.9 179.2 L749.2 178.2 M766 166.7 L770.3 165.7 M772.7 173.4 L775.9 172.2 M754.5 178.2 L755.7 181.1 M760.7 166.7 L759.6 163.8 M817.3 220 L821.7 219 M838.4 206.9 L842.7 205.9 M845.5 213.9 L848.8 212.7 M827.2 219 L828.4 222 M832.9 206.9 L831.7 203.9 M893.1 262.7 L897.6 261.7 M914.1 249 L918.5 248 M921.8 256.4 L925 255.1 M903.2 261.7 L904.6 264.9 M908.6 249 L907.1 245.9" fill="none" stroke="#6b6400" stroke-width="0.8"/>
<path d="M121.2 201.5 L136.3 196.6 M121.3 211.4 L136.4 206.4 M180.4 243.7 L195.5 238.4 M180.8 254.1 L196 248.8 M242.3 287.8 L257.7 282.4 M243.1 298.8 L258.6 293.2 M307.4 334.2 L322.9 328.4 M308.6 345.7 L324.2 339.8 M375.8 382.9 L391.4 376.8 M377.4 395 L393.2 388.8 M447.7 434.2 L463.5 427.8 M449.9 446.9 L465.8 440.4 M213.6 171 L228 166.2 M214.2 180.5 L228.7 175.7 M273.7 211.6 L288.3 206.6 M274.7 221.6 L289.4 216.5 M336.7 254.2 L351.5 248.9 M338.1 264.7 L352.9 259.3 M402.8 298.8 L417.7 293.2 M404.5 309.8 L419.5 304.2 M472.1 345.6 L487.2 339.8 M474.4 357.2 L489.5 351.3 M545 394.9 L560.2 388.7 M547.8 407.1 L563.1 400.9 M302.6 141.5 L316.5 136.9 M303.6 150.7 L317.7 146.1 M363.6 180.7 L377.7 175.9 M365.1 190.4 L379.2 185.5 M427.5 221.7 L441.8 216.7 M429.4 231.9 L443.7 226.7 M494.5 264.7 L508.8 259.4 M496.7 275.4 L511.2 270 M564.7 309.8 L579.2 304.2 M567.4 321 L582 315.3 M638.4 357.2 L653 351.3 M641.7 368.9 L656.3 362.9 M388.4 113.1 L401.9 108.6 M389.9 122 L403.4 117.5 M450.3 150.9 L463.9 146.3 M452.2 160.3 L465.8 155.5 M515 190.5 L528.7 185.7 M517.3 200.3 L531 195.4 M582.7 232 L596.5 226.9 M585.4 242.2 L599.3 237 M653.6 275.4 L667.6 270 M656.9 286.2 L670.8 280.7 M728.1 321 L742.1 315.3 M731.8 332.3 L745.9 326.5 M471.3 85.6 L484.3 81.3 M473.2 94.3 L486.2 89.9 M533.8 122.2 L546.9 117.7 M536.1 131.2 L549.3 126.7 M599.2 160.5 L612.4 155.8 M601.9 169.9 L615.2 165.1 M667.6 200.5 L680.9 195.5 M670.8 210.3 L684.1 205.3 M739.2 242.3 L752.6 237.1 M742.9 252.7 L756.3 247.4 M814.2 286.2 L827.7 280.8 M818.4 297 L832 291.5 M551.3 59.2 L563.8 55 M553.6 67.5 L566.2 63.3 M614.5 94.5 L627.1 90.2 M617.2 103.2 L629.9 98.8 M680.5 131.5 L693.2 126.9 M683.6 140.6 L696.4 136 M749.4 170.1 L762.2 165.3 M753 179.6 L765.9 174.8 M821.6 210.5 L834.5 205.5 M825.6 220.4 L838.6 215.4 M897.1 252.8 L910.1 247.5 M901.7 263.2 L914.7 257.9" fill="none" stroke="#645c00" stroke-width="2.2" stroke-dasharray="0.9 1.2"/>
<path d="M123.8 203.8 L128 202.4 L129.5 203.4 L125.2 204.8Z M129.1 204.2 L132.9 202.9 L134.3 204 L130.6 205.2Z M183 246.1 L187.3 244.6 L188.8 245.7 L184.6 247.1Z M188.5 246.4 L192.3 245.1 L193.8 246.2 L190 247.5Z M245.2 290.4 L249.5 288.8 L251.1 289.9 L246.8 291.5Z M250.8 290.7 L254.6 289.4 L256.2 290.5 L252.4 291.9Z M310.4 336.9 L314.8 335.2 L316.4 336.4 L312.1 338Z M316.1 337.3 L320 335.8 L321.7 337 L317.8 338.4Z M378.9 385.7 L383.3 384 L385.1 385.2 L380.7 387Z M384.8 386.1 L388.8 384.6 L390.5 385.9 L386.6 387.4Z M451 437.1 L455.5 435.3 L457.3 436.6 L452.9 438.4Z M457.1 437.6 L461.1 435.9 L462.9 437.3 L459 438.9Z M216.2 173.2 L220.3 171.8 L221.7 172.8 L217.7 174.2Z M221.4 173.5 L225 172.3 L226.5 173.3 L222.9 174.5Z M276.5 213.9 L280.6 212.5 L282.1 213.5 L278 215Z M281.8 214.3 L285.5 213 L287.1 214 L283.4 215.3Z M339.6 256.6 L343.8 255.1 L345.4 256.2 L341.2 257.7Z M345.1 257 L348.8 255.6 L350.4 256.7 L346.8 258Z M405.8 301.3 L410.1 299.8 L411.7 300.9 L407.5 302.5Z M411.5 301.7 L415.2 300.3 L416.9 301.5 L413.2 302.9Z M475.4 348.3 L479.6 346.7 L481.4 347.9 L477.1 349.5Z M481.2 348.7 L484.9 347.3 L486.7 348.5 L483 349.9Z M548.4 397.7 L552.7 396 L554.6 397.2 L550.3 399Z M554.4 398.1 L558.2 396.6 L560.1 397.8 L556.3 399.4Z M305.3 143.6 L309.2 142.3 L310.7 143.3 L306.7 144.6Z M310.4 144 L313.9 142.8 L315.4 143.8 L311.9 144.9Z M366.4 182.9 L370.4 181.6 L372 182.6 L368 183.9Z M371.7 183.3 L375.3 182.1 L376.8 183.1 L373.3 184.3Z M430.5 224.1 L434.5 222.7 L436.1 223.7 L432.1 225.1Z M435.9 224.4 L439.5 223.2 L441.1 224.2 L437.6 225.5Z M497.6 267.2 L501.6 265.7 L503.4 266.8 L499.3 268.3Z M503.2 267.6 L506.7 266.2 L508.5 267.3 L504.9 268.7Z M568 312.4 L572.1 310.8 L573.9 312 L569.8 313.6Z M573.7 312.8 L577.3 311.4 L579.1 312.6 L575.5 314Z M641.9 359.9 L646 358.2 L647.9 359.4 L643.8 361.1Z M647.7 360.3 L651.4 358.8 L653.3 360 L649.6 361.5Z M391.1 115.1 L394.9 113.9 L396.5 114.8 L392.7 116.1Z M396.2 115.5 L399.6 114.3 L401.1 115.3 L397.7 116.4Z M453.2 153.1 L457 151.8 L458.6 152.8 L454.7 154.1Z M458.4 153.4 L461.8 152.3 L463.3 153.2 L459.9 154.4Z M518 192.8 L521.9 191.4 L523.5 192.4 L519.7 193.8Z M523.3 193.1 L526.8 191.9 L528.4 192.9 L525 194.2Z M585.9 234.4 L589.8 232.9 L591.5 234 L587.6 235.4Z M591.3 234.7 L594.8 233.4 L596.5 234.5 L593.1 235.8Z M657 277.9 L660.9 276.4 L662.7 277.5 L658.8 279Z M662.6 278.3 L666.1 276.9 L667.9 278 L664.4 279.4Z M731.6 323.6 L735.6 322 L737.5 323.2 L733.5 324.8Z M737.4 324 L740.9 322.6 L742.8 323.7 L739.3 325.2Z M474 87.6 L477.7 86.4 L479.2 87.3 L475.6 88.5Z M479 88 L482.3 86.9 L483.8 87.8 L480.6 88.9Z M536.8 124.3 L540.5 123.1 L542.1 124 L538.4 125.3Z M541.9 124.7 L545.2 123.5 L546.8 124.5 L543.5 125.6Z M602.3 162.7 L606 161.3 L607.7 162.3 L604 163.6Z M607.5 163 L610.8 161.8 L612.5 162.8 L609.2 164Z M670.8 202.7 L674.6 201.4 L676.3 202.4 L672.6 203.8Z M676.2 203.1 L679.5 201.9 L681.3 202.9 L678 204.1Z M742.6 244.7 L746.4 243.3 L748.2 244.3 L744.4 245.8Z M748.1 245.1 L751.5 243.8 L753.3 244.9 L750 246.2Z M817.8 288.7 L821.6 287.2 L823.5 288.3 L819.7 289.8Z M823.5 289.1 L826.8 287.7 L828.8 288.9 L825.4 290.2Z M554.1 61.1 L557.6 59.9 L559.2 60.8 L555.6 62Z M559 61.4 L562.2 60.4 L563.7 61.2 L560.6 62.3Z M617.4 96.6 L621 95.3 L622.6 96.2 L619.1 97.5Z M622.5 96.9 L625.6 95.8 L627.3 96.7 L624.1 97.8Z M683.6 133.6 L687.2 132.3 L688.9 133.3 L685.3 134.5Z M688.7 133.9 L691.9 132.8 L693.6 133.7 L690.4 134.9Z M752.7 172.3 L756.3 170.9 L758.1 171.9 L754.5 173.3Z M758 172.6 L761.2 171.4 L763 172.4 L759.8 173.6Z M825 212.8 L828.6 211.4 L830.5 212.4 L826.9 213.8Z M830.4 213.1 L833.7 211.9 L835.5 212.9 L832.3 214.2Z M900.7 255.2 L904.4 253.7 L906.3 254.8 L902.7 256.3Z M906.3 255.5 L909.5 254.2 L911.5 255.3 L908.2 256.6Z" fill="#f2e60a"/>
<path d="M98.4 202 L136 189.6 L159.3 206 L121.5 218.6Z M157 244.1 L195 231.1 L219.4 248.3 L181.3 261.6Z M218.5 288.3 L256.9 274.7 L282.5 292.7 L243.9 306.6Z M283 334.7 L321.8 320.4 L348.7 339.3 L309.7 353.9Z M350.8 383.5 L390 368.4 L418.3 388.3 L378.8 403.7Z M422.1 434.8 L461.7 418.9 L491.5 439.8 L451.6 456.1Z M191.2 171.4 L227.4 159.4 L251.1 175.3 L214.8 187.4Z M250.9 212 L287.4 199.5 L312.2 216.1 L275.5 228.8Z M313.4 254.6 L350.3 241.5 L376.3 258.9 L339.2 272.2Z M378.9 299.3 L416.2 285.5 L443.5 303.7 L406 317.8Z M447.7 346.2 L485.4 331.7 L514 350.8 L476.2 365.6Z M520 395.5 L558 380.2 L588.1 400.3 L549.9 415.9Z M280.7 141.9 L315.5 130.4 L339.6 145.7 L304.6 157.4Z M341.3 181.1 L376.5 169.1 L401.6 185.1 L366.3 197.3Z M404.7 222.2 L440.2 209.6 L466.6 226.3 L430.9 239.2Z M471.1 265.2 L507 252 L534.6 269.5 L498.6 283Z M540.8 310.3 L577 296.4 L605.9 314.8 L569.6 329Z M613.9 357.7 L650.4 343.1 L680.9 362.4 L644.2 377.4Z M366.9 113.4 L400.6 102.4 L425 117.1 L391.2 128.4Z M428.4 151.3 L462.3 139.7 L487.8 155.1 L453.7 167Z M492.6 191 L526.8 178.8 L553.5 194.9 L519.1 207.3Z M559.8 232.4 L594.3 219.7 L622.2 236.6 L587.6 249.6Z M630.2 275.9 L665.1 262.5 L694.3 280.2 L659.4 293.9Z M704.1 321.5 L739.2 307.4 L769.9 326 L734.7 340.4Z M450.2 86 L482.7 75.3 L507.3 89.6 L474.7 100.5Z M512.3 122.6 L545.1 111.4 L570.8 126.3 L538 137.7Z M577.3 160.9 L610.3 149.1 L637.2 164.7 L604.1 176.7Z M645.2 200.9 L678.5 188.6 L706.6 204.9 L673.2 217.4Z M716.3 242.8 L749.8 229.9 L779.3 247 L745.7 260.1Z M790.8 286.7 L824.5 273.2 L855.4 291 L821.6 304.9Z M530.6 59.5 L562 49.1 L586.9 62.9 L555.4 73.5Z M593.4 94.9 L625 84.1 L651 98.5 L619.3 109.5Z M658.9 131.9 L690.8 120.6 L717.9 135.6 L686 147.1Z M727.4 170.5 L759.5 158.6 L787.9 174.4 L755.7 186.4Z M799.1 210.9 L831.4 198.5 L861 214.9 L828.7 227.6Z M874.2 253.2 L906.6 240.2 L937.7 257.4 L905.2 270.7Z" fill="none" stroke="#0d9be0" stroke-width="1.05"/>
<g fill="#18a8f0"><circle cx="141.4" cy="212.7" r="1.3"/><circle cx="201.3" cy="255.4" r="1.3"/><circle cx="264.2" cy="300.1" r="1.3"/><circle cx="330.3" cy="347.1" r="1.3"/><circle cx="399.7" cy="396.5" r="1.3"/><circle cx="472.7" cy="448.5" r="1.3"/><circle cx="233.9" cy="181.7" r="1.3"/><circle cx="294.9" cy="222.9" r="1.3"/><circle cx="358.8" cy="266" r="1.3"/><circle cx="425.8" cy="311.2" r="1.3"/><circle cx="496.2" cy="358.7" r="1.3"/><circle cx="570.2" cy="408.6" r="1.3"/><circle cx="323.1" cy="151.9" r="1.3"/><circle cx="385" cy="191.6" r="1.3"/><circle cx="449.8" cy="233.1" r="1.3"/><circle cx="517.7" cy="276.7" r="1.3"/><circle cx="588.9" cy="322.4" r="1.3"/><circle cx="663.7" cy="370.4" r="1.3"/><circle cx="409" cy="123.1" r="1.3"/><circle cx="471.7" cy="161.5" r="1.3"/><circle cx="537.3" cy="201.5" r="1.3"/><circle cx="606" cy="243.5" r="1.3"/><circle cx="678" cy="287.5" r="1.3"/><circle cx="753.5" cy="333.7" r="1.3"/><circle cx="492" cy="95.4" r="1.3"/><circle cx="555.4" cy="132.4" r="1.3"/><circle cx="621.7" cy="171.1" r="1.3"/><circle cx="691" cy="211.6" r="1.3"/><circle cx="763.6" cy="254" r="1.3"/><circle cx="839.7" cy="298.4" r="1.3"/><circle cx="572.1" cy="68.6" r="1.3"/><circle cx="636.1" cy="104.4" r="1.3"/><circle cx="703" cy="141.7" r="1.3"/><circle cx="772.9" cy="180.8" r="1.3"/><circle cx="846" cy="221.7" r="1.3"/><circle cx="922.6" cy="264.5" r="1.3"/></g>
</svg></div>

<!-- RIGHT PANEL -->
<div class="hdr" style="left:1443px;top:43px;width:157px"></div>
<div class="tx" id="t18" style="left:1447.0px;top:47.0px;font-size:10.8px;">Differences From Sche...</div>
<svg class="abs" style="left:1564px;top:45px" width="34" height="14" viewBox="0 0 34 14"><g fill="none" stroke="#222" stroke-width="1.100"><path d="M3 5.500h5v4.500h-5zM3 6.600h5"/><path d="M5 5.500v-2.500h5v4.500h-2M5 4.100h5"/><path d="M22.500 4l5.800 5.800M28.300 4l-5.800 5.800" stroke-width="1.500"/></g></svg>
<div class="abs" style="left:1443px;top:60px;width:157px;height:20px;background:#fff"></div>
<div class="tx" id="t19" style="left:1449.0px;top:66.0px;font-size:11.3px;transform:scaleX(1.0139);">Update</div>
<svg class="abs" style="left:1497px;top:62px" width="100" height="18" viewBox="0 0 100 18">
<g transform="translate(8.500 8.300)"><g fill="#3f72d0"><circle r="4.600"/><rect x="-1.300" y="-6.200" width="2.600" height="12.400"/><rect x="-1.300" y="-6.200" width="2.600" height="12.400" transform="rotate(45)"/><rect x="-1.300" y="-6.200" width="2.600" height="12.400" transform="rotate(90)"/><rect x="-1.300" y="-6.200" width="2.600" height="12.400" transform="rotate(135)"/></g><circle r="2.500" fill="#fff"/></g>
<g transform="translate(29.500 2)"><rect x="0" y="0" width="12" height="12" rx="1" fill="#1f3fd0"/><rect x="2.500" y="1" width="7" height="4.500" fill="#f4f6ff"/><rect x="3" y="8" width="6" height="4" fill="#cfd6f5"/><rect x="4" y="9" width="2" height="3" fill="#1f3fd0"/></g>
<g transform="translate(56 2)"><path d="M3.500 6l1.500-5.500h4.500l2 5.500" fill="#fff" stroke="#8898b8" stroke-width=".8"/><rect x="0.500" y="6" width="12.500" height="4.500" rx="1" fill="#8aa4cc"/><rect x="2" y="9" width="9.500" height="3" fill="#5a78b0"/><rect x="10" y="7" width="1.500" height="1" fill="#e8d040"/></g>
<g transform="translate(83.500 2)"><rect x="0" y="0" width="12" height="12" fill="#e8ecfa" stroke="#6a76d8" stroke-width="1"/><rect x="0" y="0" width="12" height="2.500" fill="#d04060"/><path d="M0 5.500h12M0 8.700h12M8 2.500v9.500" stroke="#6a76d8" stroke-width="1" fill="none"/><rect x="1" y="6.200" width="6" height="2" fill="#fff"/></g>
</svg>
<div class="box" style="left:1443px;top:85px;width:158px;height:187px;border-color:#858a92"></div>
<div class="tx" id="t20" style="left:1504.0px;top:92.6px;font-size:11px;transform:scaleX(0.9324);">Results</div>
<div class="abs" style="left:1481px;top:282px;width:119px;height:18px;background:#fff"></div>
<div class="abs" style="left:1445px;top:282px;width:37px;height:17px;background:#f0f0f0;border:1px solid #d9d9d9;border-top:none"></div>
<div class="tx" id="t21" style="left:1454.5px;top:286.8px;font-size:9.6px;transform:scaleX(1.0312);">Info</div>
<div class="tx" id="t22" style="left:1495.5px;top:287.1px;font-size:9.6px;transform:scaleX(1.0111);">Differences From S...</div>
<div class="hdr" style="left:1443px;top:305px;width:157px"></div>
<div class="tx" id="t23" style="left:1447.0px;top:309.2px;font-size:11px;">Properties</div>
<svg class="abs" style="left:1563px;top:307px" width="34" height="14" viewBox="0 0 34 14"><g fill="none" stroke="#222" stroke-width="1.100"><path d="M3.500 5.500h5v4.500h-5zM3.500 6.600h5"/><path d="M5.500 5.500v-2.500h5v4.500h-2M5.500 4.100h5"/><path d="M23 4l5.800 5.800M28.800 4l-5.800 5.800" stroke-width="1.500"/></g></svg>
<div class="abs" style="left:1443px;top:322px;width:157px;height:21px;background:#fff"></div>
<svg class="abs" style="left:1449px;top:325px" width="46" height="16" viewBox="0 0 46 16">
<g transform="translate(8 8)"><g fill="#3f72d0"><circle r="4.300"/><rect x="-1.200" y="-5.900" width="2.400" height="11.800"/><rect x="-1.200" y="-5.900" width="2.400" height="11.800" transform="rotate(45)"/><rect x="-1.200" y="-5.900" width="2.400" height="11.800" transform="rotate(90)"/><rect x="-1.200" y="-5.900" width="2.400" height="11.800" transform="rotate(135)"/></g><circle r="2.400" fill="#fff"/></g>
<circle cx="34.600" cy="8" r="6" fill="#2a35e8"/><circle cx="33.600" cy="6.500" r="3.500" fill="#5a66ff" opacity=".5"/><text x="34.600" y="11.300" text-anchor="middle" font-family="Liberation Sans,sans-serif" font-size="9.500" font-weight="bold" fill="#fff">?</text></svg>
<div class="box" style="left:1443px;top:347px;width:158px;height:160px;border-color:#858a92"></div>
<div class="tx" id="t24" style="left:1448.0px;top:355.5px;font-size:11.2px;transform:scaleX(0.9952);">Property</div>
<div class="tx" id="t25" style="left:1541.5px;top:355.5px;font-size:11.2px;transform:scaleX(0.9571);">Value</div>
<div class="abs" style="left:1537px;top:348px;width:1px;height:23px;background:#e2e2e2"></div>
<div class="sb" style="left:1444px;top:491px;width:156px;height:15px"></div>
<div class="thumb" style="left:1460px;top:492px;width:68px;height:13px"></div>
<svg class="abs" style="left:1444px;top:491px" width="156" height="15" viewBox="0 0 156 15"><path d="M10 4l-3.500 3.500L10 11M146 4l3.500 3.500L146 11" fill="none" stroke="#444" stroke-width="1.300"/></svg>
<div class="hdr" style="left:1443px;top:512px;width:157px"></div>
<div class="tx" id="t26" style="left:1447.0px;top:516.2px;font-size:11px;">Command Quick Help ...</div>
<svg class="abs" style="left:1563px;top:514px" width="34" height="14" viewBox="0 0 34 14"><rect width="34" height="14" fill="#d9d9d9"/><g fill="none" stroke="#222" stroke-width="1.100"><path d="M3.500 5.500h5v4.500h-5zM3.500 6.600h5"/><path d="M5.500 5.500v-2.500h5v4.500h-2M5.500 4.100h5"/><path d="M23 4l5.800 5.800M28.800 4l-5.800 5.800" stroke-width="1.500"/></g></svg>
<div class="abs" style="left:1452px;top:538px;width:140px;height:77px;background:#fff"></div>
<svg class="abs" style="left:1458px;top:541px" width="14" height="14" viewBox="0 0 14 14"><g transform="translate(7 7)"><g fill="#3f72d0"><circle r="3.800"/><rect x="-1.100" y="-5.400" width="2.200" height="10.800"/><rect x="-1.100" y="-5.400" width="2.200" height="10.800" transform="rotate(45)"/><rect x="-1.100" y="-5.400" width="2.200" height="10.800" transform="rotate(90)"/><rect x="-1.100" y="-5.400" width="2.200" height="10.800" transform="rotate(135)"/></g><circle r="2.100" fill="#fff"/></g></svg>
<div class="box" style="left:1451px;top:620px;width:141px;height:144px;border-color:#858a92"></div>
<div class="abs" style="left:1452px;top:621px;width:124px;height:128px;overflow:hidden;background:#fff">
<div class="tx" id="t27" style="left:3.6px;top:3.5px;font-size:10.7px;transform:scaleX(0.9050);color:#333"><b>Click</b> and <b>drag</b> to select vertices or edges</div>
<div class="tx" id="t28" style="left:3.6px;top:15.5px;font-size:10.7px;transform:scaleX(0.9050);color:#333">Press <b>V</b> for combined vertex and edge selection</div>
<div class="tx" id="t29" style="left:3.6px;top:27.5px;font-size:10.7px;transform:scaleX(0.9050);color:#333">Press and hold <b>Ctrl</b>, then Click to toggle</div>
<div class="tx" id="t30" style="left:3.6px;top:39.5px;font-size:10.7px;transform:scaleX(0.9050);color:#333">Press and hold <b>Shift</b>, then Click to add</div>
<div class="tx" id="t31" style="left:3.6px;top:63.5px;font-size:10.7px;transform:scaleX(0.9050);color:#333">Press <b>M</b> to Move an object using ref</div>
<div class="tx" id="t32" style="left:3.6px;top:75.5px;font-size:10.7px;transform:scaleX(0.9050);color:#333">Press <b>Space</b> to Select the next object</div>
<div class="tx" id="t33" style="left:3.6px;top:87.5px;font-size:10.7px;transform:scaleX(0.9050);color:#333">Press <b>Shift+Space</b> to Select previous</div>
<div class="tx" id="t34" style="left:3.6px;top:99.5px;font-size:10.7px;transform:scaleX(0.9050);color:#333">Press <b>C</b> to Copy an object using ref</div>
<div class="tx" id="t35" style="left:3.6px;top:111.5px;font-size:10.7px;transform:scaleX(0.9050);color:#333">Press <b>Ctrl+R</b> to Rotate an object</div>
<div class="tx" id="t36" style="left:3.6px;top:123.5px;font-size:10.7px;transform:scaleX(0.9050);color:#333">Press <b>Shift+M</b> to Mirror an object</div>
</div>
<div class="sb" style="left:1576px;top:621px;width:15px;height:128px"></div>
<div class="thumb" style="left:1577px;top:638px;width:13px;height:67px"></div>
<svg class="abs" style="left:1576px;top:621px" width="15" height="128" viewBox="0 0 15 128"><path d="M4 10.500l3.500-3.500L11 10.500M4 117l3.500 3.500L11 117" fill="none" stroke="#444" stroke-width="1.300"/></svg>
<div class="sb" style="left:1452px;top:749px;width:139px;height:14px"></div>
<div class="thumb" style="left:1468px;top:750px;width:34px;height:13px"></div>
<svg class="abs" style="left:1452px;top:749px" width="139" height="14" viewBox="0 0 139 14"><path d="M9.500 3.500l-3.500 3.500L9.500 10.500M113.500 3.500l3.500 3.500L113.500 10.500" fill="none" stroke="#444" stroke-width="1.300"/></svg>
<div class="abs" style="left:1451px;top:771px;width:13px;height:13px;background:#fff;border:1px solid #6e6e6e;border-radius:1.5px"></div>
<div class="abs" style="left:1468px;top:770px;width:123px;height:16px;overflow:hidden"><div class="tx" id="t37" style="left:0.0px;top:1.3px;font-size:10.7px;transform:scaleX(0.9050);color:#222">Don't show this window for Select</div></div>

<!-- MESSAGE LIST -->
<div class="abs" style="left:0;top:797px;width:1600px;height:1px;background:#e6e6e6"></div>
<div class="hdr" style="left:0;top:798px;width:1600px;height:18px"></div>
<div class="tx" id="t38" style="left:4.6px;top:801.5px;font-size:11.3px;transform:scaleX(0.9602);">Message List - 0 errors, 0 warnings</div>
<svg class="abs" style="left:1563px;top:800px" width="34" height="14" viewBox="0 0 34 14"><g fill="none" stroke="#222" stroke-width="1.100"><path d="M3.500 5.500h5v4.500h-5zM3.500 6.600h5"/><path d="M5.500 5.500v-2.500h5v4.500h-2M5.500 4.100h5"/><path d="M23 4l5.800 5.800M28.800 4l-5.800 5.800" stroke-width="1.500"/></g></svg>
<svg class="abs" style="left:4px;top:818px" width="18" height="40" viewBox="0 0 18 40"><g transform="translate(8.700 9)"><g fill="#4a78d0"><circle r="5.200"/><rect x="-1.500" y="-7.200" width="3" height="14.400"/><rect x="-1.500" y="-7.200" width="3" height="14.400" transform="rotate(45)"/><rect x="-1.500" y="-7.200" width="3" height="14.400" transform="rotate(90)"/><rect x="-1.500" y="-7.200" width="3" height="14.400" transform="rotate(135)"/></g><circle r="2.900" fill="#f0f0f0"/></g><path d="M1.500 37.500C5.500 34 10.500 28.500 15 23.500l.8.800C12 29 7 34.500 3 38.500z" fill="#111" stroke="#111" stroke-width="1.200" stroke-linejoin="round"/><path d="M3.200 25c3.200 2.500 6.800 6.500 9.800 11" fill="none" stroke="#111" stroke-width="2.200" stroke-linecap="round"/></svg>
<div class="abs" style="left:25px;top:816px;width:1574px;height:66px;background:#fff;border:1px solid #55a2ea"></div>

<!-- STATUS BAR -->
<div class="tx" id="t39" style="left:4.8px;top:885.8px;font-size:11.6px;transform:scaleX(0.9481);">Select: Click and drag to select.</div>
<div class="sep" style="left:999px"></div><div class="tx" id="t40" style="left:1006.3px;top:885.8px;font-size:11.6px;transform:scaleX(0.9730);">0 items</div>
<div class="sep" style="left:1097px"></div><div class="sep" style="left:1146px"></div><div class="sep" style="left:1226px"></div>
<div class="tx" id="t41" style="left:1232.3px;top:885.8px;font-size:11.6px;transform:scaleX(0.9531);color:#2222e6">3_keepout:drawing</div>
<div class="sep" style="left:1328px"></div><div class="tx" id="t42" style="left:1334.5px;top:885.8px;font-size:11.6px;transform:scaleX(0.9159);">-13480.0000, 8720.0000</div>
<div class="sep" style="left:1452px"></div><div class="tx" id="t43" style="left:1458.2px;top:885.8px;font-size:11.6px;transform:scaleX(0.9151);">-13480.0000, 8720.0000</div>
<div class="sep" style="left:1576px"></div><div class="tx" id="t44" style="left:1581.5px;top:885.8px;font-size:11.6px;transform:scaleX(0.9375);">um</div>
<div class="abs" style="left:0;top:0;width:1px;height:900px;background:#a0a0a0"></div><div class="abs" style="left:1599px;top:0;width:1px;height:22px;background:#9a9a9a"></div>
</body></html>
